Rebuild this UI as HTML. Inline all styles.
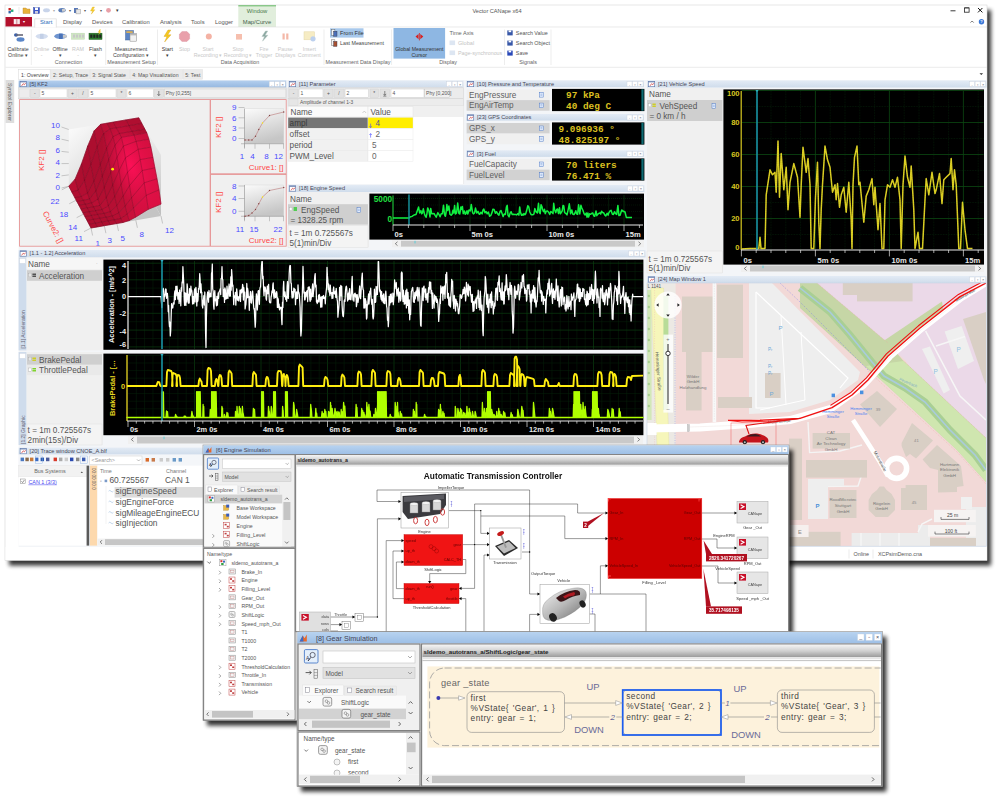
<!DOCTYPE html>
<html><head><meta charset="utf-8"><title>Vector CANape x64</title>
<style>
html,body{margin:0;padding:0;background:#fff;width:1000px;height:800px;overflow:hidden}
svg{display:block;font-family:"Liberation Sans",sans-serif;filter:blur(0.35px)}
</style></head><body>
<svg width="1000" height="800" viewBox="0 0 1000 800">
<defs>
<filter id="sh" x="-5%" y="-5%" width="115%" height="115%"><feGaussianBlur in="SourceAlpha" stdDeviation="2.2"/><feOffset dx="3.5" dy="4.5"/><feComponentTransfer><feFuncA type="linear" slope="0.8"/></feComponentTransfer></filter>
<linearGradient id="tbA" x1="0" y1="0" x2="0" y2="1"><stop offset="0" stop-color="#b4cfee"/><stop offset="1" stop-color="#96b8e0"/></linearGradient>
<linearGradient id="tbI" x1="0" y1="0" x2="0" y2="1"><stop offset="0" stop-color="#e3ebf5"/><stop offset="1" stop-color="#cfdceb"/></linearGradient>
<linearGradient id="hdr" x1="0" y1="0" x2="0" y2="1"><stop offset="0" stop-color="#f4f4f4"/><stop offset="0.5" stop-color="#d0d0d0"/><stop offset="1" stop-color="#9a9a9a"/></linearGradient>
<linearGradient id="wallL" x1="0" y1="0" x2="1" y2="1"><stop offset="0" stop-color="#ffffff"/><stop offset="1" stop-color="#c8c8c8"/></linearGradient><linearGradient id="wallR" x1="0" y1="0" x2="0" y2="1"><stop offset="0" stop-color="#f8f8f8"/><stop offset="1" stop-color="#bdbdbd"/></linearGradient><linearGradient id="mini" x1="0" y1="0" x2="0.3" y2="1"><stop offset="0" stop-color="#fbfbfb"/><stop offset="1" stop-color="#c6c6c6"/></linearGradient><radialGradient id="surf" gradientUnits="userSpaceOnUse" cx="131" cy="166" r="58"><stop offset="0" stop-color="#ff0a50"/><stop offset="0.45" stop-color="#d8103c"/><stop offset="1" stop-color="#a00d2c"/></radialGradient><clipPath id="kfclip"><rect x="20" y="100" width="189.6" height="145.8"/></clipPath><clipPath id="surfclip"><polygon points="68.8,186.2 75.1,179.2 81.5,163.9 87.8,145.9 94.2,130.8 100.6,124.3 106.9,123.2 113.3,122.1 126.0,119.9 138.8,117.8 138.8,117.8 141.8,123.4 144.8,129.1 146.8,132.9 148.9,139.2 150.9,147.1 152.9,157.4 154.9,167.9 157.0,178.8 159.0,189.8 161.0,204.1 161.0,204.1 148.3,209.3 135.5,217.2 129.2,220.5 122.8,222.5 116.5,223.6 110.1,224.7 103.7,225.8 97.4,226.9 91.0,228.0 91.0,228.0 89.0,224.2 87.0,220.4 84.9,216.6 82.9,212.8 80.9,209.0 78.9,205.2 76.8,201.4 74.8,197.6 71.8,191.9 68.8,186.2"/></clipPath><radialGradient id="hl" gradientUnits="userSpaceOnUse" cx="131" cy="166" r="40" gradientTransform="translate(131 166) rotate(70) scale(1.25 0.62) translate(-131 -166)"><stop offset="0" stop-color="#ff1058" stop-opacity="0.95"/><stop offset="0.5" stop-color="#f01050" stop-opacity="0.55"/><stop offset="1" stop-color="#e01048" stop-opacity="0"/></radialGradient><clipPath id="mapclip"><rect x="647" y="283" width="339" height="263"/></clipPath><linearGradient id="winT" x1="0" y1="0" x2="0" y2="1"><stop offset="0" stop-color="#b8d3f0"/><stop offset="1" stop-color="#9dbfe6"/></linearGradient><linearGradient id="carG" x1="0" y1="0" x2="1" y2="1"><stop offset="0" stop-color="#f4f4f4"/><stop offset="0.5" stop-color="#b8b8b8"/><stop offset="1" stop-color="#6a6a6a"/></linearGradient><clipPath id="esclip"><rect x="296" y="466.6" width="492.4" height="165"/></clipPath><clipPath id="gsclip"><rect x="422.6" y="659" width="458" height="115"/></clipPath>
</defs>
<rect x="5" y="5" width="982" height="555.5" fill="#fff" filter="url(#sh)"/>
<rect x="5.00" y="5.00" width="982.00" height="555.50" fill="#ffffff" stroke="#d8d8d8" stroke-width="0.6" />
<rect x="8.50" y="8.00" width="2.40" height="2.40" fill="#c22" />
<rect x="11.00" y="9.50" width="2.40" height="2.40" fill="#2a7" />
<rect x="8.50" y="11.00" width="2.40" height="2.40" fill="#36a" />
<line x1="19.00" y1="7.00" x2="19.00" y2="14.00" stroke="#ddd" stroke-width="0.6" />
<path d="M23 8 h3 l1 1 h3 v4.5 h-7z" fill="#e8b23a" stroke="#b8862a" stroke-width="0.4" />
<rect x="33.50" y="7.60" width="6.00" height="6.00" fill="#3b55c8" stroke="#223a99" stroke-width="0.4" />
<rect x="35.00" y="7.60" width="3.00" height="2.40" fill="#fff" />
<rect x="35.00" y="11.00" width="3.00" height="2.60" fill="#ccd" />
<ellipse cx="46.5" cy="10.3" rx="3.4" ry="2" fill="#c8d4ea"/>
<text x="53.00" y="11.50" font-size="3.5" fill="#aaa" >▾</text>
<ellipse cx="62" cy="10.3" rx="3.6" ry="2.2" fill="#5d7fb8"/>
<rect x="62.00" y="9.00" width="3.00" height="2.60" fill="#ccc" />
<text x="68.50" y="11.50" font-size="3.5" fill="#555" >▾</text>
<rect x="74.00" y="8.00" width="4.00" height="5.00" fill="#5878b8" />
<rect x="76.00" y="9.30" width="4.50" height="4.60" fill="#e8e8e8" stroke="#888" stroke-width="0.4" />
<text x="84.00" y="11.50" font-size="3.5" fill="#555" >▾</text>
<path d="M92.5 7 l-2 4 h2 l-1.2 3.2 l3.6 -4.4 h-2 l1.6 -2.8z" fill="#f6cf2f" stroke="#d8a818" stroke-width="0.3" />
<text x="100.00" y="11.50" font-size="3.5" fill="#555" >▾</text>
<circle cx="108.50" cy="10.30" r="2.4" fill="#e8a0a8" />
<text x="116.00" y="12.00" font-size="4.5" fill="#333" >▾</text>
<text x="497.00" y="13.00" font-size="5.6" fill="#555" text-anchor="middle" >Vector CANape x64</text>
<line x1="950.50" y1="10.80" x2="955.50" y2="10.80" stroke="#222" stroke-width="0.9" />
<rect x="964.50" y="8.00" width="4.60" height="4.20" fill="none" stroke="#222" stroke-width="0.8" />
<line x1="964.50" y1="7.60" x2="969.10" y2="7.60" stroke="#222" stroke-width="0.6" />
<path d="M978 8 l4.4 4.4 M982.4 8 l-4.4 4.4" fill="none" stroke="#111" stroke-width="1" />
<path d="M970.5 22.6 l1.6 -1.6 l1.6 1.6" fill="none" stroke="#444" stroke-width="0.7" />
<circle cx="981.50" cy="21.80" r="2.7" fill="#3b78d8" />
<text x="981.50" y="23.40" font-size="4" fill="#fff" text-anchor="middle" font-weight="bold" >?</text>
<rect x="5.50" y="17.00" width="26.50" height="9.60" fill="#b3102c" />
<rect x="14.00" y="19.30" width="5.60" height="4.60" fill="#f4e8ea" stroke="#fff" stroke-width="0.5" />
<line x1="16.80" y1="19.30" x2="16.80" y2="23.90" stroke="#b3102c" stroke-width="0.5" />
<text x="23.00" y="23.30" font-size="3.5" fill="#fff" >▾</text>
<rect x="238.30" y="5.60" width="37.70" height="21.40" fill="#e1eedc" />
<rect x="238.30" y="5.30" width="37.70" height="1.00" fill="#62b562" />
<text x="257.00" y="12.60" font-size="5.8" fill="#4a7a4a" text-anchor="middle" >Window</text>
<text x="257.00" y="24.00" font-size="5.8" fill="#44624a" text-anchor="middle" >Map/Curve</text>
<line x1="5.50" y1="27.00" x2="987.00" y2="27.00" stroke="#dcdcdc" stroke-width="0.6" />
<path d="M34.7 27.4 v-8.6 h21.6 v8.6" fill="#fff" stroke="#d4d4d4" stroke-width="0.6" />
<text x="40.00" y="24.00" font-size="5.8" fill="#2f6fba" >Start</text>
<text x="63.00" y="24.00" font-size="5.8" fill="#555" >Display</text>
<text x="92.00" y="24.00" font-size="5.8" fill="#555" >Devices</text>
<text x="122.00" y="24.00" font-size="5.8" fill="#555" >Calibration</text>
<text x="160.00" y="24.00" font-size="5.8" fill="#555" >Analysis</text>
<text x="191.00" y="24.00" font-size="5.8" fill="#555" >Tools</text>
<text x="215.00" y="24.00" font-size="5.8" fill="#555" >Logger</text>
<line x1="5.50" y1="67.30" x2="987.00" y2="67.30" stroke="#e2e2e2" stroke-width="0.7" />
<line x1="31.30" y1="29.50" x2="31.30" y2="65.00" stroke="#e0e0e0" stroke-width="0.6" />
<line x1="105.70" y1="29.50" x2="105.70" y2="65.00" stroke="#e0e0e0" stroke-width="0.6" />
<line x1="157.50" y1="29.50" x2="157.50" y2="65.00" stroke="#e0e0e0" stroke-width="0.6" />
<line x1="324.00" y1="29.50" x2="324.00" y2="65.00" stroke="#e0e0e0" stroke-width="0.6" />
<line x1="391.60" y1="29.50" x2="391.60" y2="65.00" stroke="#e0e0e0" stroke-width="0.6" />
<line x1="504.50" y1="29.50" x2="504.50" y2="65.00" stroke="#e0e0e0" stroke-width="0.6" />
<line x1="551.00" y1="29.50" x2="551.00" y2="65.00" stroke="#e0e0e0" stroke-width="0.6" />
<text x="68.50" y="64.30" font-size="5.4" fill="#666" text-anchor="middle" >Connection</text>
<text x="131.50" y="64.30" font-size="5.4" fill="#666" text-anchor="middle" >Measurement Setup</text>
<text x="240.00" y="64.30" font-size="5.4" fill="#666" text-anchor="middle" >Data Acquisition</text>
<text x="358.00" y="64.30" font-size="5.4" fill="#666" text-anchor="middle" >Measurement Data Display</text>
<text x="448.00" y="64.30" font-size="5.4" fill="#666" text-anchor="middle" >Display</text>
<text x="528.00" y="64.30" font-size="5.4" fill="#666" text-anchor="middle" >Signals</text>
<text x="18.00" y="50.50" font-size="5.3" fill="#444" text-anchor="middle" >Calibrate</text>
<text x="18.00" y="56.60" font-size="5.3" fill="#444" text-anchor="middle" >Online ▾</text>
<ellipse cx="16" cy="35" rx="2" ry="1.8" fill="#3a5fa8"/>
<rect x="16.00" y="34.20" width="7.00" height="1.60" fill="#667" />
<ellipse cx="20.5" cy="39.5" rx="4" ry="2.2" fill="#5a86c8"/>
<text x="41.50" y="50.50" font-size="5.3" fill="#c4c4c4" text-anchor="middle" >Online</text>
<text x="41.50" y="56.50" font-size="5" fill="#bbb" text-anchor="middle" >-</text>
<ellipse cx="41.8" cy="36.3" rx="6" ry="2.6" fill="#d3ddef"/>
<rect x="40.00" y="33.80" width="3.60" height="5.00" fill="#c2cfe6" />
<text x="60.00" y="50.50" font-size="5.3" fill="#444" text-anchor="middle" >Offline</text>
<text x="60.00" y="57.00" font-size="4.6" fill="#444" text-anchor="middle" >▾</text>
<ellipse cx="60.5" cy="36.3" rx="6.2" ry="2.8" fill="#6f94cf"/>
<rect x="59.00" y="33.60" width="3.60" height="5.40" fill="#4a73b8" />
<rect x="63.00" y="34.80" width="3.60" height="3.00" fill="#c8c8c8" />
<text x="78.00" y="50.50" font-size="5.3" fill="#c4c4c4" text-anchor="middle" >RAM</text>
<text x="78.00" y="56.50" font-size="5" fill="#bbb" text-anchor="middle" >-</text>
<rect x="71.50" y="33.20" width="13.00" height="6.00" fill="#cfe6c3" stroke="#bcd8b0" stroke-width="0.5" />
<rect x="73.00" y="34.60" width="2.00" height="3.00" fill="#c8c8c8" />
<rect x="76.00" y="34.60" width="2.00" height="3.00" fill="#c8c8c8" />
<rect x="79.00" y="34.60" width="2.00" height="3.00" fill="#c8c8c8" />
<rect x="82.00" y="34.60" width="2.00" height="3.00" fill="#c8c8c8" />
<text x="95.50" y="50.50" font-size="5.3" fill="#444" text-anchor="middle" >Flash</text>
<text x="95.50" y="57.00" font-size="4.6" fill="#444" text-anchor="middle" >▾</text>
<rect x="89.00" y="33.20" width="13.00" height="6.20" fill="#2c7a2c" stroke="#1c5a1c" stroke-width="0.5" />
<rect x="90.30" y="34.60" width="2.00" height="3.20" fill="#222" />
<rect x="93.30" y="34.60" width="2.00" height="3.20" fill="#222" />
<rect x="96.30" y="34.60" width="2.00" height="3.20" fill="#222" />
<rect x="99.30" y="34.60" width="2.00" height="3.20" fill="#222" />
<path d="M99.5 29.5 l-1.6 3 h1.4 l-1 2.4 l3 -3.4 h-1.5 l1.2 -2z" fill="#f2c42c" />
<text x="131.00" y="50.50" font-size="5.3" fill="#444" text-anchor="middle" >Measurement</text>
<text x="131.00" y="56.60" font-size="5.3" fill="#444" text-anchor="middle" >Configuration ▾</text>
<rect x="125.50" y="30.50" width="8.00" height="9.50" fill="#5b84c4" stroke="#46689e" stroke-width="0.5" />
<rect x="126.30" y="31.30" width="6.40" height="1.60" fill="#e9b44c" />
<rect x="130.00" y="33.60" width="6.60" height="7.60" fill="#f2f2f2" stroke="#888" stroke-width="0.5" />
<rect x="130.00" y="33.60" width="6.60" height="1.80" fill="#b8b8b8" />
<text x="167.30" y="50.50" font-size="5.3" fill="#333" text-anchor="middle" >Start</text>
<text x="167.30" y="57.00" font-size="4.6" fill="#333" text-anchor="middle" >▾</text>
<path d="M168 30 l-4 6.4 h3 l-2.4 5.6 l6.4 -7.2 h-3.2 l3 -4.8z" fill="#f6c81e" stroke="#d4a017" stroke-width="0.4" />
<text x="184.50" y="50.50" font-size="5.3" fill="#c8c8c8" text-anchor="middle" >Stop</text>
<path d="M182 31.6 h5 l2.6 2.6 v4.6 l-2.6 2.6 h-5 l-2.6 -2.6 v-4.6z" fill="#e9a0ab" stroke="#d8909c" stroke-width="0.4" />
<text x="208.00" y="50.50" font-size="5.3" fill="#c8c8c8" text-anchor="middle" >Start</text>
<text x="208.00" y="56.60" font-size="5.3" fill="#c8c8c8" text-anchor="middle" >Recording ▾</text>
<circle cx="208.80" cy="36.50" r="3" fill="#f4b2a4" />
<text x="238.00" y="50.50" font-size="5.3" fill="#c8c8c8" text-anchor="middle" >Stop</text>
<text x="238.00" y="56.60" font-size="5.3" fill="#c8c8c8" text-anchor="middle" >Recording ▾</text>
<rect x="236.00" y="34.00" width="6.00" height="5.60" fill="#f6bfae" />
<text x="264.00" y="50.50" font-size="5.3" fill="#c8c8c8" text-anchor="middle" >Fire</text>
<text x="264.00" y="56.60" font-size="5.3" fill="#c8c8c8" text-anchor="middle" >Trigger</text>
<path d="M265.5 31 l-3.6 5.4 h2.6 l-2 4.8 l5.4 -6 h-2.8 l2.6 -4.2z" fill="#8aa7a0" stroke="#b8c8c4" stroke-width="0.5" />
<text x="285.30" y="50.50" font-size="5.3" fill="#c8c8c8" text-anchor="middle" >Pause</text>
<text x="285.30" y="56.60" font-size="5.3" fill="#c8c8c8" text-anchor="middle" >Displays</text>
<rect x="282.50" y="33.50" width="2.20" height="6.00" fill="#f4b8a8" />
<rect x="286.20" y="33.50" width="2.20" height="6.00" fill="#f4b8a8" />
<text x="309.30" y="50.50" font-size="5.3" fill="#c8c8c8" text-anchor="middle" >Insert</text>
<text x="309.30" y="56.60" font-size="5.3" fill="#c8c8c8" text-anchor="middle" >Comment</text>
<rect x="304.00" y="31.80" width="10.50" height="8.00" fill="#f6ecc4" stroke="#e4d8a8" stroke-width="0.5" />
<circle cx="313.00" cy="38.80" r="2.6" fill="#bcd0ee" />
<rect x="330.00" y="28.30" width="33.50" height="9.30" fill="#a7c8ec" />
<rect x="331.50" y="29.60" width="3.40" height="5.60" fill="#f4f4f4" stroke="#555" stroke-width="0.4" />
<rect x="333.60" y="31.20" width="3.40" height="5.00" fill="#4a6fb8" stroke="#334" stroke-width="0.4" />
<text x="340.00" y="35.00" font-size="5.6" fill="#333" >From File</text>
<rect x="331.50" y="39.80" width="3.40" height="5.60" fill="#f4f4f4" stroke="#555" stroke-width="0.4" />
<rect x="333.60" y="41.40" width="3.40" height="5.00" fill="#a85030" stroke="#334" stroke-width="0.4" />
<text x="340.00" y="45.20" font-size="5.3" fill="#444" >Last Measurement</text>
<rect x="393.50" y="28.00" width="51.60" height="30.60" fill="#8eb7e3" />
<path d="M415.5 36.6 l3 -2.6 v5.2z M423.3 36.6 l-3 -2.6 v5.2z" fill="#d82020" />
<line x1="419.40" y1="33.00" x2="419.40" y2="40.40" stroke="#d82020" stroke-width="0.8" />
<text x="419.30" y="50.50" font-size="5.2" fill="#333" text-anchor="middle" >Global Measurement</text>
<text x="419.30" y="56.60" font-size="5.2" fill="#333" text-anchor="middle" >Cursor</text>
<text x="449.50" y="35.00" font-size="5.6" fill="#666" >Time Axis</text>
<rect x="449.50" y="40.50" width="5.60" height="4.60" fill="#dde6f2" />
<text x="458.00" y="45.20" font-size="5.6" fill="#c4c4c4" >Global</text>
<rect x="449.50" y="50.50" width="5.60" height="4.60" fill="#dde6f2" />
<text x="458.00" y="55.20" font-size="5.3" fill="#c4c4c4" >Page-synchronous</text>
<rect x="507.30" y="30.40" width="5.40" height="5.00" fill="#3858a8" />
<rect x="508.60" y="30.40" width="2.60" height="1.80" fill="#fff" />
<text x="515.80" y="35.00" font-size="5.4" fill="#555" >Search Value</text>
<rect x="507.30" y="40.60" width="5.40" height="5.00" fill="#3858a8" />
<rect x="508.60" y="40.60" width="2.60" height="1.80" fill="#fff" />
<text x="515.80" y="45.20" font-size="5.4" fill="#555" >Search Object</text>
<rect x="507.30" y="50.60" width="5.40" height="5.00" fill="#2848b8" />
<rect x="508.60" y="50.60" width="2.60" height="1.80" fill="#fff" />
<text x="515.80" y="55.20" font-size="5.4" fill="#555" >Save</text>
<rect x="18.60" y="69.30" width="31.60" height="10.20" fill="#fff" stroke="#dcdcdc" stroke-width="0.6" />
<text x="21.00" y="76.70" font-size="5.2" fill="#444" >1: Overview</text>
<rect x="50.80" y="69.60" width="38.60" height="9.60" fill="#ebebeb" stroke="#e0e0e0" stroke-width="0.5" />
<text x="53.00" y="76.70" font-size="5.2" fill="#555" >2: Setup, Trace</text>
<rect x="90.00" y="69.60" width="39.40" height="9.60" fill="#ebebeb" stroke="#e0e0e0" stroke-width="0.5" />
<text x="92.20" y="76.70" font-size="5.2" fill="#555" >3: Signal State</text>
<rect x="130.00" y="69.60" width="52.40" height="9.60" fill="#ebebeb" stroke="#e0e0e0" stroke-width="0.5" />
<text x="132.20" y="76.70" font-size="5.2" fill="#555" >4: Map Visualization</text>
<rect x="183.00" y="69.60" width="19.60" height="9.60" fill="#ebebeb" stroke="#e0e0e0" stroke-width="0.5" />
<text x="185.20" y="76.70" font-size="5.2" fill="#555" >5: Test</text>
<path d="M979.5 73.3 l1.8 1.8 l1.8 -1.8z" fill="#333" />
<rect x="18.60" y="80.00" width="968.00" height="467.00" fill="#f3f5f8" />
<rect x="5.60" y="80.00" width="8.60" height="43.00" fill="#dddddd" />
<text transform="translate(7.6,83) rotate(90)" font-size="5.2" fill="#666">Symbol Explorer</text>
<rect x="5.60" y="547.00" width="981.00" height="13.00" fill="#fff" />
<line x1="849.00" y1="549.50" x2="849.00" y2="558.50" stroke="#ddd" stroke-width="0.6" />
<line x1="873.00" y1="549.50" x2="873.00" y2="558.50" stroke="#ddd" stroke-width="0.6" />
<text x="853.50" y="556.40" font-size="5.4" fill="#555" >Online</text>
<text x="878.00" y="556.40" font-size="5.4" fill="#555" >XCPsimDemo.cna</text>
<rect x="18.60" y="80.50" width="267.60" height="7.00" fill="url(#tbA)" />
<rect x="20.10" y="81.30" width="6.20" height="5.40" fill="#fff" stroke="#5a74a8" stroke-width="0.6" />
<line x1="20.10" y1="81.90" x2="26.30" y2="81.90" stroke="#5a74a8" stroke-width="0.8" />
<path d="M21.6 85.9 l1.6 -2.2 l1.2 1 l1.2 -1.6" fill="none" stroke="#c33" stroke-width="0.7" />
<text x="29.60" y="85.80" font-size="5.6" fill="#445" >[5] KF2</text>
<rect x="269.20" y="81.50" width="5.00" height="5.00" fill="#fff" stroke="#c8d0dc" stroke-width="0.4" />
<text x="271.70" y="85.50" font-size="4" fill="#556" text-anchor="middle" >.</text>
<rect x="274.70" y="81.50" width="5.00" height="5.00" fill="#fff" stroke="#c8d0dc" stroke-width="0.4" />
<text x="277.20" y="85.50" font-size="4" fill="#556" text-anchor="middle" >▫</text>
<rect x="280.20" y="81.50" width="5.00" height="5.00" fill="#fff" stroke="#c8d0dc" stroke-width="0.4" />
<text x="282.70" y="85.50" font-size="4" fill="#556" text-anchor="middle" >×</text>
<rect x="18.60" y="87.80" width="267.60" height="11.00" fill="#ececec" stroke="#cfcfcf" stroke-width="0.5" />
<rect x="19.60" y="89.00" width="10.00" height="8.60" fill="#ededed" stroke="#d6d6d6" stroke-width="0.4" />
<rect x="30.50" y="89.00" width="8.60" height="8.60" fill="#e2e2e2" stroke="#cfcfcf" stroke-width="0.4" />
<text x="34.80" y="95.40" font-size="5" fill="#555" text-anchor="middle" >-</text>
<rect x="40.00" y="89.00" width="27.00" height="8.60" fill="#fff" stroke="#c8c8c8" stroke-width="0.4" />
<text x="41.50" y="95.30" font-size="5" fill="#555" >5</text>
<rect x="68.00" y="89.00" width="9.00" height="8.60" fill="#e2e2e2" stroke="#cfcfcf" stroke-width="0.4" />
<text x="72.50" y="95.40" font-size="5" fill="#555" text-anchor="middle" >+</text>
<rect x="78.00" y="89.00" width="10.00" height="8.60" fill="#e2e2e2" stroke="#cfcfcf" stroke-width="0.4" />
<text x="83.00" y="95.40" font-size="5" fill="#555" text-anchor="middle" >/</text>
<rect x="89.00" y="89.00" width="27.00" height="8.60" fill="#fff" stroke="#c8c8c8" stroke-width="0.4" />
<text x="90.50" y="95.30" font-size="5" fill="#555" >5</text>
<rect x="117.00" y="89.00" width="9.00" height="8.60" fill="#e2e2e2" stroke="#cfcfcf" stroke-width="0.4" />
<text x="121.50" y="95.40" font-size="5" fill="#555" text-anchor="middle" >*</text>
<rect x="127.00" y="89.00" width="26.60" height="8.60" fill="#fff" stroke="#c8c8c8" stroke-width="0.4" />
<text x="128.50" y="95.30" font-size="5" fill="#555" >6</text>
<rect x="154.00" y="89.00" width="9.60" height="8.60" fill="#e2e2e2" stroke="#cfcfcf" stroke-width="0.4" />
<text x="158.80" y="95.40" font-size="5" fill="#555" text-anchor="middle" ></text>
<path d="M158.8 91 v4.6 m-1.4 -1.5 l1.4 1.5 l1.4 -1.5" fill="none" stroke="#444" stroke-width="0.6" />
<rect x="164.30" y="89.00" width="121.60" height="8.60" fill="#f0f0f0" stroke="#c8c8c8" stroke-width="0.4" />
<text x="165.80" y="95.30" font-size="5" fill="#555" >Phy [0,255]</text>
<rect x="19.60" y="99.60" width="190.50" height="146.60" fill="#f0f0f0" stroke="#e58a8a" stroke-width="0.8" />
<rect x="210.60" y="99.60" width="75.60" height="74.20" fill="#f0f0f0" stroke="#e58a8a" stroke-width="0.8" />
<rect x="210.60" y="174.40" width="75.60" height="71.80" fill="#f0f0f0" stroke="#e58a8a" stroke-width="0.8" />
<g clip-path="url(#kfclip)">
<polygon points="68.8,129.5 138.8,118.0 138.8,176.0 68.8,186.2" fill="url(#wallL)" />
<polygon points="138.8,118.0 161.0,155.0 161.0,216.0 138.8,176.0" fill="url(#wallR)" />
<polygon points="68.8,186.2 138.8,176.0 161.0,216.0 91.0,228.0" fill="#c4c4c4" />
<text x="60.00" y="127.50" font-size="8" fill="#4a4aff" text-anchor="end" >10</text>
<line x1="61.50" y1="127.00" x2="68.75" y2="129.50" stroke="#999" stroke-width="0.5" />
<text x="60.00" y="140.00" font-size="8" fill="#4a4aff" text-anchor="end" >8</text>
<line x1="61.50" y1="139.20" x2="68.75" y2="140.85" stroke="#999" stroke-width="0.5" />
<text x="60.00" y="152.50" font-size="8" fill="#4a4aff" text-anchor="end" >6</text>
<line x1="61.50" y1="151.40" x2="68.75" y2="152.20" stroke="#999" stroke-width="0.5" />
<text x="60.00" y="165.00" font-size="8" fill="#4a4aff" text-anchor="end" >4</text>
<line x1="61.50" y1="163.60" x2="68.75" y2="163.55" stroke="#999" stroke-width="0.5" />
<text x="60.00" y="177.50" font-size="8" fill="#4a4aff" text-anchor="end" >2</text>
<line x1="61.50" y1="175.80" x2="68.75" y2="174.90" stroke="#999" stroke-width="0.5" />
<text x="60.00" y="190.00" font-size="8" fill="#4a4aff" text-anchor="end" >0</text>
<line x1="61.50" y1="188.00" x2="68.75" y2="186.25" stroke="#999" stroke-width="0.5" />
<text transform="translate(43.6,171) rotate(-90)" font-size="8" fill="#ff4848">KF2 []</text>
<text x="50.60" y="203.60" font-size="8" fill="#4a4aff" >22</text>
<text x="59.40" y="216.80" font-size="8" fill="#4a4aff" >18</text>
<text x="68.20" y="230.40" font-size="8" fill="#4a4aff" >14</text>
<text x="74.60" y="240.60" font-size="8" fill="#4a4aff" >11</text>
<line x1="68.75" y1="186.25" x2="61.75" y2="189.85" stroke="#999" stroke-width="0.5" />
<line x1="76.20" y1="200.20" x2="69.20" y2="203.80" stroke="#999" stroke-width="0.5" />
<line x1="83.60" y1="214.10" x2="76.60" y2="217.70" stroke="#999" stroke-width="0.5" />
<line x1="91.00" y1="228.00" x2="84.00" y2="231.60" stroke="#999" stroke-width="0.5" />
<text transform="translate(42.5,213) rotate(62)" font-size="8" fill="#ff4848">Curve2: []</text>
<text x="95.50" y="245.60" font-size="8" fill="#4a4aff" >1</text>
<text x="107.60" y="243.00" font-size="8" fill="#4a4aff" >3</text>
<text x="120.50" y="241.00" font-size="8" fill="#4a4aff" >5</text>
<text x="139.60" y="237.40" font-size="8" fill="#4a4aff" >8</text>
<text x="165.00" y="233.40" font-size="8" fill="#4a4aff" >12</text>
<line x1="91.00" y1="228.00" x2="92.60" y2="235.50" stroke="#999" stroke-width="0.5" />
<line x1="104.30" y1="225.72" x2="105.90" y2="233.22" stroke="#999" stroke-width="0.5" />
<line x1="116.90" y1="223.56" x2="118.50" y2="231.06" stroke="#999" stroke-width="0.5" />
<line x1="135.80" y1="220.32" x2="137.40" y2="227.82" stroke="#999" stroke-width="0.5" />
<line x1="161.00" y1="216.00" x2="162.60" y2="223.50" stroke="#999" stroke-width="0.5" />
<text x="133.00" y="252.60" font-size="8" fill="#ff4848" >Curve1: []</text>
<polygon points="68.8,186.2 75.1,179.2 78.1,190.2 71.8,191.9" fill="#b80f33" stroke="#b80f33" stroke-width="0.6" stroke-linejoin="round"/>
<polygon points="75.1,179.2 81.5,163.9 84.5,180.3 78.1,190.2" fill="#ad0e2f" stroke="#ad0e2f" stroke-width="0.6" stroke-linejoin="round"/>
<polygon points="81.5,163.9 87.8,145.9 90.9,164.1 84.5,180.3" fill="#ab0d2f" stroke="#ab0d2f" stroke-width="0.6" stroke-linejoin="round"/>
<polygon points="87.8,145.9 94.2,130.8 97.2,146.8 90.9,164.1" fill="#ac0e2f" stroke="#ac0e2f" stroke-width="0.6" stroke-linejoin="round"/>
<polygon points="94.2,130.8 100.6,124.3 103.6,133.5 97.2,146.8" fill="#b20e31" stroke="#b20e31" stroke-width="0.6" stroke-linejoin="round"/>
<polygon points="100.6,124.3 106.9,123.2 110.0,128.9 103.6,133.5" fill="#b90f34" stroke="#b90f34" stroke-width="0.6" stroke-linejoin="round"/>
<polygon points="106.9,123.2 113.3,122.1 116.3,127.8 110.0,128.9" fill="#af0e30" stroke="#af0e30" stroke-width="0.6" stroke-linejoin="round"/>
<polygon points="113.3,122.1 126.0,119.9 129.1,125.6 116.3,127.8" fill="#af0e30" stroke="#af0e30" stroke-width="0.6" stroke-linejoin="round"/>
<polygon points="126.0,119.9 138.8,117.8 141.8,123.4 129.1,125.6" fill="#af0e30" stroke="#af0e30" stroke-width="0.6" stroke-linejoin="round"/>
<polygon points="71.8,191.9 78.1,190.2 81.2,196.5 74.8,197.6" fill="#b10e31" stroke="#b10e31" stroke-width="0.6" stroke-linejoin="round"/>
<polygon points="78.1,190.2 84.5,180.3 87.5,193.1 81.2,196.5" fill="#b30e32" stroke="#b30e32" stroke-width="0.6" stroke-linejoin="round"/>
<polygon points="84.5,180.3 90.9,164.1 93.9,181.1 87.5,193.1" fill="#ac0e2f" stroke="#ac0e2f" stroke-width="0.6" stroke-linejoin="round"/>
<polygon points="90.9,164.1 97.2,146.8 100.3,164.6 93.9,181.1" fill="#ab0d2f" stroke="#ab0d2f" stroke-width="0.6" stroke-linejoin="round"/>
<polygon points="97.2,146.8 103.6,133.5 106.6,148.2 100.3,164.6" fill="#ad0e2f" stroke="#ad0e2f" stroke-width="0.6" stroke-linejoin="round"/>
<polygon points="103.6,133.5 110.0,128.9 113.0,136.6 106.6,148.2" fill="#b40e32" stroke="#b40e32" stroke-width="0.6" stroke-linejoin="round"/>
<polygon points="110.0,128.9 116.3,127.8 119.4,133.5 113.0,136.6" fill="#b50e32" stroke="#b50e32" stroke-width="0.6" stroke-linejoin="round"/>
<polygon points="116.3,127.8 129.1,125.6 132.1,131.3 119.4,133.5" fill="#af0e30" stroke="#af0e30" stroke-width="0.6" stroke-linejoin="round"/>
<polygon points="129.1,125.6 141.8,123.4 144.8,129.1 132.1,131.3" fill="#af0e30" stroke="#af0e30" stroke-width="0.6" stroke-linejoin="round"/>
<polygon points="74.8,197.6 81.2,196.5 83.2,200.3 76.8,201.4" fill="#af0e30" stroke="#af0e30" stroke-width="0.6" stroke-linejoin="round"/>
<polygon points="81.2,196.5 87.5,193.1 89.6,199.0 83.2,200.3" fill="#b90f34" stroke="#b90f34" stroke-width="0.6" stroke-linejoin="round"/>
<polygon points="87.5,193.1 93.9,181.1 95.9,190.9 89.6,199.0" fill="#af0e30" stroke="#af0e30" stroke-width="0.6" stroke-linejoin="round"/>
<polygon points="93.9,181.1 100.3,164.6 102.3,176.3 95.9,190.9" fill="#ac0e2f" stroke="#ac0e2f" stroke-width="0.6" stroke-linejoin="round"/>
<polygon points="100.3,164.6 106.6,148.2 108.7,159.5 102.3,176.3" fill="#ac0e2f" stroke="#ac0e2f" stroke-width="0.6" stroke-linejoin="round"/>
<polygon points="106.6,148.2 113.0,136.6 115.0,145.1 108.7,159.5" fill="#ae0e30" stroke="#ae0e30" stroke-width="0.6" stroke-linejoin="round"/>
<polygon points="113.0,136.6 119.4,133.5 121.4,137.4 115.0,145.1" fill="#b80f33" stroke="#b80f33" stroke-width="0.6" stroke-linejoin="round"/>
<polygon points="119.4,133.5 132.1,131.3 134.1,135.1 121.4,137.4" fill="#b00e30" stroke="#b00e30" stroke-width="0.6" stroke-linejoin="round"/>
<polygon points="132.1,131.3 144.8,129.1 146.8,132.9 134.1,135.1" fill="#af0e30" stroke="#af0e30" stroke-width="0.6" stroke-linejoin="round"/>
<polygon points="76.8,201.4 83.2,200.3 85.2,204.1 78.9,205.2" fill="#af0e30" stroke="#af0e30" stroke-width="0.6" stroke-linejoin="round"/>
<polygon points="83.2,200.3 89.6,199.0 91.6,203.0 85.2,204.1" fill="#b00e31" stroke="#b00e31" stroke-width="0.6" stroke-linejoin="round"/>
<polygon points="89.6,199.0 95.9,190.9 98.0,199.2 91.6,203.0" fill="#b40e32" stroke="#b40e32" stroke-width="0.6" stroke-linejoin="round"/>
<polygon points="95.9,190.9 102.3,176.3 104.3,187.7 98.0,199.2" fill="#ae0e30" stroke="#ae0e30" stroke-width="0.6" stroke-linejoin="round"/>
<polygon points="102.3,176.3 108.7,159.5 110.7,172.4 104.3,187.7" fill="#ae0e30" stroke="#ae0e30" stroke-width="0.6" stroke-linejoin="round"/>
<polygon points="108.7,159.5 115.0,145.1 117.0,157.1 110.7,172.4" fill="#b10e31" stroke="#b10e31" stroke-width="0.6" stroke-linejoin="round"/>
<polygon points="115.0,145.1 121.4,137.4 123.4,146.0 117.0,157.1" fill="#bb0f35" stroke="#bb0f35" stroke-width="0.6" stroke-linejoin="round"/>
<polygon points="121.4,137.4 134.1,135.1 136.1,141.4 123.4,146.0" fill="#d20f3f" stroke="#d20f3f" stroke-width="0.6" stroke-linejoin="round"/>
<polygon points="134.1,135.1 146.8,132.9 148.9,139.2 136.1,141.4" fill="#cb0f3c" stroke="#cb0f3c" stroke-width="0.6" stroke-linejoin="round"/>
<polygon points="78.9,205.2 85.2,204.1 87.2,207.9 80.9,209.0" fill="#af0e30" stroke="#af0e30" stroke-width="0.6" stroke-linejoin="round"/>
<polygon points="85.2,204.1 91.6,203.0 93.6,206.8 87.2,207.9" fill="#af0e30" stroke="#af0e30" stroke-width="0.6" stroke-linejoin="round"/>
<polygon points="91.6,203.0 98.0,199.2 100.0,205.3 93.6,206.8" fill="#b90f34" stroke="#b90f34" stroke-width="0.6" stroke-linejoin="round"/>
<polygon points="98.0,199.2 104.3,187.7 106.3,197.7 100.0,205.3" fill="#b20e31" stroke="#b20e31" stroke-width="0.6" stroke-linejoin="round"/>
<polygon points="104.3,187.7 110.7,172.4 112.7,185.0 106.3,197.7" fill="#b00e31" stroke="#b00e31" stroke-width="0.6" stroke-linejoin="round"/>
<polygon points="110.7,172.4 117.0,157.1 119.1,170.5 112.7,185.0" fill="#b30e31" stroke="#b30e31" stroke-width="0.6" stroke-linejoin="round"/>
<polygon points="117.0,157.1 123.4,146.0 125.4,157.9 119.1,170.5" fill="#ba0f34" stroke="#ba0f34" stroke-width="0.6" stroke-linejoin="round"/>
<polygon points="123.4,146.0 136.1,141.4 138.2,149.3 125.4,157.9" fill="#d70f40" stroke="#d70f40" stroke-width="0.6" stroke-linejoin="round"/>
<polygon points="136.1,141.4 148.9,139.2 150.9,147.1 138.2,149.3" fill="#d60f40" stroke="#d60f40" stroke-width="0.6" stroke-linejoin="round"/>
<polygon points="80.9,209.0 87.2,207.9 89.3,211.7 82.9,212.8" fill="#af0e30" stroke="#af0e30" stroke-width="0.6" stroke-linejoin="round"/>
<polygon points="87.2,207.9 93.6,206.8 95.6,210.6 89.3,211.7" fill="#af0e30" stroke="#af0e30" stroke-width="0.6" stroke-linejoin="round"/>
<polygon points="93.6,206.8 100.0,205.3 102.0,209.5 95.6,210.6" fill="#b10e31" stroke="#b10e31" stroke-width="0.6" stroke-linejoin="round"/>
<polygon points="100.0,205.3 106.3,197.7 108.4,205.8 102.0,209.5" fill="#b60f33" stroke="#b60f33" stroke-width="0.6" stroke-linejoin="round"/>
<polygon points="106.3,197.7 112.7,185.0 114.7,196.5 108.4,205.8" fill="#b30e32" stroke="#b30e32" stroke-width="0.6" stroke-linejoin="round"/>
<polygon points="112.7,185.0 119.1,170.5 121.1,184.3 114.7,196.5" fill="#b50e32" stroke="#b50e32" stroke-width="0.6" stroke-linejoin="round"/>
<polygon points="119.1,170.5 125.4,157.9 127.5,172.2 121.1,184.3" fill="#bc0f35" stroke="#bc0f35" stroke-width="0.6" stroke-linejoin="round"/>
<polygon points="125.4,157.9 138.2,149.3 140.2,159.6 127.5,172.2" fill="#d30f3f" stroke="#d30f3f" stroke-width="0.6" stroke-linejoin="round"/>
<polygon points="138.2,149.3 150.9,147.1 152.9,157.4 140.2,159.6" fill="#dd1043" stroke="#dd1043" stroke-width="0.6" stroke-linejoin="round"/>
<polygon points="82.9,212.8 89.3,211.7 91.3,215.5 84.9,216.6" fill="#af0e30" stroke="#af0e30" stroke-width="0.6" stroke-linejoin="round"/>
<polygon points="89.3,211.7 95.6,210.6 97.7,214.4 91.3,215.5" fill="#af0e30" stroke="#af0e30" stroke-width="0.6" stroke-linejoin="round"/>
<polygon points="95.6,210.6 102.0,209.5 104.0,213.3 97.7,214.4" fill="#af0e30" stroke="#af0e30" stroke-width="0.6" stroke-linejoin="round"/>
<polygon points="102.0,209.5 108.4,205.8 110.4,211.7 104.0,213.3" fill="#b80f34" stroke="#b80f34" stroke-width="0.6" stroke-linejoin="round"/>
<polygon points="108.4,205.8 114.7,196.5 116.8,205.7 110.4,211.7" fill="#b60f33" stroke="#b60f33" stroke-width="0.6" stroke-linejoin="round"/>
<polygon points="114.7,196.5 121.1,184.3 123.1,196.2 116.8,205.7" fill="#b70f33" stroke="#b70f33" stroke-width="0.6" stroke-linejoin="round"/>
<polygon points="121.1,184.3 127.5,172.2 129.5,185.7 123.1,196.2" fill="#bc0f35" stroke="#bc0f35" stroke-width="0.6" stroke-linejoin="round"/>
<polygon points="127.5,172.2 140.2,159.6 142.2,170.5 129.5,185.7" fill="#cc0f3c" stroke="#cc0f3c" stroke-width="0.6" stroke-linejoin="round"/>
<polygon points="140.2,159.6 152.9,157.4 154.9,167.9 142.2,170.5" fill="#dd1044" stroke="#dd1044" stroke-width="0.6" stroke-linejoin="round"/>
<polygon points="84.9,216.6 91.3,215.5 93.3,219.3 87.0,220.4" fill="#af0e30" stroke="#af0e30" stroke-width="0.6" stroke-linejoin="round"/>
<polygon points="91.3,215.5 97.7,214.4 99.7,218.2 93.3,219.3" fill="#af0e30" stroke="#af0e30" stroke-width="0.6" stroke-linejoin="round"/>
<polygon points="97.7,214.4 104.0,213.3 106.0,217.1 99.7,218.2" fill="#af0e30" stroke="#af0e30" stroke-width="0.6" stroke-linejoin="round"/>
<polygon points="104.0,213.3 110.4,211.7 112.4,216.0 106.0,217.1" fill="#b20e31" stroke="#b20e31" stroke-width="0.6" stroke-linejoin="round"/>
<polygon points="110.4,211.7 116.8,205.7 118.8,212.9 112.4,216.0" fill="#b80f34" stroke="#b80f34" stroke-width="0.6" stroke-linejoin="round"/>
<polygon points="116.8,205.7 123.1,196.2 125.1,206.2 118.8,212.9" fill="#ba0f34" stroke="#ba0f34" stroke-width="0.6" stroke-linejoin="round"/>
<polygon points="123.1,196.2 129.5,185.7 131.5,197.8 125.1,206.2" fill="#be0f36" stroke="#be0f36" stroke-width="0.6" stroke-linejoin="round"/>
<polygon points="129.5,185.7 142.2,170.5 144.2,182.8 131.5,197.8" fill="#ca0f3b" stroke="#ca0f3b" stroke-width="0.6" stroke-linejoin="round"/>
<polygon points="142.2,170.5 154.9,167.9 157.0,178.8 144.2,182.8" fill="#dd1044" stroke="#dd1044" stroke-width="0.6" stroke-linejoin="round"/>
<polygon points="87.0,220.4 93.3,219.3 95.3,223.1 89.0,224.2" fill="#af0e30" stroke="#af0e30" stroke-width="0.6" stroke-linejoin="round"/>
<polygon points="93.3,219.3 99.7,218.2 101.7,222.0 95.3,223.1" fill="#af0e30" stroke="#af0e30" stroke-width="0.6" stroke-linejoin="round"/>
<polygon points="99.7,218.2 106.0,217.1 108.1,220.9 101.7,222.0" fill="#af0e30" stroke="#af0e30" stroke-width="0.6" stroke-linejoin="round"/>
<polygon points="106.0,217.1 112.4,216.0 114.4,219.8 108.1,220.9" fill="#af0e30" stroke="#af0e30" stroke-width="0.6" stroke-linejoin="round"/>
<polygon points="112.4,216.0 118.8,212.9 120.8,218.3 114.4,219.8" fill="#b60f33" stroke="#b60f33" stroke-width="0.6" stroke-linejoin="round"/>
<polygon points="118.8,212.9 125.1,206.2 127.2,214.1 120.8,218.3" fill="#bc0f35" stroke="#bc0f35" stroke-width="0.6" stroke-linejoin="round"/>
<polygon points="125.1,206.2 131.5,197.8 133.5,208.0 127.2,214.1" fill="#c10f37" stroke="#c10f37" stroke-width="0.6" stroke-linejoin="round"/>
<polygon points="131.5,197.8 144.2,182.8 146.2,195.3 133.5,208.0" fill="#cb0f3b" stroke="#cb0f3b" stroke-width="0.6" stroke-linejoin="round"/>
<polygon points="144.2,182.8 157.0,178.8 159.0,189.8 146.2,195.3" fill="#dc1043" stroke="#dc1043" stroke-width="0.6" stroke-linejoin="round"/>
<polygon points="89.0,224.2 95.3,223.1 97.4,226.9 91.0,228.0" fill="#af0e30" stroke="#af0e30" stroke-width="0.6" stroke-linejoin="round"/>
<polygon points="95.3,223.1 101.7,222.0 103.7,225.8 97.4,226.9" fill="#af0e30" stroke="#af0e30" stroke-width="0.6" stroke-linejoin="round"/>
<polygon points="101.7,222.0 108.1,220.9 110.1,224.7 103.7,225.8" fill="#af0e30" stroke="#af0e30" stroke-width="0.6" stroke-linejoin="round"/>
<polygon points="108.1,220.9 114.4,219.8 116.5,223.6 110.1,224.7" fill="#af0e30" stroke="#af0e30" stroke-width="0.6" stroke-linejoin="round"/>
<polygon points="114.4,219.8 120.8,218.3 122.8,222.5 116.5,223.6" fill="#b20e31" stroke="#b20e31" stroke-width="0.6" stroke-linejoin="round"/>
<polygon points="120.8,218.3 127.2,214.1 129.2,220.5 122.8,222.5" fill="#bc0f35" stroke="#bc0f35" stroke-width="0.6" stroke-linejoin="round"/>
<polygon points="127.2,214.1 133.5,208.0 135.5,217.2 129.2,220.5" fill="#c80f3a" stroke="#c80f3a" stroke-width="0.6" stroke-linejoin="round"/>
<polygon points="133.5,208.0 146.2,195.3 148.3,209.3 135.5,217.2" fill="#d30f3f" stroke="#d30f3f" stroke-width="0.6" stroke-linejoin="round"/>
<polygon points="146.2,195.3 159.0,189.8 161.0,204.1 148.3,209.3" fill="#dc1043" stroke="#dc1043" stroke-width="0.6" stroke-linejoin="round"/>
<rect x="60" y="110" width="110" height="125" fill="url(#hl)" clip-path="url(#surfclip)"/>
<polyline points="68.8,186.2 71.8,191.9 74.8,197.6 76.8,201.4 78.9,205.2 80.9,209.0 82.9,212.8 84.9,216.6 87.0,220.4 89.0,224.2 91.0,228.0" fill="none" stroke="#5e071a" stroke-width="0.45" opacity="0.75"/>
<polyline points="75.1,179.2 78.1,190.2 81.2,196.5 83.2,200.3 85.2,204.1 87.2,207.9 89.3,211.7 91.3,215.5 93.3,219.3 95.3,223.1 97.4,226.9" fill="none" stroke="#5e071a" stroke-width="0.45" opacity="0.75"/>
<polyline points="81.5,163.9 84.5,180.3 87.5,193.1 89.6,199.0 91.6,203.0 93.6,206.8 95.6,210.6 97.7,214.4 99.7,218.2 101.7,222.0 103.7,225.8" fill="none" stroke="#5e071a" stroke-width="0.45" opacity="0.75"/>
<polyline points="87.8,145.9 90.9,164.1 93.9,181.1 95.9,190.9 98.0,199.2 100.0,205.3 102.0,209.5 104.0,213.3 106.0,217.1 108.1,220.9 110.1,224.7" fill="none" stroke="#5e071a" stroke-width="0.45" opacity="0.75"/>
<polyline points="94.2,130.8 97.2,146.8 100.3,164.6 102.3,176.3 104.3,187.7 106.3,197.7 108.4,205.8 110.4,211.7 112.4,216.0 114.4,219.8 116.5,223.6" fill="none" stroke="#5e071a" stroke-width="0.45" opacity="0.75"/>
<polyline points="100.6,124.3 103.6,133.5 106.6,148.2 108.7,159.5 110.7,172.4 112.7,185.0 114.7,196.5 116.8,205.7 118.8,212.9 120.8,218.3 122.8,222.5" fill="none" stroke="#5e071a" stroke-width="0.45" opacity="0.75"/>
<polyline points="106.9,123.2 110.0,128.9 113.0,136.6 115.0,145.1 117.0,157.1 119.1,170.5 121.1,184.3 123.1,196.2 125.1,206.2 127.2,214.1 129.2,220.5" fill="none" stroke="#5e071a" stroke-width="0.45" opacity="0.75"/>
<polyline points="113.3,122.1 116.3,127.8 119.4,133.5 121.4,137.4 123.4,146.0 125.4,157.9 127.5,172.2 129.5,185.7 131.5,197.8 133.5,208.0 135.5,217.2" fill="none" stroke="#5e071a" stroke-width="0.45" opacity="0.75"/>
<polyline points="126.0,119.9 129.1,125.6 132.1,131.3 134.1,135.1 136.1,141.4 138.2,149.3 140.2,159.6 142.2,170.5 144.2,182.8 146.2,195.3 148.3,209.3" fill="none" stroke="#5e071a" stroke-width="0.45" opacity="0.75"/>
<polyline points="138.8,117.8 141.8,123.4 144.8,129.1 146.8,132.9 148.9,139.2 150.9,147.1 152.9,157.4 154.9,167.9 157.0,178.8 159.0,189.8 161.0,204.1" fill="none" stroke="#5e071a" stroke-width="0.45" opacity="0.75"/>
<polyline points="68.8,186.2 75.1,179.2 81.5,163.9 87.8,145.9 94.2,130.8 100.6,124.3 106.9,123.2 113.3,122.1 126.0,119.9 138.8,117.8" fill="none" stroke="#5e071a" stroke-width="0.45" opacity="0.75"/>
<polyline points="71.8,191.9 78.1,190.2 84.5,180.3 90.9,164.1 97.2,146.8 103.6,133.5 110.0,128.9 116.3,127.8 129.1,125.6 141.8,123.4" fill="none" stroke="#5e071a" stroke-width="0.45" opacity="0.75"/>
<polyline points="74.8,197.6 81.2,196.5 87.5,193.1 93.9,181.1 100.3,164.6 106.6,148.2 113.0,136.6 119.4,133.5 132.1,131.3 144.8,129.1" fill="none" stroke="#5e071a" stroke-width="0.45" opacity="0.75"/>
<polyline points="76.8,201.4 83.2,200.3 89.6,199.0 95.9,190.9 102.3,176.3 108.7,159.5 115.0,145.1 121.4,137.4 134.1,135.1 146.8,132.9" fill="none" stroke="#5e071a" stroke-width="0.45" opacity="0.75"/>
<polyline points="78.9,205.2 85.2,204.1 91.6,203.0 98.0,199.2 104.3,187.7 110.7,172.4 117.0,157.1 123.4,146.0 136.1,141.4 148.9,139.2" fill="none" stroke="#5e071a" stroke-width="0.45" opacity="0.75"/>
<polyline points="80.9,209.0 87.2,207.9 93.6,206.8 100.0,205.3 106.3,197.7 112.7,185.0 119.1,170.5 125.4,157.9 138.2,149.3 150.9,147.1" fill="none" stroke="#5e071a" stroke-width="0.45" opacity="0.75"/>
<polyline points="82.9,212.8 89.3,211.7 95.6,210.6 102.0,209.5 108.4,205.8 114.7,196.5 121.1,184.3 127.5,172.2 140.2,159.6 152.9,157.4" fill="none" stroke="#5e071a" stroke-width="0.45" opacity="0.75"/>
<polyline points="84.9,216.6 91.3,215.5 97.7,214.4 104.0,213.3 110.4,211.7 116.8,205.7 123.1,196.2 129.5,185.7 142.2,170.5 154.9,167.9" fill="none" stroke="#5e071a" stroke-width="0.45" opacity="0.75"/>
<polyline points="87.0,220.4 93.3,219.3 99.7,218.2 106.0,217.1 112.4,216.0 118.8,212.9 125.1,206.2 131.5,197.8 144.2,182.8 157.0,178.8" fill="none" stroke="#5e071a" stroke-width="0.45" opacity="0.75"/>
<polyline points="89.0,224.2 95.3,223.1 101.7,222.0 108.1,220.9 114.4,219.8 120.8,218.3 127.2,214.1 133.5,208.0 146.2,195.3 159.0,189.8" fill="none" stroke="#5e071a" stroke-width="0.45" opacity="0.75"/>
<polyline points="91.0,228.0 97.4,226.9 103.7,225.8 110.1,224.7 116.5,223.6 122.8,222.5 129.2,220.5 135.5,217.2 148.3,209.3 161.0,204.1" fill="none" stroke="#5e071a" stroke-width="0.45" opacity="0.75"/>
<circle cx="112.60" cy="169.20" r="1.4" fill="#ffee00" />
</g>
<rect x="244.50" y="108.75" width="39.30" height="35.00" fill="url(#mini)" stroke="#d4d4d4" stroke-width="0.4" />
<text x="236.50" y="110.30" font-size="8" fill="#4a4aff" text-anchor="end" >9</text>
<line x1="238.50" y1="107.50" x2="244.50" y2="107.50" stroke="#999" stroke-width="0.5" />
<text x="236.50" y="120.60" font-size="8" fill="#4a4aff" text-anchor="end" >6</text>
<line x1="238.50" y1="117.80" x2="244.50" y2="117.80" stroke="#999" stroke-width="0.5" />
<text x="236.50" y="130.80" font-size="8" fill="#4a4aff" text-anchor="end" >3</text>
<line x1="238.50" y1="128.00" x2="244.50" y2="128.00" stroke="#999" stroke-width="0.5" />
<text x="236.50" y="141.30" font-size="8" fill="#4a4aff" text-anchor="end" >0</text>
<line x1="238.50" y1="138.50" x2="244.50" y2="138.50" stroke="#999" stroke-width="0.5" />
<line x1="244.50" y1="108.75" x2="244.50" y2="147.75" stroke="#888" stroke-width="0.5" />
<line x1="241.00" y1="143.75" x2="283.80" y2="143.75" stroke="#888" stroke-width="0.5" />
<text x="242.00" y="158.60" font-size="8" fill="#4a4aff" text-anchor="middle" >1</text>
<text x="252.50" y="158.60" font-size="8" fill="#4a4aff" text-anchor="middle" >4</text>
<text x="266.50" y="158.60" font-size="8" fill="#4a4aff" text-anchor="middle" >8</text>
<text x="278.50" y="158.60" font-size="8" fill="#4a4aff" text-anchor="middle" >12</text>
<line x1="244.50" y1="143.75" x2="244.50" y2="148.75" stroke="#999" stroke-width="0.5" />
<line x1="255.00" y1="143.75" x2="255.00" y2="148.75" stroke="#999" stroke-width="0.5" />
<line x1="269.50" y1="143.75" x2="269.50" y2="148.75" stroke="#999" stroke-width="0.5" />
<line x1="283.50" y1="143.75" x2="283.50" y2="148.75" stroke="#999" stroke-width="0.5" />
<text x="283.50" y="170.20" font-size="8" fill="#ff4848" text-anchor="end" >Curve1: []</text>
<text transform="translate(220.6,138) rotate(-90)" font-size="8" fill="#ff4848">KF2 []</text>
<polyline points="245.0,140.0 248.8,140.0 252.0,140.0 255.5,136.2 258.8,129.5 262.5,123.0 269.5,115.5 283.8,112.0" fill="none" stroke="#c08888" stroke-width="0.7" />
<circle cx="245.00" cy="140.00" r="0.7" fill="#804040" />
<circle cx="248.75" cy="140.00" r="0.7" fill="#804040" />
<circle cx="252.00" cy="140.00" r="0.7" fill="#804040" />
<circle cx="255.50" cy="136.25" r="0.7" fill="#804040" />
<circle cx="258.75" cy="129.50" r="0.7" fill="#804040" />
<circle cx="262.50" cy="123.00" r="0.7" fill="#ffee00" />
<circle cx="269.50" cy="115.50" r="0.7" fill="#804040" />
<circle cx="283.75" cy="112.00" r="0.7" fill="#804040" />
<rect x="244.50" y="185.00" width="39.30" height="31.25" fill="url(#mini)" stroke="#d4d4d4" stroke-width="0.4" />
<text x="236.50" y="188.80" font-size="8" fill="#4a4aff" text-anchor="end" >8</text>
<line x1="238.50" y1="186.00" x2="244.50" y2="186.00" stroke="#999" stroke-width="0.5" />
<text x="236.50" y="201.30" font-size="8" fill="#4a4aff" text-anchor="end" >4</text>
<line x1="238.50" y1="198.50" x2="244.50" y2="198.50" stroke="#999" stroke-width="0.5" />
<text x="236.50" y="214.10" font-size="8" fill="#4a4aff" text-anchor="end" >0</text>
<line x1="238.50" y1="211.30" x2="244.50" y2="211.30" stroke="#999" stroke-width="0.5" />
<line x1="244.50" y1="185.00" x2="244.50" y2="220.25" stroke="#888" stroke-width="0.5" />
<line x1="241.00" y1="216.25" x2="283.80" y2="216.25" stroke="#888" stroke-width="0.5" />
<text x="240.00" y="232.00" font-size="8" fill="#4a4aff" text-anchor="middle" >11</text>
<text x="254.00" y="232.00" font-size="8" fill="#4a4aff" text-anchor="middle" >15</text>
<text x="278.00" y="232.00" font-size="8" fill="#4a4aff" text-anchor="middle" >22</text>
<line x1="244.50" y1="216.25" x2="244.50" y2="221.25" stroke="#999" stroke-width="0.5" />
<line x1="255.00" y1="216.25" x2="255.00" y2="221.25" stroke="#999" stroke-width="0.5" />
<line x1="269.50" y1="216.25" x2="269.50" y2="221.25" stroke="#999" stroke-width="0.5" />
<line x1="283.50" y1="216.25" x2="283.50" y2="221.25" stroke="#999" stroke-width="0.5" />
<text x="283.50" y="243.40" font-size="8" fill="#ff4848" text-anchor="end" >Curve2: []</text>
<text transform="translate(220.6,213) rotate(-90)" font-size="8" fill="#ff4848">KF2 []</text>
<polyline points="245.0,216.2 248.8,215.5 252.0,213.0 255.5,209.5 258.8,203.8 262.5,197.0 269.5,190.5 283.8,187.5" fill="none" stroke="#c08888" stroke-width="0.7" />
<circle cx="245.00" cy="216.25" r="0.7" fill="#804040" />
<circle cx="248.75" cy="215.50" r="0.7" fill="#804040" />
<circle cx="252.00" cy="213.00" r="0.7" fill="#804040" />
<circle cx="255.50" cy="209.50" r="0.7" fill="#804040" />
<circle cx="258.75" cy="203.75" r="0.7" fill="#804040" />
<circle cx="262.50" cy="197.00" r="0.7" fill="#ffee00" />
<circle cx="269.50" cy="190.50" r="0.7" fill="#804040" />
<circle cx="283.75" cy="187.50" r="0.7" fill="#804040" />
<rect x="288.00" y="80.50" width="175.60" height="7.00" fill="url(#tbI)" />
<rect x="289.50" y="81.30" width="6.20" height="5.40" fill="#fff" stroke="#5a74a8" stroke-width="0.6" />
<line x1="289.50" y1="81.90" x2="295.70" y2="81.90" stroke="#5a74a8" stroke-width="0.8" />
<path d="M291.0 85.9 l1.6 -2.2 l1.2 1 l1.2 -1.6" fill="none" stroke="#c33" stroke-width="0.7" />
<text x="299.00" y="85.80" font-size="5.6" fill="#445" >[11] Parameter</text>
<rect x="446.60" y="81.50" width="5.00" height="5.00" fill="#fff" stroke="#c8d0dc" stroke-width="0.4" />
<text x="449.10" y="85.50" font-size="4" fill="#556" text-anchor="middle" >.</text>
<rect x="452.10" y="81.50" width="5.00" height="5.00" fill="#fff" stroke="#c8d0dc" stroke-width="0.4" />
<text x="454.60" y="85.50" font-size="4" fill="#556" text-anchor="middle" >▫</text>
<rect x="457.60" y="81.50" width="5.00" height="5.00" fill="#fff" stroke="#c8d0dc" stroke-width="0.4" />
<text x="460.10" y="85.50" font-size="4" fill="#556" text-anchor="middle" >×</text>
<rect x="288.00" y="87.80" width="175.60" height="10.60" fill="#ececec" stroke="#cfcfcf" stroke-width="0.5" />
<rect x="289.00" y="89.00" width="9.00" height="8.40" fill="#e2e2e2" stroke="#cfcfcf" stroke-width="0.4" />
<text x="293.50" y="95.20" font-size="5" fill="#555" text-anchor="middle" >-</text>
<rect x="299.00" y="89.00" width="24.00" height="8.40" fill="#fff" stroke="#bdbdbd" stroke-width="0.4" />
<text x="300.50" y="95.20" font-size="5" fill="#555" >1</text>
<rect x="324.00" y="89.00" width="9.00" height="8.40" fill="#e2e2e2" stroke="#cfcfcf" stroke-width="0.4" />
<text x="328.50" y="95.20" font-size="5" fill="#555" text-anchor="middle" >+</text>
<rect x="334.00" y="89.00" width="10.00" height="8.40" fill="#e2e2e2" stroke="#cfcfcf" stroke-width="0.4" />
<text x="339.00" y="95.20" font-size="5" fill="#555" text-anchor="middle" >/</text>
<rect x="345.00" y="89.00" width="23.60" height="8.40" fill="#fff" stroke="#bdbdbd" stroke-width="0.4" />
<text x="346.50" y="95.20" font-size="5" fill="#555" >2</text>
<rect x="370.00" y="89.00" width="8.60" height="8.40" fill="#e2e2e2" stroke="#cfcfcf" stroke-width="0.4" />
<text x="374.30" y="95.20" font-size="5" fill="#555" text-anchor="middle" >*</text>
<rect x="380.00" y="89.00" width="9.60" height="8.40" fill="#e2e2e2" stroke="#cfcfcf" stroke-width="0.4" />
<text x="384.80" y="95.20" font-size="5" fill="#555" text-anchor="middle" ></text>
<path d="M384.8 91 v4.4 m-1.4 -1.5 l1.4 1.5 l1.4 -1.5" fill="none" stroke="#444" stroke-width="0.6" />
<line x1="383.20" y1="96.20" x2="386.40" y2="96.20" stroke="#444" stroke-width="0.5" />
<rect x="391.00" y="89.00" width="33.00" height="8.40" fill="#fff" stroke="#bdbdbd" stroke-width="0.4" />
<text x="392.50" y="95.20" font-size="5" fill="#555" >4</text>
<rect x="424.60" y="89.00" width="25.00" height="8.40" fill="#f0f0f0" stroke="#bdbdbd" stroke-width="0.4" />
<text x="426.10" y="95.20" font-size="5" fill="#555" >Phy [0,200]</text>
<rect x="288.00" y="98.40" width="175.60" height="7.60" fill="#ececec" stroke="#d0d0d0" stroke-width="0.5" />
<rect x="289.00" y="99.00" width="9.00" height="6.40" fill="#e6e6e6" stroke="#d0d0d0" stroke-width="0.4" />
<text x="300.00" y="104.00" font-size="4.8" fill="#555" >Amplitude of channel 1-3</text>
<rect x="288.00" y="106.00" width="175.60" height="78.00" fill="#ffffff" />
<rect x="288.00" y="106.00" width="175.60" height="11.00" fill="#f0f0f0" />
<rect x="288.00" y="106.60" width="80.00" height="10.40" fill="#fbfbfb" stroke="#e0e0e0" stroke-width="0.4" />
<rect x="368.00" y="106.60" width="45.00" height="10.40" fill="#fbfbfb" stroke="#e0e0e0" stroke-width="0.4" />
<text x="290.50" y="115.30" font-size="8.2" fill="#555" >Name</text>
<text x="370.50" y="115.30" font-size="8.2" fill="#555" >Value</text>
<path d="M362.5 113 l1.8 -2 l1.8 2" fill="none" stroke="#aaa" stroke-width="0.5" />
<rect x="288.00" y="117.40" width="80.00" height="10.80" fill="#757575" stroke="#e6e6e6" stroke-width="0.4" />
<rect x="368.00" y="117.40" width="45.00" height="10.80" fill="#ffee00" stroke="#e6e6e6" stroke-width="0.4" />
<text x="289.60" y="126.00" font-size="8.2" fill="#3a3a3a" >ampl</text>
<text x="375.50" y="126.00" font-size="8.2" fill="#5a5a8a" >4</text>
<rect x="288.00" y="128.40" width="80.00" height="10.80" fill="#f1f1f1" stroke="#e6e6e6" stroke-width="0.4" />
<rect x="368.00" y="128.40" width="45.00" height="10.80" fill="#ffffff" stroke="#e6e6e6" stroke-width="0.4" />
<text x="289.60" y="137.00" font-size="8.2" fill="#555" >offset</text>
<text x="375.50" y="137.00" font-size="8.2" fill="#666" >2</text>
<rect x="288.00" y="139.40" width="80.00" height="10.80" fill="#f1f1f1" stroke="#e6e6e6" stroke-width="0.4" />
<rect x="368.00" y="139.40" width="45.00" height="10.80" fill="#ffffff" stroke="#e6e6e6" stroke-width="0.4" />
<text x="289.60" y="148.00" font-size="8.2" fill="#555" >period</text>
<text x="372.00" y="148.00" font-size="8.2" fill="#666" >5</text>
<rect x="288.00" y="150.40" width="80.00" height="10.80" fill="#f1f1f1" stroke="#e6e6e6" stroke-width="0.4" />
<rect x="368.00" y="150.40" width="45.00" height="10.80" fill="#ffffff" stroke="#e6e6e6" stroke-width="0.4" />
<text x="289.60" y="159.00" font-size="8.2" fill="#555" >PWM_Level</text>
<text x="372.00" y="159.00" font-size="8.2" fill="#666" >0</text>
<path d="M370.6 123.6 v4 m-1.2 -1.4 l1.2 1.4 l1.2 -1.4" fill="none" stroke="#4a4aff" stroke-width="0.6" />
<path d="M370.6 137.6 v-4 m-1.2 1.4 l1.2 -1.4 l1.2 1.4" fill="none" stroke="#4a4aff" stroke-width="0.6" />
<line x1="463.60" y1="87.00" x2="463.60" y2="184.00" stroke="#e0e0e0" stroke-width="0.6" />
<rect x="466.00" y="80.50" width="178.00" height="6.60" fill="url(#tbI)" />
<rect x="467.50" y="81.30" width="6.20" height="5.40" fill="#fff" stroke="#5a74a8" stroke-width="0.6" />
<line x1="467.50" y1="81.90" x2="473.70" y2="81.90" stroke="#5a74a8" stroke-width="0.8" />
<path d="M469.0 85.9 l1.6 -2.2 l1.2 1 l1.2 -1.6" fill="none" stroke="#c33" stroke-width="0.7" />
<text x="477.00" y="85.80" font-size="5.6" fill="#445" >[10] Pressure and Temperature</text>
<rect x="627.00" y="81.50" width="5.00" height="5.00" fill="#fff" stroke="#c8d0dc" stroke-width="0.4" />
<text x="629.50" y="85.50" font-size="4" fill="#556" text-anchor="middle" >.</text>
<rect x="632.50" y="81.50" width="5.00" height="5.00" fill="#fff" stroke="#c8d0dc" stroke-width="0.4" />
<text x="635.00" y="85.50" font-size="4" fill="#556" text-anchor="middle" >▫</text>
<rect x="638.00" y="81.50" width="5.00" height="5.00" fill="#fff" stroke="#c8d0dc" stroke-width="0.4" />
<text x="640.50" y="85.50" font-size="4" fill="#556" text-anchor="middle" >×</text>
<rect x="466.60" y="89.50" width="83.00" height="10.60" fill="#f0f0f0" />
<text x="469.00" y="97.80" font-size="8.2" fill="#606060" >EngPressure</text>
<rect x="539.60" y="92.50" width="3.60" height="4.60" fill="#eaf2ff" stroke="#4a78c8" stroke-width="0.5" />
<line x1="540.40" y1="94.10" x2="542.40" y2="94.10" stroke="#4a78c8" stroke-width="0.4" />
<line x1="540.40" y1="95.30" x2="542.40" y2="95.30" stroke="#4a78c8" stroke-width="0.4" />
<rect x="466.60" y="100.10" width="83.00" height="10.60" fill="#d2d2d2" />
<text x="469.00" y="108.40" font-size="8.2" fill="#606060" >EngAirTemp</text>
<rect x="539.60" y="103.10" width="3.60" height="4.60" fill="#eaf2ff" stroke="#4a78c8" stroke-width="0.5" />
<line x1="540.40" y1="104.70" x2="542.40" y2="104.70" stroke="#4a78c8" stroke-width="0.4" />
<line x1="540.40" y1="105.90" x2="542.40" y2="105.90" stroke="#4a78c8" stroke-width="0.4" />
<rect x="552.00" y="88.90" width="92.40" height="22.20" fill="#000" />
<rect x="641.40" y="89.30" width="2.20" height="21.40" fill="#0e6b73" />
<text x="566" y="98.1" font-size="9.4" fill="#dcc020" font-weight="bold" font-family="Liberation Mono" xml:space="preserve">97 kPa</text>
<text x="566" y="109.1" font-size="9.4" fill="#dcc020" font-weight="bold" font-family="Liberation Mono" xml:space="preserve">40 deg C</text>
<rect x="466.00" y="114.00" width="178.00" height="6.60" fill="url(#tbI)" />
<rect x="467.50" y="114.80" width="6.20" height="5.40" fill="#fff" stroke="#5a74a8" stroke-width="0.6" />
<line x1="467.50" y1="115.40" x2="473.70" y2="115.40" stroke="#5a74a8" stroke-width="0.8" />
<path d="M469.0 119.4 l1.6 -2.2 l1.2 1 l1.2 -1.6" fill="none" stroke="#c33" stroke-width="0.7" />
<text x="477.00" y="119.30" font-size="5.6" fill="#445" >[23] GPS Coordinates</text>
<rect x="627.00" y="115.00" width="5.00" height="5.00" fill="#fff" stroke="#c8d0dc" stroke-width="0.4" />
<text x="629.50" y="119.00" font-size="4" fill="#556" text-anchor="middle" >.</text>
<rect x="632.50" y="115.00" width="5.00" height="5.00" fill="#fff" stroke="#c8d0dc" stroke-width="0.4" />
<text x="635.00" y="119.00" font-size="4" fill="#556" text-anchor="middle" >▫</text>
<rect x="638.00" y="115.00" width="5.00" height="5.00" fill="#fff" stroke="#c8d0dc" stroke-width="0.4" />
<text x="640.50" y="119.00" font-size="4" fill="#556" text-anchor="middle" >×</text>
<rect x="466.60" y="123.00" width="83.00" height="10.60" fill="#d2d2d2" />
<text x="469.00" y="131.30" font-size="8.2" fill="#606060" >GPS_x</text>
<rect x="539.60" y="126.00" width="3.60" height="4.60" fill="#eaf2ff" stroke="#4a78c8" stroke-width="0.5" />
<line x1="540.40" y1="127.60" x2="542.40" y2="127.60" stroke="#4a78c8" stroke-width="0.4" />
<line x1="540.40" y1="128.80" x2="542.40" y2="128.80" stroke="#4a78c8" stroke-width="0.4" />
<rect x="466.60" y="133.60" width="83.00" height="10.60" fill="#f0f0f0" />
<text x="469.00" y="141.90" font-size="8.2" fill="#606060" >GPS_y</text>
<rect x="539.60" y="136.60" width="3.60" height="4.60" fill="#eaf2ff" stroke="#4a78c8" stroke-width="0.5" />
<line x1="540.40" y1="138.20" x2="542.40" y2="138.20" stroke="#4a78c8" stroke-width="0.4" />
<line x1="540.40" y1="139.40" x2="542.40" y2="139.40" stroke="#4a78c8" stroke-width="0.4" />
<rect x="552.00" y="122.40" width="92.40" height="22.20" fill="#000" />
<rect x="641.40" y="122.80" width="2.20" height="21.40" fill="#0e6b73" />
<text x="558.6" y="131.6" font-size="9.4" fill="#dcc020" font-weight="bold" font-family="Liberation Mono" xml:space="preserve">9.096936 °</text>
<text x="558.6" y="142.6" font-size="9.4" fill="#dcc020" font-weight="bold" font-family="Liberation Mono" xml:space="preserve">48.825197 °</text>
<rect x="466.00" y="150.30" width="178.00" height="6.60" fill="url(#tbI)" />
<rect x="467.50" y="151.10" width="6.20" height="5.40" fill="#fff" stroke="#5a74a8" stroke-width="0.6" />
<line x1="467.50" y1="151.70" x2="473.70" y2="151.70" stroke="#5a74a8" stroke-width="0.8" />
<path d="M469.0 155.7 l1.6 -2.2 l1.2 1 l1.2 -1.6" fill="none" stroke="#c33" stroke-width="0.7" />
<text x="477.00" y="155.60" font-size="5.6" fill="#445" >[3] Fuel</text>
<rect x="627.00" y="151.30" width="5.00" height="5.00" fill="#fff" stroke="#c8d0dc" stroke-width="0.4" />
<text x="629.50" y="155.30" font-size="4" fill="#556" text-anchor="middle" >.</text>
<rect x="632.50" y="151.30" width="5.00" height="5.00" fill="#fff" stroke="#c8d0dc" stroke-width="0.4" />
<text x="635.00" y="155.30" font-size="4" fill="#556" text-anchor="middle" >▫</text>
<rect x="638.00" y="151.30" width="5.00" height="5.00" fill="#fff" stroke="#c8d0dc" stroke-width="0.4" />
<text x="640.50" y="155.30" font-size="4" fill="#556" text-anchor="middle" >×</text>
<rect x="466.60" y="159.00" width="83.00" height="10.60" fill="#f0f0f0" />
<text x="469.00" y="167.30" font-size="8.2" fill="#606060" >FuelCapacity</text>
<rect x="539.60" y="162.00" width="3.60" height="4.60" fill="#eaf2ff" stroke="#4a78c8" stroke-width="0.5" />
<line x1="540.40" y1="163.60" x2="542.40" y2="163.60" stroke="#4a78c8" stroke-width="0.4" />
<line x1="540.40" y1="164.80" x2="542.40" y2="164.80" stroke="#4a78c8" stroke-width="0.4" />
<rect x="466.60" y="169.60" width="83.00" height="10.60" fill="#d2d2d2" />
<text x="469.00" y="177.90" font-size="8.2" fill="#606060" >FuelLevel</text>
<rect x="539.60" y="172.60" width="3.60" height="4.60" fill="#eaf2ff" stroke="#4a78c8" stroke-width="0.5" />
<line x1="540.40" y1="174.20" x2="542.40" y2="174.20" stroke="#4a78c8" stroke-width="0.4" />
<line x1="540.40" y1="175.40" x2="542.40" y2="175.40" stroke="#4a78c8" stroke-width="0.4" />
<rect x="552.00" y="158.40" width="92.40" height="22.20" fill="#000" />
<rect x="641.40" y="158.80" width="2.20" height="21.40" fill="#0e6b73" />
<text x="566" y="167.6" font-size="9.4" fill="#dcc020" font-weight="bold" font-family="Liberation Mono" xml:space="preserve">70 liters</text>
<text x="566" y="178.6" font-size="9.4" fill="#dcc020" font-weight="bold" font-family="Liberation Mono" xml:space="preserve">76.471 %</text>
<rect x="288.00" y="185.00" width="356.40" height="7.00" fill="url(#tbI)" />
<rect x="289.50" y="185.80" width="6.20" height="5.40" fill="#fff" stroke="#5a74a8" stroke-width="0.6" />
<line x1="289.50" y1="186.40" x2="295.70" y2="186.40" stroke="#5a74a8" stroke-width="0.8" />
<path d="M291.0 190.4 l1.6 -2.2 l1.2 1 l1.2 -1.6" fill="none" stroke="#c33" stroke-width="0.7" />
<text x="299.00" y="190.30" font-size="5.6" fill="#445" >[18] Engine Speed</text>
<rect x="627.40" y="186.00" width="5.00" height="5.00" fill="#fff" stroke="#c8d0dc" stroke-width="0.4" />
<text x="629.90" y="190.00" font-size="4" fill="#556" text-anchor="middle" >.</text>
<rect x="632.90" y="186.00" width="5.00" height="5.00" fill="#fff" stroke="#c8d0dc" stroke-width="0.4" />
<text x="635.40" y="190.00" font-size="4" fill="#556" text-anchor="middle" >▫</text>
<rect x="638.40" y="186.00" width="5.00" height="5.00" fill="#fff" stroke="#c8d0dc" stroke-width="0.4" />
<text x="640.90" y="190.00" font-size="4" fill="#556" text-anchor="middle" >×</text>
<rect x="288.00" y="192.00" width="81.00" height="55.40" fill="#f0f0f0" />
<text x="290.00" y="201.60" font-size="8.2" fill="#555" >Name</text>
<rect x="288.00" y="204.20" width="80.00" height="20.40" fill="#cfcfcf" />
<rect x="289.40" y="207.40" width="2.60" height="3.20" fill="#fff" stroke="#999" stroke-width="0.3" />
<rect x="293.60" y="207.40" width="3.40" height="1.20" fill="#0c0" />
<rect x="293.60" y="209.40" width="3.40" height="1.20" fill="#0c0" />
<text x="301.00" y="213.00" font-size="8.2" fill="#555" >EngSpeed</text>
<rect x="357.00" y="207.60" width="3.60" height="4.60" fill="#eaf2ff" stroke="#4a78c8" stroke-width="0.5" />
<line x1="357.80" y1="209.20" x2="359.80" y2="209.20" stroke="#4a78c8" stroke-width="0.4" />
<line x1="357.80" y1="210.40" x2="359.80" y2="210.40" stroke="#4a78c8" stroke-width="0.4" />
<text x="290.40" y="222.60" font-size="8.2" fill="#555" >=  1328.25 rpm</text>
<rect x="288.00" y="225.60" width="80.00" height="21.60" fill="#f4f4f4" stroke="#dcdcdc" stroke-width="0.4" />
<text x="289.40" y="235.60" font-size="8.2" fill="#555" >t = 1m 0.725567s</text>
<text x="289.40" y="245.60" font-size="8.2" fill="#555" >5(1)min/Div</text>
<rect x="369.40" y="193.60" width="274.60" height="46.00" fill="#000" />
<line x1="408.40" y1="195.00" x2="408.40" y2="225.00" stroke="#06260b" stroke-width="0.6" />
<line x1="423.80" y1="195.00" x2="423.80" y2="225.00" stroke="#06260b" stroke-width="0.6" />
<line x1="439.20" y1="195.00" x2="439.20" y2="225.00" stroke="#06260b" stroke-width="0.6" />
<line x1="454.60" y1="195.00" x2="454.60" y2="225.00" stroke="#06260b" stroke-width="0.6" />
<line x1="470.00" y1="195.00" x2="470.00" y2="225.00" stroke="#0b4712" stroke-width="0.6" />
<line x1="485.40" y1="195.00" x2="485.40" y2="225.00" stroke="#06260b" stroke-width="0.6" />
<line x1="500.80" y1="195.00" x2="500.80" y2="225.00" stroke="#06260b" stroke-width="0.6" />
<line x1="516.20" y1="195.00" x2="516.20" y2="225.00" stroke="#06260b" stroke-width="0.6" />
<line x1="531.60" y1="195.00" x2="531.60" y2="225.00" stroke="#06260b" stroke-width="0.6" />
<line x1="547.00" y1="195.00" x2="547.00" y2="225.00" stroke="#0b4712" stroke-width="0.6" />
<line x1="562.40" y1="195.00" x2="562.40" y2="225.00" stroke="#06260b" stroke-width="0.6" />
<line x1="577.80" y1="195.00" x2="577.80" y2="225.00" stroke="#06260b" stroke-width="0.6" />
<line x1="593.20" y1="195.00" x2="593.20" y2="225.00" stroke="#06260b" stroke-width="0.6" />
<line x1="608.60" y1="195.00" x2="608.60" y2="225.00" stroke="#06260b" stroke-width="0.6" />
<line x1="624.00" y1="195.00" x2="624.00" y2="225.00" stroke="#0b4712" stroke-width="0.6" />
<line x1="393.00" y1="198.50" x2="643.00" y2="198.50" stroke="#0b4712" stroke-width="0.5" stroke-dasharray="1 1"/>
<line x1="393.00" y1="205.00" x2="643.00" y2="205.00" stroke="#06260b" stroke-width="0.5" stroke-dasharray="1 1"/>
<line x1="393.00" y1="211.50" x2="643.00" y2="211.50" stroke="#06260b" stroke-width="0.5" stroke-dasharray="1 1"/>
<line x1="393.00" y1="218.00" x2="643.00" y2="218.00" stroke="#06260b" stroke-width="0.5" />
<line x1="393.00" y1="195.50" x2="393.00" y2="225.00" stroke="#20e040" stroke-width="1" />
<text x="392.00" y="202.40" font-size="8.2" fill="#20e040" text-anchor="end" font-weight="bold" >5000</text>
<text x="392.00" y="221.80" font-size="8.2" fill="#20e040" text-anchor="end" font-weight="bold" >0</text>
<polyline points="393.0,218.0 409.0,218.0 410.0,217.0 412.0,216.4 414.0,215.0 416.0,214.6 418.6,207.0 419.6,213.0 420.9,210.6 421.6,213.8 422.4,212.9 423.3,208.8 424.3,213.2 425.1,215.7 426.2,217.2 426.9,213.8 427.7,207.9 428.9,210.9 430.0,216.9 430.7,208.4 431.8,213.8 432.9,213.7 434.0,213.5 435.1,215.4 436.2,217.2 437.0,214.9 437.8,212.7 438.9,214.3 440.1,216.8 441.2,213.8 442.4,213.7 443.5,205.2 444.5,214.6 445.4,216.3 446.1,212.5 446.9,204.6 447.7,210.4 448.9,206.0 449.9,214.1 451.2,215.3 452.1,214.3 452.9,210.3 453.7,213.1 454.6,205.6 455.5,214.0 456.6,212.9 457.7,203.0 458.9,213.3 459.8,214.0 460.9,206.9 461.7,209.4 462.4,206.4 463.2,213.7 464.4,211.0 465.3,214.3 466.0,213.5 467.0,210.8 467.8,214.0 469.0,209.9 470.3,210.9 471.3,204.4 472.6,212.6 473.4,213.9 474.6,212.9 475.5,208.1 476.8,213.1 478.0,211.4 479.0,213.8 479.7,214.3 480.8,212.3 482.1,213.9 483.0,210.0 483.8,209.1 485.0,212.7 486.1,211.6 487.2,213.8 488.4,212.1 489.6,216.2 490.8,215.5 492.1,212.4 492.9,209.2 494.1,209.5 495.4,213.2 496.4,211.7 497.7,213.9 498.9,215.1 500.1,211.4 501.0,210.6 501.9,213.0 503.1,216.6 504.2,214.0 505.4,214.4 506.4,207.1 507.2,205.4 508.0,215.1 509.1,216.9 510.1,213.2 511.1,211.7 512.3,214.6 513.5,214.2 514.5,214.4 515.6,214.4 516.6,214.9 517.9,213.5 518.9,215.2 519.7,206.9 520.4,211.9 521.5,215.2 522.3,214.4 523.1,215.3 523.9,213.5 524.9,214.7 525.7,213.7 526.6,210.8 527.8,205.7 528.7,206.7 529.8,212.0 531.1,214.6 531.8,214.7 533.0,214.8 534.0,213.9 534.8,208.5 535.9,211.5 536.6,212.5 537.3,213.0 538.5,203.3 539.3,212.3 540.2,213.7 541.0,204.7 541.9,206.5 542.6,209.5 543.5,211.6 544.5,209.3 545.2,213.7 546.3,211.2 547.3,210.9 548.5,212.0 549.7,214.5 550.8,211.5 552.0,212.4 553.0,213.6 553.7,203.3 554.6,209.8 555.8,212.6 556.7,209.4 557.6,209.0 558.5,213.6 559.5,207.8 560.4,213.8 561.3,212.3 562.2,210.9 563.0,205.5 563.8,206.0 564.6,212.7 565.7,213.3 567.0,214.9 568.3,209.1 569.3,203.8 570.6,213.8 571.8,209.9 572.8,214.2 574.0,214.6 575.1,212.7 575.8,210.7 576.6,213.8 577.6,214.3 578.6,204.8 579.8,214.0 580.9,205.3 581.7,207.7 582.9,210.3 584.1,213.8 585.1,215.0 586.2,213.0 587.0,217.2 587.9,212.9 588.6,217.1 589.7,213.8 590.7,214.3 591.5,213.5 592.8,213.0 593.8,215.8 594.7,216.3 596.0,210.9 596.8,215.7 597.6,214.3 598.8,213.4 600.0,212.8 600.7,214.0 601.6,211.2 602.5,212.5 603.7,212.8 604.9,215.1 605.8,216.0 607.1,213.3 608.1,215.2 608.8,212.9 610.1,210.8 611.1,210.4 612.4,214.2 613.4,214.4 614.5,211.7 615.6,213.7 616.7,214.4 617.9,205.4 618.9,215.6 620.1,215.3 621.0,212.2 621.8,209.9 623.1,211.5 623.0,211.0 625.0,212.0 626.4,217.6 632.0,217.6" fill="none" stroke="#10f040" stroke-width="1.5" stroke-linejoin="round"/>
<line x1="409.00" y1="194.50" x2="409.00" y2="225.00" stroke="#1894a4" stroke-width="1.4" />
<line x1="393.00" y1="225.00" x2="643.00" y2="225.00" stroke="#e8e8e8" stroke-width="1" />
<line x1="393.00" y1="225.00" x2="393.00" y2="231.00" stroke="#e8e8e8" stroke-width="0.7" />
<line x1="408.40" y1="225.00" x2="408.40" y2="228.00" stroke="#e8e8e8" stroke-width="0.7" />
<line x1="423.80" y1="225.00" x2="423.80" y2="228.00" stroke="#e8e8e8" stroke-width="0.7" />
<line x1="439.20" y1="225.00" x2="439.20" y2="228.00" stroke="#e8e8e8" stroke-width="0.7" />
<line x1="454.60" y1="225.00" x2="454.60" y2="228.00" stroke="#e8e8e8" stroke-width="0.7" />
<line x1="470.00" y1="225.00" x2="470.00" y2="231.00" stroke="#e8e8e8" stroke-width="0.7" />
<line x1="485.40" y1="225.00" x2="485.40" y2="228.00" stroke="#e8e8e8" stroke-width="0.7" />
<line x1="500.80" y1="225.00" x2="500.80" y2="228.00" stroke="#e8e8e8" stroke-width="0.7" />
<line x1="516.20" y1="225.00" x2="516.20" y2="228.00" stroke="#e8e8e8" stroke-width="0.7" />
<line x1="531.60" y1="225.00" x2="531.60" y2="228.00" stroke="#e8e8e8" stroke-width="0.7" />
<line x1="547.00" y1="225.00" x2="547.00" y2="231.00" stroke="#e8e8e8" stroke-width="0.7" />
<line x1="562.40" y1="225.00" x2="562.40" y2="228.00" stroke="#e8e8e8" stroke-width="0.7" />
<line x1="577.80" y1="225.00" x2="577.80" y2="228.00" stroke="#e8e8e8" stroke-width="0.7" />
<line x1="593.20" y1="225.00" x2="593.20" y2="228.00" stroke="#e8e8e8" stroke-width="0.7" />
<line x1="608.60" y1="225.00" x2="608.60" y2="228.00" stroke="#e8e8e8" stroke-width="0.7" />
<line x1="624.00" y1="225.00" x2="624.00" y2="231.00" stroke="#e8e8e8" stroke-width="0.7" />
<line x1="639.40" y1="225.00" x2="639.40" y2="228.00" stroke="#e8e8e8" stroke-width="0.7" />
<text x="394.50" y="237.40" font-size="7.6" fill="#e8e8e8" font-weight="bold" >0s</text>
<text x="471.50" y="237.40" font-size="7.6" fill="#e8e8e8" font-weight="bold" >5m 0s</text>
<text x="548.50" y="237.40" font-size="7.6" fill="#e8e8e8" font-weight="bold" >10m 0s</text>
<text x="625.50" y="237.40" font-size="7.6" fill="#e8e8e8" font-weight="bold" >15m</text>
<rect x="392.00" y="240.20" width="252.00" height="7.00" fill="#f0f0f0" />
<rect x="401.00" y="240.80" width="234.00" height="5.80" fill="#c9c9c9" />
<path d="M397.5 241.8 l-2.2 1.9 l2.2 1.9" fill="none" stroke="#555" stroke-width="0.7" />
<path d="M638.5 241.8 l2.2 1.9 l-2.2 1.9" fill="none" stroke="#555" stroke-width="0.7" />
<line x1="415.00" y1="240.80" x2="415.00" y2="243.40" stroke="#40d0e0" stroke-width="0.8" />
<rect x="647.00" y="80.50" width="339.60" height="7.00" fill="url(#tbI)" />
<rect x="648.50" y="81.30" width="6.20" height="5.40" fill="#fff" stroke="#5a74a8" stroke-width="0.6" />
<line x1="648.50" y1="81.90" x2="654.70" y2="81.90" stroke="#5a74a8" stroke-width="0.8" />
<path d="M650.0 85.9 l1.6 -2.2 l1.2 1 l1.2 -1.6" fill="none" stroke="#c33" stroke-width="0.7" />
<text x="658.00" y="85.80" font-size="5.6" fill="#445" >[21] Vehicle Speed</text>
<rect x="969.60" y="81.50" width="5.00" height="5.00" fill="#fff" stroke="#c8d0dc" stroke-width="0.4" />
<text x="972.10" y="85.50" font-size="4" fill="#556" text-anchor="middle" >.</text>
<rect x="975.10" y="81.50" width="5.00" height="5.00" fill="#fff" stroke="#c8d0dc" stroke-width="0.4" />
<text x="977.60" y="85.50" font-size="4" fill="#556" text-anchor="middle" >▫</text>
<rect x="980.60" y="81.50" width="5.00" height="5.00" fill="#fff" stroke="#c8d0dc" stroke-width="0.4" />
<text x="983.10" y="85.50" font-size="4" fill="#556" text-anchor="middle" >×</text>
<rect x="647.00" y="88.00" width="76.00" height="185.00" fill="#f0f0f0" />
<text x="649.00" y="97.40" font-size="8.2" fill="#555" >Name</text>
<rect x="647.00" y="100.00" width="75.40" height="21.00" fill="#cfcfcf" />
<rect x="648.40" y="103.60" width="2.60" height="3.20" fill="#fff" stroke="#999" stroke-width="0.3" />
<rect x="652.40" y="103.60" width="3.40" height="1.20" fill="#cc0" />
<rect x="652.40" y="105.60" width="3.40" height="1.20" fill="#cc0" />
<text x="659.40" y="109.20" font-size="8.2" fill="#555" >VehSpeed</text>
<rect x="712.00" y="103.60" width="3.60" height="4.60" fill="#eaf2ff" stroke="#4a78c8" stroke-width="0.5" />
<line x1="712.80" y1="105.20" x2="714.80" y2="105.20" stroke="#4a78c8" stroke-width="0.4" />
<line x1="712.80" y1="106.40" x2="714.80" y2="106.40" stroke="#4a78c8" stroke-width="0.4" />
<text x="649.40" y="119.00" font-size="8.2" fill="#555" >=  0 km / h</text>
<rect x="647.00" y="251.00" width="75.40" height="22.00" fill="#f4f4f4" stroke="#dcdcdc" stroke-width="0.4" />
<text x="648.60" y="261.60" font-size="8.2" fill="#555" >t = 1m 0.725567s</text>
<text x="648.60" y="271.40" font-size="8.2" fill="#555" >5(1)min/Div</text>
<rect x="723.40" y="89.40" width="260.60" height="175.20" fill="#000" />
<line x1="756.20" y1="91.00" x2="756.20" y2="250.00" stroke="#06260b" stroke-width="0.6" stroke-dasharray="0.8 0.8"/>
<line x1="771.00" y1="91.00" x2="771.00" y2="250.00" stroke="#06260b" stroke-width="0.6" stroke-dasharray="0.8 0.8"/>
<line x1="785.80" y1="91.00" x2="785.80" y2="250.00" stroke="#06260b" stroke-width="0.6" stroke-dasharray="0.8 0.8"/>
<line x1="800.60" y1="91.00" x2="800.60" y2="250.00" stroke="#06260b" stroke-width="0.6" stroke-dasharray="0.8 0.8"/>
<line x1="815.40" y1="91.00" x2="815.40" y2="250.00" stroke="#0b4712" stroke-width="0.8" />
<line x1="830.20" y1="91.00" x2="830.20" y2="250.00" stroke="#06260b" stroke-width="0.6" stroke-dasharray="0.8 0.8"/>
<line x1="845.00" y1="91.00" x2="845.00" y2="250.00" stroke="#06260b" stroke-width="0.6" stroke-dasharray="0.8 0.8"/>
<line x1="859.80" y1="91.00" x2="859.80" y2="250.00" stroke="#06260b" stroke-width="0.6" stroke-dasharray="0.8 0.8"/>
<line x1="874.60" y1="91.00" x2="874.60" y2="250.00" stroke="#06260b" stroke-width="0.6" stroke-dasharray="0.8 0.8"/>
<line x1="889.40" y1="91.00" x2="889.40" y2="250.00" stroke="#0b4712" stroke-width="0.8" />
<line x1="904.20" y1="91.00" x2="904.20" y2="250.00" stroke="#06260b" stroke-width="0.6" stroke-dasharray="0.8 0.8"/>
<line x1="919.00" y1="91.00" x2="919.00" y2="250.00" stroke="#06260b" stroke-width="0.6" stroke-dasharray="0.8 0.8"/>
<line x1="933.80" y1="91.00" x2="933.80" y2="250.00" stroke="#06260b" stroke-width="0.6" stroke-dasharray="0.8 0.8"/>
<line x1="948.60" y1="91.00" x2="948.60" y2="250.00" stroke="#06260b" stroke-width="0.6" stroke-dasharray="0.8 0.8"/>
<line x1="963.40" y1="91.00" x2="963.40" y2="250.00" stroke="#0b4712" stroke-width="0.8" />
<line x1="978.20" y1="91.00" x2="978.20" y2="250.00" stroke="#06260b" stroke-width="0.6" stroke-dasharray="0.8 0.8"/>
<line x1="741.40" y1="90.50" x2="983.60" y2="90.50" stroke="#0b4712" stroke-width="0.8" />
<line x1="741.40" y1="106.50" x2="983.60" y2="106.50" stroke="#06260b" stroke-width="0.6" stroke-dasharray="0.8 0.8"/>
<line x1="741.40" y1="122.50" x2="983.60" y2="122.50" stroke="#0b4712" stroke-width="0.8" />
<line x1="741.40" y1="138.50" x2="983.60" y2="138.50" stroke="#06260b" stroke-width="0.6" stroke-dasharray="0.8 0.8"/>
<line x1="741.40" y1="154.50" x2="983.60" y2="154.50" stroke="#0b4712" stroke-width="0.8" />
<line x1="741.40" y1="170.50" x2="983.60" y2="170.50" stroke="#06260b" stroke-width="0.6" stroke-dasharray="0.8 0.8"/>
<line x1="741.40" y1="186.50" x2="983.60" y2="186.50" stroke="#0b4712" stroke-width="0.8" />
<line x1="741.40" y1="202.50" x2="983.60" y2="202.50" stroke="#06260b" stroke-width="0.6" stroke-dasharray="0.8 0.8"/>
<line x1="741.40" y1="218.50" x2="983.60" y2="218.50" stroke="#0b4712" stroke-width="0.8" />
<line x1="741.40" y1="234.50" x2="983.60" y2="234.50" stroke="#06260b" stroke-width="0.6" stroke-dasharray="0.8 0.8"/>
<line x1="741.20" y1="91.00" x2="741.20" y2="250.00" stroke="#d8c820" stroke-width="1.2" />
<text x="739.60" y="96.10" font-size="7.6" fill="#d8c820" text-anchor="end" font-weight="bold" >100</text>
<text x="739.60" y="125.00" font-size="7.6" fill="#d8c820" text-anchor="end" font-weight="bold" >80</text>
<text x="739.60" y="156.90" font-size="7.6" fill="#d8c820" text-anchor="end" font-weight="bold" >60</text>
<text x="739.60" y="188.80" font-size="7.6" fill="#d8c820" text-anchor="end" font-weight="bold" >40</text>
<text x="739.60" y="220.70" font-size="7.6" fill="#d8c820" text-anchor="end" font-weight="bold" >20</text>
<text x="739.60" y="250.40" font-size="7.6" fill="#d8c820" text-anchor="end" font-weight="bold" >0</text>
<polyline points="741.4,249.0 750.0,248.6 758.8,248.6 760.0,237.3 761.0,248.6 765.0,248.6 766.2,194.8 770.0,169.8 772.5,174.8 775.0,172.3 776.2,192.3 778.0,141.1 779.5,197.3 781.2,153.6 783.8,189.8 786.2,167.3 788.0,209.8 790.0,182.3 793.8,163.6 797.5,177.3 800.0,217.3 801.2,184.8 803.0,147.3 806.2,172.3 808.0,158.6 810.0,184.8 811.2,248.6 813.8,248.6 815.5,197.3 817.5,162.3 818.8,222.3 820.0,248.6 821.2,209.8 822.5,184.8 825.0,146.1 827.5,159.8 830.0,167.3 832.5,192.3 835.0,184.8 836.2,199.8 837.5,183.6 839.5,207.3 841.2,194.8 843.8,187.3 846.2,212.3 848.8,182.3 851.2,219.8 852.0,248.6 853.0,184.8 854.5,157.3 857.0,146.1 858.8,184.8 860.0,182.3 863.8,222.3 866.2,196.1 868.8,189.8 872.0,178.6 873.8,204.8 875.0,187.3 878.0,229.8 880.0,203.6 882.0,248.6 883.8,248.6 885.0,199.8 887.5,184.8 890.0,187.3 892.5,179.8 895.0,187.3 897.5,177.3 900.0,199.8 901.2,248.6 903.0,184.8 905.0,156.1 907.5,177.3 910.0,187.3 911.2,166.1 913.8,209.8 915.0,248.6 918.0,232.3 919.5,248.6 922.5,248.6 925.0,199.8 926.2,178.6 928.8,194.8 932.0,172.3 935.0,193.6 936.2,189.8 939.5,173.6 942.0,203.6 943.8,179.8 946.2,177.3 950.0,173.6 951.2,158.6 953.0,189.8 954.5,169.8 956.2,184.8 958.8,248.6 960.5,248.6 962.5,202.3 965.0,229.8 967.5,248.6 972.5,248.6" fill="none" stroke="#d6ca1e" stroke-width="1.5" stroke-linejoin="round"/>
<polyline points="741.4,249.0 750.0,248.6 758.8,248.6 760.0,237.3 761.0,248.6 765.0,248.6 766.2,194.8 770.0,169.8 772.5,174.8 775.0,172.3 776.2,192.3 778.0,141.1 779.5,197.3 781.2,153.6 783.8,189.8 786.2,167.3 788.0,209.8 790.0,182.3 793.8,163.6 797.5,177.3 800.0,217.3 801.2,184.8 803.0,147.3 806.2,172.3 808.0,158.6 810.0,184.8 811.2,248.6 813.8,248.6 815.5,197.3 817.5,162.3 818.8,222.3 820.0,248.6 821.2,209.8 822.5,184.8 825.0,146.1 827.5,159.8 830.0,167.3 832.5,192.3 835.0,184.8 836.2,199.8 837.5,183.6 839.5,207.3 841.2,194.8 843.8,187.3 846.2,212.3 848.8,182.3 851.2,219.8 852.0,248.6 853.0,184.8 854.5,157.3 857.0,146.1 858.8,184.8 860.0,182.3 863.8,222.3 866.2,196.1 868.8,189.8 872.0,178.6 873.8,204.8 875.0,187.3 878.0,229.8 880.0,203.6 882.0,248.6 883.8,248.6 885.0,199.8 887.5,184.8 890.0,187.3 892.5,179.8 895.0,187.3 897.5,177.3 900.0,199.8 901.2,248.6 903.0,184.8 905.0,156.1 907.5,177.3 910.0,187.3 911.2,166.1 913.8,209.8 915.0,248.6 918.0,232.3 919.5,248.6 922.5,248.6 925.0,199.8 926.2,178.6 928.8,194.8 932.0,172.3 935.0,193.6 936.2,189.8 939.5,173.6 942.0,203.6 943.8,179.8 946.2,177.3 950.0,173.6 951.2,158.6 953.0,189.8 954.5,169.8 956.2,184.8 958.8,248.6 960.5,248.6 962.5,202.3 965.0,229.8 967.5,248.6 972.5,248.6" fill="none" stroke="#fff060" stroke-width="0.4" stroke-dasharray="0.6 1.2" opacity="0.7"/>
<line x1="757.00" y1="90.00" x2="757.00" y2="250.00" stroke="#1894a4" stroke-width="1.6" />
<path d="M755.4 90 h3.2 l-1.6 2z" fill="#30b0c0" />
<line x1="741.00" y1="250.00" x2="984.00" y2="250.00" stroke="#e8e8e8" stroke-width="1" />
<line x1="741.40" y1="250.00" x2="741.40" y2="256.40" stroke="#e8e8e8" stroke-width="0.7" />
<line x1="756.20" y1="250.00" x2="756.20" y2="253.00" stroke="#e8e8e8" stroke-width="0.7" />
<line x1="771.00" y1="250.00" x2="771.00" y2="253.00" stroke="#e8e8e8" stroke-width="0.7" />
<line x1="785.80" y1="250.00" x2="785.80" y2="253.00" stroke="#e8e8e8" stroke-width="0.7" />
<line x1="800.60" y1="250.00" x2="800.60" y2="253.00" stroke="#e8e8e8" stroke-width="0.7" />
<line x1="815.40" y1="250.00" x2="815.40" y2="256.40" stroke="#e8e8e8" stroke-width="0.7" />
<line x1="830.20" y1="250.00" x2="830.20" y2="253.00" stroke="#e8e8e8" stroke-width="0.7" />
<line x1="845.00" y1="250.00" x2="845.00" y2="253.00" stroke="#e8e8e8" stroke-width="0.7" />
<line x1="859.80" y1="250.00" x2="859.80" y2="253.00" stroke="#e8e8e8" stroke-width="0.7" />
<line x1="874.60" y1="250.00" x2="874.60" y2="253.00" stroke="#e8e8e8" stroke-width="0.7" />
<line x1="889.40" y1="250.00" x2="889.40" y2="256.40" stroke="#e8e8e8" stroke-width="0.7" />
<line x1="904.20" y1="250.00" x2="904.20" y2="253.00" stroke="#e8e8e8" stroke-width="0.7" />
<line x1="919.00" y1="250.00" x2="919.00" y2="253.00" stroke="#e8e8e8" stroke-width="0.7" />
<line x1="933.80" y1="250.00" x2="933.80" y2="253.00" stroke="#e8e8e8" stroke-width="0.7" />
<line x1="948.60" y1="250.00" x2="948.60" y2="253.00" stroke="#e8e8e8" stroke-width="0.7" />
<line x1="963.40" y1="250.00" x2="963.40" y2="256.40" stroke="#e8e8e8" stroke-width="0.7" />
<line x1="978.20" y1="250.00" x2="978.20" y2="253.00" stroke="#e8e8e8" stroke-width="0.7" />
<text x="743.60" y="262.60" font-size="7.6" fill="#e8e8e8" font-weight="bold" >0s</text>
<text x="817.60" y="262.60" font-size="7.6" fill="#e8e8e8" font-weight="bold" >5m 0s</text>
<text x="891.60" y="262.60" font-size="7.6" fill="#e8e8e8" font-weight="bold" >10m 0s</text>
<text x="965.00" y="262.60" font-size="7.6" fill="#e8e8e8" font-weight="bold" >15m</text>
<rect x="741.00" y="265.00" width="243.00" height="7.00" fill="#f0f0f0" />
<rect x="750.00" y="265.60" width="225.00" height="5.80" fill="#c9c9c9" />
<path d="M746.5 266.6 l-2.2 1.9 l2.2 1.9" fill="none" stroke="#555" stroke-width="0.7" />
<path d="M978.5 266.6 l2.2 1.9 l-2.2 1.9" fill="none" stroke="#555" stroke-width="0.7" />
<line x1="763.00" y1="265.60" x2="763.00" y2="268.20" stroke="#40d0e0" stroke-width="0.8" />
<rect x="18.60" y="250.00" width="627.00" height="7.40" fill="url(#tbI)" />
<rect x="20.10" y="250.80" width="6.20" height="5.40" fill="#fff" stroke="#5a74a8" stroke-width="0.6" />
<line x1="20.10" y1="251.40" x2="26.30" y2="251.40" stroke="#5a74a8" stroke-width="0.8" />
<path d="M21.6 255.4 l1.6 -2.2 l1.2 1 l1.2 -1.6" fill="none" stroke="#c33" stroke-width="0.7" />
<text x="29.60" y="255.30" font-size="5.6" fill="#445" >[1.1 - 1.2] Acceleration</text>
<rect x="628.60" y="251.00" width="5.00" height="5.00" fill="#fff" stroke="#c8d0dc" stroke-width="0.4" />
<text x="631.10" y="255.00" font-size="4" fill="#556" text-anchor="middle" >.</text>
<rect x="634.10" y="251.00" width="5.00" height="5.00" fill="#fff" stroke="#c8d0dc" stroke-width="0.4" />
<text x="636.60" y="255.00" font-size="4" fill="#556" text-anchor="middle" >▫</text>
<rect x="639.60" y="251.00" width="5.00" height="5.00" fill="#fff" stroke="#c8d0dc" stroke-width="0.4" />
<text x="642.10" y="255.00" font-size="4" fill="#556" text-anchor="middle" >×</text>
<rect x="18.60" y="257.40" width="8.00" height="93.00" fill="#cfdcec" />
<rect x="18.60" y="352.00" width="8.00" height="93.00" fill="#cfdcec" />
<rect x="19.60" y="258.40" width="6.00" height="5.00" fill="#fff" stroke="#c8d0dc" stroke-width="0.4" />
<rect x="19.60" y="353.40" width="6.00" height="5.00" fill="#fff" stroke="#c8d0dc" stroke-width="0.4" />
<text transform="translate(24.6,348.6) rotate(-90)" font-size="5" fill="#667">[1.1] Acceleration</text>
<text transform="translate(24.6,444) rotate(-90)" font-size="5" fill="#667">[1.2] Graphic</text>
<rect x="26.60" y="257.40" width="76.00" height="93.00" fill="#f0f0f0" />
<rect x="26.60" y="352.00" width="76.00" height="93.00" fill="#f0f0f0" />
<rect x="26.60" y="258.00" width="76.00" height="11.00" fill="#f6f6f6" />
<text x="28.00" y="267.00" font-size="8.2" fill="#555" >Name</text>
<text x="96.00" y="265.00" font-size="5" fill="#999" >·</text>
<rect x="27.00" y="270.20" width="75.00" height="10.60" fill="#cfcfcf" />
<rect x="28.60" y="273.40" width="2.60" height="3.20" fill="#fff" stroke="#999" stroke-width="0.3" />
<line x1="28.80" y1="275.00" x2="31.00" y2="275.00" stroke="#777" stroke-width="0.4" />
<rect x="32.40" y="273.60" width="3.60" height="1.20" fill="#333" />
<rect x="32.40" y="275.60" width="3.60" height="1.20" fill="#333" />
<text x="39.00" y="278.60" font-size="8.2" fill="#555" >Acceleration</text>
<rect x="27.00" y="354.20" width="75.00" height="10.60" fill="#cfcfcf" />
<rect x="28.60" y="357.40" width="2.60" height="3.20" fill="#fff" stroke="#999" stroke-width="0.3" />
<line x1="28.80" y1="359.00" x2="31.00" y2="359.00" stroke="#777" stroke-width="0.4" />
<rect x="32.40" y="357.60" width="3.60" height="1.20" fill="#cc0" />
<rect x="32.40" y="359.60" width="3.60" height="1.20" fill="#cc0" />
<text x="39.00" y="362.60" font-size="8.2" fill="#555" >BrakePedal</text>
<rect x="27.00" y="364.80" width="75.00" height="10.40" fill="#e9e9e9" />
<rect x="28.60" y="368.00" width="2.60" height="3.20" fill="#fff" stroke="#999" stroke-width="0.3" />
<rect x="32.40" y="368.20" width="3.60" height="1.20" fill="#6c0" />
<rect x="32.40" y="370.20" width="3.60" height="1.20" fill="#6c0" />
<text x="39.00" y="373.20" font-size="8.2" fill="#555" >ThrottlePedal</text>
<rect x="27.00" y="424.00" width="75.00" height="21.00" fill="#f4f4f4" stroke="#dcdcdc" stroke-width="0.4" />
<text x="27.60" y="433.40" font-size="8.2" fill="#555" >t = 1m 0.725567s</text>
<text x="27.60" y="443.40" font-size="8.2" fill="#555" >2min(15s)/Div</text>
<rect x="103.40" y="259.60" width="540.00" height="90.20" fill="#000" />
<line x1="136.31" y1="261.00" x2="136.31" y2="349.00" stroke="#06260b" stroke-width="0.45" />
<line x1="144.62" y1="261.00" x2="144.62" y2="349.00" stroke="#06260b" stroke-width="0.45" />
<line x1="152.94" y1="261.00" x2="152.94" y2="349.00" stroke="#06260b" stroke-width="0.45" />
<line x1="161.25" y1="261.00" x2="161.25" y2="349.00" stroke="#06260b" stroke-width="0.45" />
<line x1="169.56" y1="261.00" x2="169.56" y2="349.00" stroke="#06260b" stroke-width="0.45" />
<line x1="177.88" y1="261.00" x2="177.88" y2="349.00" stroke="#06260b" stroke-width="0.45" />
<line x1="186.19" y1="261.00" x2="186.19" y2="349.00" stroke="#06260b" stroke-width="0.45" />
<line x1="194.50" y1="261.00" x2="194.50" y2="349.00" stroke="#0b4712" stroke-width="0.6" />
<line x1="202.81" y1="261.00" x2="202.81" y2="349.00" stroke="#06260b" stroke-width="0.45" />
<line x1="211.12" y1="261.00" x2="211.12" y2="349.00" stroke="#06260b" stroke-width="0.45" />
<line x1="219.44" y1="261.00" x2="219.44" y2="349.00" stroke="#06260b" stroke-width="0.45" />
<line x1="227.75" y1="261.00" x2="227.75" y2="349.00" stroke="#06260b" stroke-width="0.45" />
<line x1="236.06" y1="261.00" x2="236.06" y2="349.00" stroke="#06260b" stroke-width="0.45" />
<line x1="244.38" y1="261.00" x2="244.38" y2="349.00" stroke="#06260b" stroke-width="0.45" />
<line x1="252.69" y1="261.00" x2="252.69" y2="349.00" stroke="#06260b" stroke-width="0.45" />
<line x1="261.00" y1="261.00" x2="261.00" y2="349.00" stroke="#0b4712" stroke-width="0.6" />
<line x1="269.31" y1="261.00" x2="269.31" y2="349.00" stroke="#06260b" stroke-width="0.45" />
<line x1="277.62" y1="261.00" x2="277.62" y2="349.00" stroke="#06260b" stroke-width="0.45" />
<line x1="285.94" y1="261.00" x2="285.94" y2="349.00" stroke="#06260b" stroke-width="0.45" />
<line x1="294.25" y1="261.00" x2="294.25" y2="349.00" stroke="#06260b" stroke-width="0.45" />
<line x1="302.56" y1="261.00" x2="302.56" y2="349.00" stroke="#06260b" stroke-width="0.45" />
<line x1="310.88" y1="261.00" x2="310.88" y2="349.00" stroke="#06260b" stroke-width="0.45" />
<line x1="319.19" y1="261.00" x2="319.19" y2="349.00" stroke="#06260b" stroke-width="0.45" />
<line x1="327.50" y1="261.00" x2="327.50" y2="349.00" stroke="#0b4712" stroke-width="0.6" />
<line x1="335.81" y1="261.00" x2="335.81" y2="349.00" stroke="#06260b" stroke-width="0.45" />
<line x1="344.12" y1="261.00" x2="344.12" y2="349.00" stroke="#06260b" stroke-width="0.45" />
<line x1="352.44" y1="261.00" x2="352.44" y2="349.00" stroke="#06260b" stroke-width="0.45" />
<line x1="360.75" y1="261.00" x2="360.75" y2="349.00" stroke="#06260b" stroke-width="0.45" />
<line x1="369.06" y1="261.00" x2="369.06" y2="349.00" stroke="#06260b" stroke-width="0.45" />
<line x1="377.38" y1="261.00" x2="377.38" y2="349.00" stroke="#06260b" stroke-width="0.45" />
<line x1="385.69" y1="261.00" x2="385.69" y2="349.00" stroke="#06260b" stroke-width="0.45" />
<line x1="394.00" y1="261.00" x2="394.00" y2="349.00" stroke="#0b4712" stroke-width="0.6" />
<line x1="402.31" y1="261.00" x2="402.31" y2="349.00" stroke="#06260b" stroke-width="0.45" />
<line x1="410.62" y1="261.00" x2="410.62" y2="349.00" stroke="#06260b" stroke-width="0.45" />
<line x1="418.94" y1="261.00" x2="418.94" y2="349.00" stroke="#06260b" stroke-width="0.45" />
<line x1="427.25" y1="261.00" x2="427.25" y2="349.00" stroke="#06260b" stroke-width="0.45" />
<line x1="435.56" y1="261.00" x2="435.56" y2="349.00" stroke="#06260b" stroke-width="0.45" />
<line x1="443.88" y1="261.00" x2="443.88" y2="349.00" stroke="#06260b" stroke-width="0.45" />
<line x1="452.19" y1="261.00" x2="452.19" y2="349.00" stroke="#06260b" stroke-width="0.45" />
<line x1="460.50" y1="261.00" x2="460.50" y2="349.00" stroke="#0b4712" stroke-width="0.6" />
<line x1="468.81" y1="261.00" x2="468.81" y2="349.00" stroke="#06260b" stroke-width="0.45" />
<line x1="477.12" y1="261.00" x2="477.12" y2="349.00" stroke="#06260b" stroke-width="0.45" />
<line x1="485.44" y1="261.00" x2="485.44" y2="349.00" stroke="#06260b" stroke-width="0.45" />
<line x1="493.75" y1="261.00" x2="493.75" y2="349.00" stroke="#06260b" stroke-width="0.45" />
<line x1="502.06" y1="261.00" x2="502.06" y2="349.00" stroke="#06260b" stroke-width="0.45" />
<line x1="510.38" y1="261.00" x2="510.38" y2="349.00" stroke="#06260b" stroke-width="0.45" />
<line x1="518.69" y1="261.00" x2="518.69" y2="349.00" stroke="#06260b" stroke-width="0.45" />
<line x1="527.00" y1="261.00" x2="527.00" y2="349.00" stroke="#0b4712" stroke-width="0.6" />
<line x1="535.31" y1="261.00" x2="535.31" y2="349.00" stroke="#06260b" stroke-width="0.45" />
<line x1="543.62" y1="261.00" x2="543.62" y2="349.00" stroke="#06260b" stroke-width="0.45" />
<line x1="551.94" y1="261.00" x2="551.94" y2="349.00" stroke="#06260b" stroke-width="0.45" />
<line x1="560.25" y1="261.00" x2="560.25" y2="349.00" stroke="#06260b" stroke-width="0.45" />
<line x1="568.56" y1="261.00" x2="568.56" y2="349.00" stroke="#06260b" stroke-width="0.45" />
<line x1="576.88" y1="261.00" x2="576.88" y2="349.00" stroke="#06260b" stroke-width="0.45" />
<line x1="585.19" y1="261.00" x2="585.19" y2="349.00" stroke="#06260b" stroke-width="0.45" />
<line x1="593.50" y1="261.00" x2="593.50" y2="349.00" stroke="#0b4712" stroke-width="0.6" />
<line x1="601.81" y1="261.00" x2="601.81" y2="349.00" stroke="#06260b" stroke-width="0.45" />
<line x1="610.12" y1="261.00" x2="610.12" y2="349.00" stroke="#06260b" stroke-width="0.45" />
<line x1="618.44" y1="261.00" x2="618.44" y2="349.00" stroke="#06260b" stroke-width="0.45" />
<line x1="626.75" y1="261.00" x2="626.75" y2="349.00" stroke="#06260b" stroke-width="0.45" />
<line x1="635.06" y1="261.00" x2="635.06" y2="349.00" stroke="#06260b" stroke-width="0.45" />
<line x1="128.00" y1="263.20" x2="643.00" y2="263.20" stroke="#0b4712" stroke-width="0.6" />
<line x1="128.00" y1="271.50" x2="643.00" y2="271.50" stroke="#06260b" stroke-width="0.45" />
<line x1="128.00" y1="279.80" x2="643.00" y2="279.80" stroke="#0b4712" stroke-width="0.6" />
<line x1="128.00" y1="288.10" x2="643.00" y2="288.10" stroke="#06260b" stroke-width="0.45" />
<line x1="128.00" y1="296.50" x2="643.00" y2="296.50" stroke="#0b4712" stroke-width="0.6" />
<line x1="128.00" y1="304.90" x2="643.00" y2="304.90" stroke="#06260b" stroke-width="0.45" />
<line x1="128.00" y1="313.30" x2="643.00" y2="313.30" stroke="#0b4712" stroke-width="0.6" />
<line x1="128.00" y1="321.70" x2="643.00" y2="321.70" stroke="#06260b" stroke-width="0.45" />
<line x1="128.00" y1="330.10" x2="643.00" y2="330.10" stroke="#0b4712" stroke-width="0.6" />
<line x1="128.00" y1="338.50" x2="643.00" y2="338.50" stroke="#06260b" stroke-width="0.45" />
<line x1="128.00" y1="346.90" x2="643.00" y2="346.90" stroke="#0b4712" stroke-width="0.6" />
<line x1="128.00" y1="261.00" x2="128.00" y2="349.00" stroke="#f0f0f0" stroke-width="1.2" />
<text x="126.00" y="267.60" font-size="7.4" fill="#f0f0f0" text-anchor="end" font-weight="bold" >4</text>
<text x="126.00" y="282.60" font-size="7.4" fill="#f0f0f0" text-anchor="end" font-weight="bold" >2</text>
<text x="126.00" y="299.20" font-size="7.4" fill="#f0f0f0" text-anchor="end" font-weight="bold" >0</text>
<text x="126.00" y="316.20" font-size="7.4" fill="#f0f0f0" text-anchor="end" font-weight="bold" >-2</text>
<text x="126.00" y="333.60" font-size="7.4" fill="#f0f0f0" text-anchor="end" font-weight="bold" >-4</text>
<text x="126.00" y="347.40" font-size="7.4" fill="#f0f0f0" text-anchor="end" font-weight="bold" >-6</text>
<text transform="translate(113.6,343) rotate(-90)" font-size="7.4" font-weight="bold" fill="#f0f0f0">Acceleration - [m/s^2]</text>
<polyline points="128.0,296.5 161.0,296.5 161.9,307.6 162.3,292.1 162.8,289.2 163.2,288.3 163.6,289.7 164.0,301.4 164.4,294.8 164.9,296.2 165.3,292.3 165.7,288.8 166.1,289.3 166.5,298.3 167.0,293.6 167.4,293.4 167.8,298.2 168.2,311.8 168.6,305.3 169.1,321.6 169.5,326.6 169.9,322.0 170.3,335.9 170.7,330.8 171.2,315.1 171.6,303.6 172.0,307.8 172.4,308.0 172.8,307.9 173.3,302.8 173.7,303.4 174.1,304.0 174.5,294.0 174.9,290.8 175.4,299.6 175.8,286.3 176.2,295.7 176.6,288.9 177.0,286.1 177.5,292.9 177.9,299.2 178.3,298.5 178.7,292.7 179.1,303.4 179.6,290.0 180.0,301.2 180.4,293.2 180.8,305.8 181.2,287.8 181.7,291.2 182.1,281.9 182.5,283.0 182.9,266.7 183.3,274.5 183.8,284.5 184.2,299.8 184.6,305.3 185.0,292.7 185.4,295.0 185.9,305.4 186.3,293.4 186.7,302.0 187.1,283.9 187.5,287.8 188.0,299.4 188.4,303.2 188.8,294.3 189.2,303.0 189.6,288.7 190.1,295.7 190.5,294.0 190.9,286.2 191.3,291.2 191.7,290.2 192.2,294.4 192.6,304.0 193.0,298.9 193.4,296.6 193.8,303.6 194.3,292.0 194.7,288.8 195.1,301.9 195.5,290.0 195.9,287.4 196.4,293.5 196.8,306.0 197.2,293.6 197.6,301.7 198.0,300.1 198.5,288.3 198.9,289.4 199.3,285.2 199.7,273.7 200.1,279.1 200.6,292.8 201.0,283.9 201.4,292.1 201.8,292.3 202.2,305.3 202.7,308.0 203.1,300.5 203.5,299.4 203.9,295.6 204.3,305.0 204.8,292.0 205.2,305.4 205.6,334.5 206.0,347.5 206.4,317.3 206.9,300.8 207.3,294.8 207.7,292.0 208.1,297.5 208.5,302.2 209.0,290.5 209.4,295.6 209.8,297.1 210.2,295.1 210.6,293.1 211.1,296.7 211.5,273.7 211.9,272.0 212.3,264.0 212.7,288.9 213.2,291.3 213.6,305.6 214.0,309.2 214.4,295.0 214.8,290.7 215.3,300.5 215.7,299.1 216.1,302.2 216.5,305.8 216.9,296.3 217.4,305.2 217.8,298.4 218.2,293.0 218.6,298.3 219.0,292.2 219.5,291.4 219.9,290.1 220.3,288.8 220.7,294.6 221.1,278.4 221.6,278.0 222.0,266.7 222.4,279.1 222.8,279.6 223.2,296.6 223.7,291.7 224.1,289.3 224.5,302.4 224.9,287.8 225.3,289.6 225.8,299.1 226.2,297.6 226.6,298.6 227.0,286.2 227.4,290.6 227.9,298.4 228.3,291.4 228.7,289.3 229.1,284.0 229.5,296.1 230.0,286.4 230.4,296.0 230.8,276.8 231.2,290.2 231.6,269.6 232.1,276.9 232.5,286.2 232.9,285.0 233.3,292.0 233.7,304.7 234.2,295.8 234.6,297.7 235.0,297.3 235.4,292.4 235.8,305.1 236.3,296.3 236.7,288.8 237.1,292.2 237.5,300.1 237.9,296.3 238.4,300.4 238.8,301.0 239.2,296.7 239.6,296.8 240.0,290.2 240.5,301.5 240.9,290.7 241.3,289.3 241.7,292.8 242.1,290.8 242.6,284.3 243.0,286.2 243.4,300.1 243.8,287.6 244.2,293.4 244.7,292.0 245.1,308.9 245.5,306.1 245.9,304.4 246.3,299.3 246.8,283.5 247.2,297.8 247.6,288.4 248.0,290.8 248.4,297.4 248.9,297.2 249.3,310.3 249.7,296.4 250.1,297.0 250.5,291.5 251.0,302.6 251.4,303.1 251.8,299.2 252.2,292.7 252.6,291.0 253.1,297.2 253.5,304.8 253.9,308.9 254.3,308.5 254.7,317.6 255.2,327.2 255.6,321.2 256.0,300.5 256.4,293.9 256.8,297.2 257.3,310.0 257.7,304.4 258.1,291.1 258.5,290.6 258.9,296.2 259.4,304.3 259.8,290.2 260.2,287.1 260.6,287.0 261.0,276.6 261.5,265.7 261.9,261.5 262.3,261.5 262.7,278.7 263.1,276.0 263.6,288.5 264.0,295.7 264.4,286.9 264.8,291.2 265.2,287.2 265.7,290.4 266.1,298.6 266.5,300.2 266.9,291.3 267.3,286.2 267.8,293.6 268.2,287.5 268.6,284.3 269.0,293.6 269.4,301.5 269.9,302.7 270.3,302.5 270.7,302.8 271.1,297.1 271.5,295.5 272.0,290.9 272.4,292.6 272.8,285.2 273.2,282.9 273.6,294.9 274.1,298.3 274.5,289.9 274.9,293.4 275.3,296.9 275.7,297.6 276.2,293.0 276.6,291.6 277.0,293.7 277.4,307.4 277.8,297.8 278.3,299.6 278.7,307.6 279.1,304.2 279.5,309.8 279.9,306.8 280.4,308.6 280.8,308.1 281.2,307.3 281.6,318.9 282.0,324.6 282.5,302.2 282.9,307.6 283.3,287.7 283.7,281.4 284.1,293.2 284.6,296.7 285.0,291.9 285.4,295.7 285.8,299.5 286.2,296.9 286.7,301.3 287.1,286.3 287.5,281.5 287.9,297.8 288.3,298.4 288.8,286.8 289.2,273.6 289.6,267.2 290.0,265.5 290.4,265.6 290.9,283.1 291.3,283.2 291.7,292.7 292.1,297.9 292.5,291.6 293.0,297.9 293.4,296.1 293.8,288.2 294.2,288.5 294.6,291.9 295.1,289.3 295.5,304.7 295.9,293.2 296.3,298.8 296.7,291.9 297.2,297.4 297.6,298.4 298.0,284.9 298.4,291.7 298.8,292.4 299.3,294.3 299.7,301.1 300.1,307.4 300.5,326.8 300.9,336.0 301.4,330.4 301.8,312.7 302.2,297.7 302.6,283.9 303.0,266.4 303.5,280.9 303.9,293.1 304.3,291.9 304.7,300.0 305.1,299.5 305.6,292.3 306.0,296.8 306.4,292.6 306.8,291.3 307.2,290.6 307.7,301.6 308.1,287.5 308.5,289.3 308.9,286.9 309.3,286.8 309.8,299.5 310.2,301.3 310.6,289.1 311.0,299.8 311.4,295.0 311.9,296.8 312.3,287.1 312.7,283.8 313.1,296.6 313.5,291.8 314.0,288.1 314.4,280.8 314.8,276.0 315.2,273.6 315.6,287.0 316.1,285.1 316.5,302.0 316.9,301.7 317.3,303.5 317.7,300.1 318.2,301.6 318.6,295.2 319.0,302.0 319.4,294.5 319.8,297.4 320.3,297.2 320.7,307.1 321.1,300.1 321.5,297.0 321.9,307.0 322.4,296.4 322.8,298.6 323.2,297.0 323.6,295.5 324.0,298.5 324.5,297.4 324.9,297.4 325.3,303.8 325.7,295.7 326.1,292.1 326.6,287.5 327.0,267.3 327.4,275.4 327.8,279.7 328.2,289.7 328.7,284.0 329.1,292.0 329.5,291.8 329.9,295.5 330.3,285.1 330.8,293.4 331.2,293.6 331.6,292.7 332.0,298.5 332.4,292.6 332.9,298.2 333.3,289.3 333.7,287.0 334.1,293.3 334.5,293.9 335.0,292.8 335.4,291.1 335.8,297.5 336.2,288.4 336.6,293.0 337.1,299.4 337.5,301.7 337.9,317.2 338.3,312.6 338.7,309.0 339.2,302.9 339.6,287.4 340.0,300.4 340.4,289.3 340.8,285.4 341.3,295.8 341.7,286.3 342.1,305.2 342.5,312.3 342.9,315.9 343.4,316.7 343.8,310.8 344.2,300.9 344.6,299.7 345.0,301.3 345.5,290.9 345.9,287.3 346.3,286.1 346.7,287.7 347.1,294.1 347.6,301.0 348.0,297.8 348.4,293.2 348.8,299.5 349.2,291.6 349.7,288.7 350.1,299.3 350.5,295.2 350.9,299.8 351.3,295.1 351.8,282.1 352.2,276.4 352.6,292.2 353.0,300.0 353.4,295.0 353.9,301.2 354.3,293.8 354.7,295.6 355.1,293.1 355.5,297.0 356.0,294.5 356.4,306.7 356.8,304.2 357.2,294.6 357.6,298.0 358.1,302.3 358.5,298.4 358.9,297.8 359.3,290.7 359.7,286.0 360.2,296.0 360.6,298.6 361.0,292.9 361.4,284.8 361.8,277.9 362.3,273.1 362.7,286.5 363.1,289.6 363.5,290.1 363.9,308.0 364.4,299.2 364.8,308.0 365.2,298.5 365.6,300.1 366.0,301.6 366.5,319.1 366.9,317.6 367.3,304.3 367.7,305.0 368.1,299.5 368.6,293.8 369.0,303.9 369.4,298.7 369.8,291.4 370.2,294.0 370.7,288.2 371.1,297.3 371.5,302.1 371.9,304.3 372.3,299.4 372.8,316.9 373.2,319.0 373.6,316.5 374.0,307.7 374.4,289.2 374.9,299.0 375.3,302.4 375.7,301.6 376.1,286.5 376.5,294.9 377.0,286.9 377.4,294.4 377.8,284.4 378.2,261.5 378.6,261.5 379.1,275.8 379.5,289.9 379.9,291.8 380.3,290.1 380.7,296.4 381.2,299.5 381.6,291.5 382.0,301.0 382.4,300.0 382.8,295.3 383.3,302.4 383.7,293.9 384.1,303.5 384.5,299.2 384.9,303.6 385.4,294.7 385.8,291.2 386.2,296.9 386.6,306.3 387.0,308.2 387.5,320.3 387.9,317.4 388.3,326.7 388.7,320.3 389.1,296.4 389.6,305.1 390.0,301.2 390.4,294.5 390.8,302.7 391.2,293.9 391.7,301.7 392.1,298.3 392.5,301.6 392.9,293.1 393.3,304.7 393.8,298.4 394.2,294.8 394.6,279.9 395.0,284.1 395.4,284.1 395.9,288.6 396.3,282.5 396.7,293.3 397.1,295.9 397.5,289.6 398.0,293.6 398.4,288.0 398.8,302.2 399.2,295.9 399.6,292.2 400.1,295.8 400.5,300.9 400.9,298.8 401.3,273.1 401.7,272.0 402.2,273.2 402.6,295.8 403.0,301.5 403.4,290.2 403.8,296.8 404.3,304.2 404.7,295.8 405.1,303.7 405.5,294.9 405.9,290.5 406.4,307.9 406.8,289.2 407.2,293.2 407.6,305.4 408.0,292.3 408.5,305.9 408.9,313.3 409.3,299.8 409.7,319.8 410.1,310.2 410.6,314.5 411.0,299.1 411.4,291.1 411.8,290.7 412.2,288.5 412.7,287.4 413.1,292.0 413.5,302.0 413.9,300.6 414.3,302.4 414.8,292.6 415.2,298.9 415.6,296.2 416.0,291.1 416.4,295.7 416.9,290.7 417.3,287.4 417.7,297.6 418.1,301.0 418.5,291.7 419.0,287.7 419.4,292.5 419.8,297.7 420.2,313.9 420.6,325.3 421.1,326.3 421.5,308.6 421.9,298.4 422.3,288.0 422.7,298.7 423.2,300.6 423.6,287.3 424.0,286.1 424.4,291.9 424.8,290.0 425.3,297.3 425.7,288.9 426.1,300.0 426.5,296.2 426.9,294.8 427.4,293.5 427.8,302.3 428.2,293.2 428.6,287.6 429.0,292.8 429.5,281.9 429.9,288.2 430.3,289.0 430.7,282.2 431.1,293.5 431.6,290.3 432.0,297.4 432.4,308.4 432.8,293.0 433.2,303.0 433.7,300.9 434.1,308.0 434.5,295.0 434.9,301.3 435.3,296.7 435.8,296.3 436.2,297.6 436.6,302.4 437.0,298.9 437.4,300.3 437.9,304.4 438.3,310.2 438.7,321.4 439.1,315.2 439.5,313.7 440.0,298.8 440.4,303.4 440.8,285.8 441.2,288.6 441.6,293.0 442.1,292.7 442.5,286.9 442.9,300.2 443.3,287.1 443.7,293.9 444.2,286.2 444.6,286.0 445.0,298.4 445.4,287.5 445.8,274.5 446.3,282.6 446.7,272.3 447.1,283.4 447.5,298.1 447.9,293.7 448.4,293.4 448.8,304.6 449.2,305.3 449.6,305.9 450.0,297.1 450.5,307.0 450.9,295.1 451.3,290.7 451.7,279.3 452.1,285.0 452.6,281.1 453.0,300.5 453.4,302.3 453.8,308.5 454.2,295.4 454.7,299.6 455.1,300.1 455.5,311.0 455.9,299.2 456.3,301.8 456.8,301.4 457.2,306.0 457.6,303.6 458.0,309.0 458.4,313.6 458.9,313.7 459.3,309.4 459.7,305.7 460.1,294.9 460.5,294.7 461.0,297.3 461.4,298.3 461.8,297.7 462.2,294.8 462.6,294.4 463.1,289.4 463.5,292.7 463.9,293.7 464.3,287.1 464.7,288.0 465.2,293.1 465.6,300.9 466.0,296.3 466.4,282.4 466.8,291.8 467.3,288.6 467.7,294.9 468.1,284.1 468.5,296.1 468.9,285.9 469.4,288.5 469.8,290.1 470.2,286.6 470.6,294.9 471.0,294.8 471.5,302.1 471.9,294.7 472.3,294.4 472.7,305.5 473.1,311.4 473.6,301.6 474.0,310.6 474.4,301.9 474.8,302.2 475.2,300.0 475.7,303.2 476.1,297.9 476.5,308.4 476.9,300.7 477.3,295.8 477.8,298.2 478.2,290.1 478.6,296.7 479.0,307.4 479.4,298.6 479.9,309.8 480.3,291.1 480.7,299.1 481.1,306.3 481.5,310.5 482.0,305.2 482.4,314.9 482.8,331.2 483.2,335.7 483.6,314.7 484.1,298.1 484.5,294.5 484.9,291.2 485.3,276.5 485.7,279.4 486.2,288.3 486.6,304.2 487.0,295.3 487.4,307.2 487.8,294.2 488.3,306.3 488.7,312.9 489.1,304.4 489.5,299.1 489.9,302.3 490.4,294.2 490.8,302.1 491.2,307.7 491.6,291.8 492.0,305.0 492.5,305.2 492.9,301.3 493.3,314.0 493.7,308.0 494.1,308.5 494.6,302.8 495.0,306.1 495.4,295.3 495.8,288.4 496.2,289.3 496.7,288.0 497.1,299.8 497.5,300.3 497.9,282.4 498.3,284.9 498.8,280.1 499.2,275.9 499.6,291.5 500.0,288.2 500.4,290.7 500.9,297.5 501.3,299.8 501.7,294.0 502.1,282.8 502.5,300.2 503.0,300.1 503.4,291.9 503.8,304.1 504.2,303.7 504.6,291.1 505.1,286.0 505.5,290.7 505.9,285.3 506.3,274.6 506.7,279.8 507.2,289.6 507.6,289.2 508.0,294.7 508.4,288.6 508.8,299.7 509.3,288.9 509.7,288.0 510.1,282.5 510.5,289.5 510.9,294.3 511.4,285.4 511.8,288.9 512.2,311.4 512.6,317.0 513.0,333.1 513.5,327.2 513.9,310.7 514.3,290.2 514.7,286.2 515.1,289.7 515.6,298.1 516.0,291.3 516.4,291.3 516.8,291.1 517.2,294.6 517.7,290.4 518.1,285.0 518.5,284.5 518.9,285.9 519.3,299.8 519.8,296.1 520.2,292.3 520.6,290.9 521.0,282.5 521.4,284.0 521.9,288.0 522.3,275.8 522.7,278.6 523.1,281.4 523.5,274.5 524.0,286.4 524.4,286.7 524.8,293.7 525.2,288.5 525.6,292.8 526.1,290.7 526.5,301.2 526.9,299.4 527.3,284.9 527.7,286.0 528.2,288.5 528.6,285.1 529.0,284.5 529.4,294.1 529.8,291.1 530.3,301.9 530.7,295.1 531.1,313.0 531.5,294.2 531.9,301.2 532.4,290.1 532.8,297.2 533.2,298.1 533.6,285.6 534.0,292.5 534.5,301.9 534.9,287.6 535.3,296.3 535.7,303.5 536.1,307.0 536.6,300.7 537.0,301.6 537.4,296.5 537.8,287.9 538.2,278.0 538.7,280.6 539.1,270.3 539.5,282.2 539.9,286.7 540.3,293.0 540.8,292.3 541.2,290.4 541.6,301.1 542.0,291.8 542.4,295.5 542.9,296.5 543.3,304.4 543.7,296.5 544.1,300.2 544.5,300.4 545.0,299.2 545.4,300.7 545.8,312.9 546.2,301.0 546.6,295.1 547.1,290.0 547.5,293.9 547.9,283.3 548.3,289.0 548.7,283.6 549.2,279.0 549.6,295.8 550.0,293.2 550.4,294.1 550.8,290.8 551.3,285.7 551.7,283.3 552.1,297.5 552.5,303.5 552.9,292.5 553.4,288.9 553.8,297.3 554.2,291.2 554.6,294.5 555.0,299.3 555.5,290.5 555.9,288.8 556.3,279.0 556.7,287.7 557.1,294.7 557.6,300.7 558.0,285.9 558.4,296.9 558.8,300.4 559.2,307.0 559.7,298.9 560.1,293.1 560.5,289.7 560.9,292.2 561.3,305.9 561.8,287.0 562.2,289.4 562.6,287.6 563.0,304.6 563.4,298.6 563.9,301.2 564.3,297.2 564.7,297.7 565.1,309.0 565.5,304.7 566.0,311.0 566.4,307.4 566.8,295.7 567.2,297.2 567.6,306.3 568.1,309.0 568.5,305.1 568.9,296.5 569.3,306.4 569.7,303.7 570.2,304.2 570.6,301.1 571.0,309.7 571.4,294.0 571.8,299.3 572.3,300.2 572.7,297.9 573.1,296.7 573.5,295.8 573.9,292.8 574.4,307.7 574.8,316.4 575.2,301.9 575.6,299.7 576.0,299.3 576.5,295.0 576.9,291.0 577.3,284.3 577.7,284.1 578.1,298.1 578.6,296.3 579.0,287.7 579.4,301.5 579.8,300.9 580.2,288.8 580.7,298.7 581.1,292.7 581.5,292.7 581.9,296.2 582.3,296.6 582.8,288.5 583.2,288.8 583.6,290.3 584.0,289.3 584.4,299.3 584.9,299.0 585.3,301.3 585.7,304.5 586.1,294.3 586.5,305.9 587.0,291.2 587.4,292.5 587.8,304.9 588.2,304.4 588.6,293.6 589.1,295.0 589.5,299.5 589.9,287.2 590.3,298.6 590.7,292.7 591.2,294.2 591.6,284.5 592.0,294.3 592.4,300.4 592.8,289.4 593.3,290.7 593.7,303.3 594.1,289.9 594.5,298.6 594.9,284.1 595.4,271.2 595.8,279.4 596.2,294.9 596.6,293.3 597.0,303.0 597.5,288.9 597.9,292.5 598.3,297.1 598.7,296.8 599.1,307.5 599.6,304.3 600.0,316.4 600.4,289.4 600.8,288.2 601.2,290.2 601.7,290.5 602.1,298.2 602.5,285.6 602.9,299.2 603.3,301.7 603.8,300.0 604.2,292.8 604.6,304.7 605.0,302.4 605.4,298.4 605.9,290.9 606.3,289.6 606.7,295.1 607.1,293.9 607.5,304.9 608.0,294.0 608.4,290.2 608.8,287.7 609.2,297.9 609.6,290.7 610.1,289.0 610.5,283.3 610.9,287.1 611.3,294.9 611.7,300.6 612.2,318.9 612.6,313.6 613.0,319.5 613.4,304.8 613.8,302.1 614.3,292.2 614.7,291.3 615.1,285.5 615.5,288.0 615.9,288.8 616.4,288.2 616.8,300.8 617.2,290.1 617.6,304.5 618.0,286.5 618.5,293.9 618.9,271.4 619.3,279.1 619.7,293.0 620.1,293.9 620.6,303.4 621.0,298.2 621.4,297.8 621.8,296.0 622.2,296.9 622.7,293.8 623.1,290.5 623.5,286.3 623.9,299.7 624.3,296.9 624.8,313.5 625.2,301.4 625.6,295.6 626.0,292.6 626.4,298.9 626.9,301.5 627.3,302.7 627.7,297.2 628.1,297.0 628.5,306.7 629.0,299.8 629.4,312.6 629.8,299.8 630.2,314.6 630.6,305.1 631.1,321.0 631.5,309.1 631.9,301.0 632.3,297.1 632.7,294.1 633.0,296.5 643.0,296.5" fill="none" stroke="#ffffff" stroke-width="1.25" stroke-linejoin="round"/>
<line x1="162.00" y1="260.00" x2="162.00" y2="349.00" stroke="#1894a4" stroke-width="1.6" />
<rect x="103.40" y="353.60" width="540.00" height="81.60" fill="#000" />
<line x1="136.31" y1="355.00" x2="136.31" y2="420.00" stroke="#06260b" stroke-width="0.45" />
<line x1="144.62" y1="355.00" x2="144.62" y2="420.00" stroke="#06260b" stroke-width="0.45" />
<line x1="152.94" y1="355.00" x2="152.94" y2="420.00" stroke="#06260b" stroke-width="0.45" />
<line x1="161.25" y1="355.00" x2="161.25" y2="420.00" stroke="#06260b" stroke-width="0.45" />
<line x1="169.56" y1="355.00" x2="169.56" y2="420.00" stroke="#06260b" stroke-width="0.45" />
<line x1="177.88" y1="355.00" x2="177.88" y2="420.00" stroke="#06260b" stroke-width="0.45" />
<line x1="186.19" y1="355.00" x2="186.19" y2="420.00" stroke="#06260b" stroke-width="0.45" />
<line x1="194.50" y1="355.00" x2="194.50" y2="420.00" stroke="#0b4712" stroke-width="0.6" />
<line x1="202.81" y1="355.00" x2="202.81" y2="420.00" stroke="#06260b" stroke-width="0.45" />
<line x1="211.12" y1="355.00" x2="211.12" y2="420.00" stroke="#06260b" stroke-width="0.45" />
<line x1="219.44" y1="355.00" x2="219.44" y2="420.00" stroke="#06260b" stroke-width="0.45" />
<line x1="227.75" y1="355.00" x2="227.75" y2="420.00" stroke="#06260b" stroke-width="0.45" />
<line x1="236.06" y1="355.00" x2="236.06" y2="420.00" stroke="#06260b" stroke-width="0.45" />
<line x1="244.38" y1="355.00" x2="244.38" y2="420.00" stroke="#06260b" stroke-width="0.45" />
<line x1="252.69" y1="355.00" x2="252.69" y2="420.00" stroke="#06260b" stroke-width="0.45" />
<line x1="261.00" y1="355.00" x2="261.00" y2="420.00" stroke="#0b4712" stroke-width="0.6" />
<line x1="269.31" y1="355.00" x2="269.31" y2="420.00" stroke="#06260b" stroke-width="0.45" />
<line x1="277.62" y1="355.00" x2="277.62" y2="420.00" stroke="#06260b" stroke-width="0.45" />
<line x1="285.94" y1="355.00" x2="285.94" y2="420.00" stroke="#06260b" stroke-width="0.45" />
<line x1="294.25" y1="355.00" x2="294.25" y2="420.00" stroke="#06260b" stroke-width="0.45" />
<line x1="302.56" y1="355.00" x2="302.56" y2="420.00" stroke="#06260b" stroke-width="0.45" />
<line x1="310.88" y1="355.00" x2="310.88" y2="420.00" stroke="#06260b" stroke-width="0.45" />
<line x1="319.19" y1="355.00" x2="319.19" y2="420.00" stroke="#06260b" stroke-width="0.45" />
<line x1="327.50" y1="355.00" x2="327.50" y2="420.00" stroke="#0b4712" stroke-width="0.6" />
<line x1="335.81" y1="355.00" x2="335.81" y2="420.00" stroke="#06260b" stroke-width="0.45" />
<line x1="344.12" y1="355.00" x2="344.12" y2="420.00" stroke="#06260b" stroke-width="0.45" />
<line x1="352.44" y1="355.00" x2="352.44" y2="420.00" stroke="#06260b" stroke-width="0.45" />
<line x1="360.75" y1="355.00" x2="360.75" y2="420.00" stroke="#06260b" stroke-width="0.45" />
<line x1="369.06" y1="355.00" x2="369.06" y2="420.00" stroke="#06260b" stroke-width="0.45" />
<line x1="377.38" y1="355.00" x2="377.38" y2="420.00" stroke="#06260b" stroke-width="0.45" />
<line x1="385.69" y1="355.00" x2="385.69" y2="420.00" stroke="#06260b" stroke-width="0.45" />
<line x1="394.00" y1="355.00" x2="394.00" y2="420.00" stroke="#0b4712" stroke-width="0.6" />
<line x1="402.31" y1="355.00" x2="402.31" y2="420.00" stroke="#06260b" stroke-width="0.45" />
<line x1="410.62" y1="355.00" x2="410.62" y2="420.00" stroke="#06260b" stroke-width="0.45" />
<line x1="418.94" y1="355.00" x2="418.94" y2="420.00" stroke="#06260b" stroke-width="0.45" />
<line x1="427.25" y1="355.00" x2="427.25" y2="420.00" stroke="#06260b" stroke-width="0.45" />
<line x1="435.56" y1="355.00" x2="435.56" y2="420.00" stroke="#06260b" stroke-width="0.45" />
<line x1="443.88" y1="355.00" x2="443.88" y2="420.00" stroke="#06260b" stroke-width="0.45" />
<line x1="452.19" y1="355.00" x2="452.19" y2="420.00" stroke="#06260b" stroke-width="0.45" />
<line x1="460.50" y1="355.00" x2="460.50" y2="420.00" stroke="#0b4712" stroke-width="0.6" />
<line x1="468.81" y1="355.00" x2="468.81" y2="420.00" stroke="#06260b" stroke-width="0.45" />
<line x1="477.12" y1="355.00" x2="477.12" y2="420.00" stroke="#06260b" stroke-width="0.45" />
<line x1="485.44" y1="355.00" x2="485.44" y2="420.00" stroke="#06260b" stroke-width="0.45" />
<line x1="493.75" y1="355.00" x2="493.75" y2="420.00" stroke="#06260b" stroke-width="0.45" />
<line x1="502.06" y1="355.00" x2="502.06" y2="420.00" stroke="#06260b" stroke-width="0.45" />
<line x1="510.38" y1="355.00" x2="510.38" y2="420.00" stroke="#06260b" stroke-width="0.45" />
<line x1="518.69" y1="355.00" x2="518.69" y2="420.00" stroke="#06260b" stroke-width="0.45" />
<line x1="527.00" y1="355.00" x2="527.00" y2="420.00" stroke="#0b4712" stroke-width="0.6" />
<line x1="535.31" y1="355.00" x2="535.31" y2="420.00" stroke="#06260b" stroke-width="0.45" />
<line x1="543.62" y1="355.00" x2="543.62" y2="420.00" stroke="#06260b" stroke-width="0.45" />
<line x1="551.94" y1="355.00" x2="551.94" y2="420.00" stroke="#06260b" stroke-width="0.45" />
<line x1="560.25" y1="355.00" x2="560.25" y2="420.00" stroke="#06260b" stroke-width="0.45" />
<line x1="568.56" y1="355.00" x2="568.56" y2="420.00" stroke="#06260b" stroke-width="0.45" />
<line x1="576.88" y1="355.00" x2="576.88" y2="420.00" stroke="#06260b" stroke-width="0.45" />
<line x1="585.19" y1="355.00" x2="585.19" y2="420.00" stroke="#06260b" stroke-width="0.45" />
<line x1="593.50" y1="355.00" x2="593.50" y2="420.00" stroke="#0b4712" stroke-width="0.6" />
<line x1="601.81" y1="355.00" x2="601.81" y2="420.00" stroke="#06260b" stroke-width="0.45" />
<line x1="610.12" y1="355.00" x2="610.12" y2="420.00" stroke="#06260b" stroke-width="0.45" />
<line x1="618.44" y1="355.00" x2="618.44" y2="420.00" stroke="#06260b" stroke-width="0.45" />
<line x1="626.75" y1="355.00" x2="626.75" y2="420.00" stroke="#06260b" stroke-width="0.45" />
<line x1="635.06" y1="355.00" x2="635.06" y2="420.00" stroke="#06260b" stroke-width="0.45" />
<line x1="128.00" y1="355.50" x2="643.00" y2="355.50" stroke="#06260b" stroke-width="0.45" />
<line x1="128.00" y1="363.00" x2="643.00" y2="363.00" stroke="#06260b" stroke-width="0.45" />
<line x1="128.00" y1="370.60" x2="643.00" y2="370.60" stroke="#06260b" stroke-width="0.45" />
<line x1="128.00" y1="378.20" x2="643.00" y2="378.20" stroke="#06260b" stroke-width="0.45" />
<line x1="128.00" y1="393.60" x2="643.00" y2="393.60" stroke="#06260b" stroke-width="0.45" />
<line x1="128.00" y1="401.20" x2="643.00" y2="401.20" stroke="#06260b" stroke-width="0.45" />
<line x1="128.00" y1="408.80" x2="643.00" y2="408.80" stroke="#06260b" stroke-width="0.45" />
<line x1="127.00" y1="355.00" x2="127.00" y2="421.00" stroke="#d8c820" stroke-width="1.4" />
<text x="125.20" y="388.80" font-size="7.4" fill="#e8d820" text-anchor="end" font-weight="bold" >0</text>
<text transform="translate(115,416) rotate(-90)" font-size="7.4" font-weight="bold" fill="#e8d820">BrakePedal - [...</text>
<polyline points="127.0,386.0 156.4,386.0 157.0,384.0 157.8,382.0 159.2,382.1 160.0,385.0 160.6,386.0 166.4,386.0 167.0,372.0 167.8,370.0 171.2,371.0 172.0,373.0 172.6,386.0 172.0,386.0 172.6,375.0 173.4,373.0 175.7,374.1 176.5,376.0 177.1,386.0 176.4,386.0 177.0,377.0 177.8,375.0 179.2,375.4 180.0,378.0 180.6,386.0 198.4,386.0 199.0,380.6 199.8,378.6 200.7,380.5 201.5,381.6 202.1,386.0 207.0,386.0 207.6,370.0 208.4,368.0 210.2,368.7 211.0,371.0 211.6,386.0 214.9,386.0 215.5,381.0 216.3,379.0 216.7,379.3 217.5,382.0 218.1,386.0 218.4,386.0 219.0,377.0 219.8,375.0 220.7,375.4 221.5,378.0 222.1,386.0 228.0,386.0 228.6,372.6 229.4,370.6 230.8,372.1 231.6,373.6 232.2,386.0 252.4,386.0 253.0,374.0 253.8,372.0 255.2,373.8 256.0,375.0 256.6,386.0 265.4,386.0 266.0,379.0 266.8,377.0 267.6,377.3 268.4,380.0 269.0,386.0 277.0,386.0 277.6,373.0 278.4,371.0 280.7,371.1 281.5,374.0 282.1,386.0 282.4,386.0 283.0,376.0 283.8,374.0 284.2,375.6 285.0,377.0 285.6,386.0 285.4,386.0 286.0,377.0 286.8,375.0 287.2,375.5 288.0,378.0 288.6,386.0 298.4,386.0 299.0,366.6 299.8,364.6 301.8,366.6 302.6,367.6 303.2,386.0 324.0,386.0 324.6,379.0 325.4,377.0 326.8,378.0 327.6,380.0 328.2,386.0 341.0,386.0 341.6,376.6 342.4,374.6 343.6,375.9 344.4,377.6 345.0,386.0 357.4,386.0 358.0,373.6 358.8,371.6 360.2,372.3 361.0,374.6 361.6,386.0 371.4,386.0 372.0,372.0 372.8,370.0 374.2,371.6 375.0,373.0 375.6,386.0 386.4,386.0 387.0,373.0 387.8,371.0 389.6,371.9 390.4,374.0 391.0,386.0 397.4,386.0 398.0,380.0 398.8,378.0 399.6,378.6 400.4,381.0 401.0,386.0 419.0,386.0 419.6,372.0 420.4,370.0 422.2,371.8 423.0,373.0 423.6,386.0 430.4,386.0 431.0,380.0 431.8,378.0 433.2,378.2 434.0,381.0 434.6,386.0 438.0,386.0 438.6,374.0 439.4,372.0 443.8,373.5 444.6,375.0 445.2,386.0 458.4,386.0 459.0,377.0 459.8,375.0 459.8,375.1 460.6,378.0 461.2,386.0 481.4,386.0 482.0,372.0 482.8,370.0 484.2,371.3 485.0,373.0 485.6,386.0 493.4,386.0 494.0,376.0 494.8,374.0 496.2,374.8 497.0,377.0 497.6,386.0 509.4,386.0 510.0,375.0 510.8,373.0 513.2,374.7 514.0,376.0 514.6,386.0 514.0,386.0 514.6,358.6 515.4,356.6 516.2,356.7 517.0,359.6 517.6,386.0 516.6,386.0 517.2,368.0 518.0,366.0 518.8,367.1 519.6,369.0 520.2,386.0 520.4,386.0 521.0,376.0 521.8,374.0 523.2,374.8 524.0,377.0 524.6,386.0 525.4,386.0 526.0,379.0 526.8,377.0 533.2,378.8 534.0,380.0 534.6,386.0 544.4,386.0 545.0,381.0 545.8,379.0 547.2,380.9 548.0,382.0 548.6,386.0 557.4,386.0 558.0,385.0 558.8,383.0 559.2,384.3 560.0,386.0 560.6,386.0 573.4,386.0 574.0,376.0 574.8,374.0 576.2,374.4 577.0,377.0 577.6,386.0 597.4,386.0 598.0,374.0 598.8,372.0 600.8,372.5 601.6,375.0 602.2,386.0 609.0,386.0 609.6,374.0 610.4,372.0 612.2,372.5 613.0,375.0 613.6,386.0 613.0,386.0 613.6,376.0 614.4,374.0 615.2,374.9 616.0,377.0 616.6,386.0 626.4,386.0 627.0,379.0 627.8,377.0 630.2,377.5 631.0,380.0 632.0,376.0 643.0,375.6" fill="none" stroke="#ffee10" stroke-width="1.9" stroke-linejoin="round"/>
<path d="M127.0 417.5 L161.6 417.5 L162.0 392.0 L163.4 392.0 L163.8 417.5 L166.0 417.5 L166.5 411.0 L167.0 414.6 L167.5 411.7 L168.0 417.5 L170.5 417.5 L175.0 417.5 L175.0 417.5 L175.6 414.5 L176.2 416.2 L176.7 416.2 L177.3 417.5 L180.1 417.5 L183.7 417.5 L183.7 417.5 L184.3 416.0 L184.9 416.9 L185.5 416.3 L186.1 417.5 L191.2 417.5 L191.2 417.5 L191.9 411.5 L192.5 414.8 L193.2 416.2 L193.8 417.5 L195.6 417.5 L197.6 417.5 L196.6 417.5 L196.6 391.6 L197.0 417.5 L197.5 391.6 L197.9 417.5 L198.4 391.6 L198.8 417.5 L199.3 391.6 L199.8 417.5 L200.2 391.6 L200.7 417.5 L200.4 417.5 L202.8 417.5 L202.8 417.5 L203.1 404.5 L203.4 411.4 L203.7 406.5 L204.0 417.5 L209.9 417.5 L209.9 417.5 L210.3 409.5 L210.6 412.6 L210.9 415.8 L211.3 417.5 L215.1 417.5 L211.6 417.5 L211.6 391.6 L212.0 417.5 L212.5 391.6 L212.9 417.5 L213.4 391.6 L213.8 417.5 L214.3 391.6 L214.8 417.5 L215.2 391.6 L215.7 417.5 L216.1 391.6 L216.6 417.5 L217.0 417.5 L221.6 417.5 L221.6 417.5 L221.9 406.5 L222.2 413.6 L222.5 407.9 L222.8 417.5 L224.1 417.5 L224.4 414.5 L224.8 415.6 L225.1 416.6 L225.4 417.5 L226.5 417.5 L226.9 412.5 L227.4 413.9 L227.8 413.1 L228.3 417.5 L233.0 417.5 L235.3 417.5 L235.3 417.5 L235.5 411.5 L235.8 414.9 L236.0 412.2 L236.3 417.5 L236.7 417.5 L237.0 406.5 L237.4 412.4 L237.7 415.0 L238.1 417.5 L238.8 417.5 L239.3 406.5 L239.8 408.8 L240.4 408.6 L240.9 417.5 L241.9 417.5 L242.4 406.5 L242.8 412.1 L243.3 414.1 L243.8 417.5 L249.2 417.5 L252.9 417.5 L252.9 417.5 L253.4 408.5 L254.0 411.5 L254.5 409.5 L255.0 417.5 L258.0 417.5 L259.6 417.5 L262.5 417.5 L261.6 417.5 L261.6 391.6 L262.1 417.5 L262.5 391.6 L262.9 417.5 L263.4 391.6 L263.8 417.5 L263.6 417.5 L268.1 417.5 L268.1 417.5 L268.5 406.5 L269.0 411.0 L269.4 411.7 L269.8 417.5 L270.8 417.5 L271.3 406.5 L271.7 408.7 L272.2 413.5 L272.7 417.5 L273.6 417.5 L273.6 391.6 L274.1 417.5 L274.5 391.6 L274.9 417.5 L275.4 391.6 L275.8 417.5 L276.0 417.5 L279.4 417.5 L282.3 417.5 L282.3 417.5 L282.6 406.5 L282.9 409.8 L283.1 410.2 L283.4 417.5 L287.1 417.5 L285.5 417.5 L285.5 391.6 L285.9 417.5 L286.4 391.6 L286.8 417.5 L287.3 391.6 L287.7 417.5 L288.0 417.5 L293.1 417.5 L293.1 417.5 L293.6 402.5 L294.1 405.5 L294.5 413.8 L295.0 417.5 L296.1 417.5 L296.6 409.5 L297.0 411.8 L297.5 414.6 L297.9 417.5 L301.4 417.5 L305.8 417.5 L310.3 417.5 L310.3 417.5 L310.7 404.5 L311.1 408.0 L311.5 411.0 L311.9 417.5 L315.3 417.5 L315.3 417.5 L315.8 408.5 L316.2 414.4 L316.6 413.2 L317.1 417.5 L321.5 417.5 L321.5 417.5 L322.1 411.5 L322.6 415.3 L323.2 413.4 L323.7 417.5 L324.3 417.5 L324.8 409.5 L325.3 413.0 L325.8 411.4 L326.3 417.5 L328.2 417.5 L328.2 417.5 L328.6 411.5 L329.0 414.1 L329.4 412.4 L329.7 417.5 L330.2 417.5 L330.5 402.5 L330.7 408.2 L331.0 405.5 L331.3 417.5 L331.7 417.5 L332.2 408.5 L332.7 413.1 L333.2 415.4 L333.7 417.5 L334.3 417.5 L335.0 408.5 L335.6 412.9 L336.3 411.9 L336.9 417.5 L337.3 417.5 L337.9 411.5 L338.6 415.1 L339.2 412.2 L339.8 417.5 L340.8 417.5 L341.2 409.5 L341.6 414.8 L342.0 411.7 L342.4 417.5 L343.0 417.5 L343.6 402.5 L344.2 408.2 L344.8 406.2 L345.5 417.5 L350.5 417.5 L353.5 417.5 L355.6 417.5 L355.6 417.5 L356.1 404.5 L356.5 410.3 L356.9 407.4 L357.4 417.5 L361.3 417.5 L361.3 417.5 L361.7 408.5 L362.2 411.3 L362.7 410.8 L363.2 417.5 L363.4 417.5 L363.9 412.5 L364.4 416.0 L364.8 414.8 L365.3 417.5 L366.5 417.5 L366.8 402.5 L367.1 407.9 L367.3 407.0 L367.6 417.5 L368.3 417.5 L368.9 404.5 L369.5 412.7 L370.1 411.2 L370.7 417.5 L373.5 417.5 L373.5 417.5 L373.8 414.5 L374.1 415.8 L374.5 415.8 L374.8 417.5 L375.0 417.5 L375.5 408.5 L375.9 412.5 L376.4 413.1 L376.9 417.5 L377.0 417.5 L377.6 404.5 L378.2 408.0 L378.8 412.6 L379.3 417.5 L377.6 417.5 L377.6 391.6 L378.1 417.5 L378.5 391.6 L378.9 417.5 L379.4 391.6 L379.8 417.5 L380.3 391.6 L380.7 417.5 L380.4 417.5 L381.0 417.5 L381.6 406.5 L382.2 410.6 L382.9 409.8 L383.5 417.5 L381.6 417.5 L381.6 391.6 L382.1 417.5 L382.5 391.6 L382.9 417.5 L383.4 391.6 L383.8 417.5 L384.3 391.6 L384.7 417.5 L385.2 391.6 L385.6 417.5 L386.1 391.6 L386.5 417.5 L386.4 417.5 L389.7 417.5 L389.7 417.5 L390.2 414.5 L390.8 416.6 L391.3 416.8 L391.9 417.5 L394.8 417.5 L394.8 417.5 L395.2 402.5 L395.6 407.7 L395.9 406.1 L396.3 417.5 L397.2 417.5 L397.5 402.5 L397.8 411.5 L398.2 412.6 L398.5 417.5 L399.7 417.5 L400.3 411.5 L400.9 415.5 L401.5 413.8 L402.1 417.5 L405.9 417.5 L409.1 417.5 L413.0 417.5 L413.0 417.5 L413.4 409.5 L413.9 414.5 L414.4 411.5 L414.8 417.5 L415.9 417.5 L416.2 402.5 L416.4 407.1 L416.7 404.5 L417.0 417.5 L420.1 417.5 L424.0 417.5 L424.0 417.5 L424.6 414.5 L425.2 416.4 L425.8 416.6 L426.4 417.5 L431.7 417.5 L435.7 417.5 L438.2 417.5 L438.2 417.5 L438.6 409.5 L438.9 411.9 L439.2 410.4 L439.5 417.5 L440.1 417.5 L440.4 404.5 L440.7 411.7 L441.0 408.9 L441.3 417.5 L442.3 417.5 L442.9 411.5 L443.4 414.4 L444.0 413.4 L444.5 417.5 L446.7 417.5 L451.7 417.5 L455.0 417.5 L455.0 417.5 L455.3 406.5 L455.5 409.9 L455.8 408.5 L456.0 417.5 L457.3 417.5 L457.9 408.5 L458.5 412.1 L459.1 412.3 L459.7 417.5 L459.9 417.5 L460.5 408.5 L461.0 411.4 L461.6 410.0 L462.2 417.5 L463.0 417.5 L463.6 412.5 L464.3 415.1 L464.9 413.2 L465.6 417.5 L466.5 417.5 L466.9 406.5 L467.3 411.6 L467.7 412.8 L468.1 417.5 L468.6 417.5 L469.2 408.5 L469.8 411.5 L470.4 412.8 L470.9 417.5 L472.0 417.5 L472.5 411.5 L473.0 414.3 L473.5 416.2 L474.0 417.5 L474.7 417.5 L475.1 411.5 L475.6 413.2 L476.0 416.0 L476.4 417.5 L480.2 417.5 L482.0 417.5 L482.0 417.5 L482.4 402.5 L482.8 411.0 L483.1 413.4 L483.5 417.5 L483.9 417.5 L484.4 408.5 L484.8 414.3 L485.3 412.8 L485.8 417.5 L486.1 417.5 L486.5 408.5 L486.9 413.9 L487.3 413.2 L487.7 417.5 L487.6 417.5 L487.6 391.6 L488.1 417.5 L488.5 391.6 L488.9 417.5 L489.4 391.6 L489.8 417.5 L490.3 391.6 L490.7 417.5 L490.6 417.5 L491.2 417.5 L491.7 409.5 L492.3 413.0 L492.8 414.6 L493.4 417.5 L493.6 417.5 L494.0 414.5 L494.5 415.4 L494.9 415.7 L495.4 417.5 L496.4 417.5 L496.7 411.5 L497.0 414.9 L497.3 416.2 L497.6 417.5 L498.2 417.5 L498.7 408.5 L499.2 414.3 L499.7 411.5 L500.1 417.5 L500.5 417.5 L501.1 414.5 L501.7 416.5 L502.3 416.2 L502.8 417.5 L503.1 417.5 L503.6 411.5 L504.2 414.7 L504.8 412.9 L505.4 417.5 L507.6 417.5 L510.5 417.5 L510.5 417.5 L511.1 412.5 L511.7 415.6 L512.2 414.7 L512.8 417.5 L517.3 417.5 L517.3 417.5 L517.8 409.5 L518.4 412.3 L518.9 415.5 L519.4 417.5 L521.1 417.5 L521.1 417.5 L521.8 406.5 L522.4 410.1 L523.0 410.4 L523.6 417.5 L528.4 417.5 L530.2 417.5 L533.0 417.5 L533.0 417.5 L533.5 402.5 L534.0 407.4 L534.5 413.1 L535.0 417.5 L540.9 417.5 L545.3 417.5 L548.9 417.5 L548.9 417.5 L549.4 408.5 L550.0 412.1 L550.5 411.6 L551.1 417.5 L552.0 417.5 L552.5 408.5 L553.1 411.0 L553.6 414.2 L554.2 417.5 L559.6 417.5 L564.4 417.5 L566.1 417.5 L568.9 417.5 L573.2 417.5 L573.2 417.5 L573.6 404.5 L574.0 413.0 L574.4 409.0 L574.8 417.5 L574.0 417.5 L574.0 391.6 L574.5 417.5 L574.9 391.6 L575.4 417.5 L575.8 391.6 L576.2 417.5 L576.7 391.6 L577.1 417.5 L577.6 391.6 L578.0 417.5 L578.5 391.6 L578.9 417.5 L579.4 391.6 L579.8 417.5 L579.6 417.5 L580.2 417.5 L580.8 404.5 L581.3 413.6 L581.9 410.4 L582.5 417.5 L582.6 417.5 L583.0 402.5 L583.4 408.5 L583.8 409.7 L584.3 417.5 L584.8 417.5 L585.2 406.5 L585.6 411.6 L586.0 415.0 L586.4 417.5 L589.1 417.5 L592.0 417.5 L592.0 417.5 L592.3 409.5 L592.6 412.4 L592.9 415.7 L593.2 417.5 L592.6 417.5 L592.6 391.6 L593.1 417.5 L593.5 391.6 L594.0 417.5 L594.4 391.6 L594.9 417.5 L595.3 391.6 L595.8 417.5 L596.2 391.6 L596.6 417.5 L597.1 391.6 L597.5 417.5 L597.4 417.5 L598.0 417.5 L598.4 408.5 L598.8 414.1 L599.1 414.6 L599.5 417.5 L604.7 417.5 L607.3 417.5 L607.3 417.5 L607.8 409.5 L608.4 411.2 L609.0 413.7 L609.6 417.5 L611.6 417.5 L611.6 417.5 L612.1 408.5 L612.7 411.8 L613.2 409.5 L613.8 417.5 L618.7 417.5 L618.7 417.5 L619.2 408.5 L619.7 414.5 L620.2 411.8 L620.7 417.5 L624.2 417.5 L627.9 417.5 L643.0 417.5 Z" fill="#a8f000" stroke="#b0ff00" stroke-width="1.3" stroke-linejoin="round"/>
<line x1="162.00" y1="354.00" x2="162.00" y2="421.00" stroke="#1894a4" stroke-width="1.6" />
<path d="M160.4 354 h3.2 l-1.6 2z" fill="#30b0c0" />
<path d="M160.4 260 h3.2 l-1.6 2z" fill="#30b0c0" />
<line x1="127.00" y1="421.00" x2="643.00" y2="421.00" stroke="#e8e8e8" stroke-width="1" />
<line x1="128.00" y1="421.00" x2="128.00" y2="427.00" stroke="#e8e8e8" stroke-width="0.7" />
<line x1="136.31" y1="421.00" x2="136.31" y2="423.60" stroke="#e8e8e8" stroke-width="0.7" />
<line x1="144.62" y1="421.00" x2="144.62" y2="423.60" stroke="#e8e8e8" stroke-width="0.7" />
<line x1="152.94" y1="421.00" x2="152.94" y2="423.60" stroke="#e8e8e8" stroke-width="0.7" />
<line x1="161.25" y1="421.00" x2="161.25" y2="423.60" stroke="#e8e8e8" stroke-width="0.7" />
<line x1="169.56" y1="421.00" x2="169.56" y2="423.60" stroke="#e8e8e8" stroke-width="0.7" />
<line x1="177.88" y1="421.00" x2="177.88" y2="423.60" stroke="#e8e8e8" stroke-width="0.7" />
<line x1="186.19" y1="421.00" x2="186.19" y2="423.60" stroke="#e8e8e8" stroke-width="0.7" />
<line x1="194.50" y1="421.00" x2="194.50" y2="427.00" stroke="#e8e8e8" stroke-width="0.7" />
<line x1="202.81" y1="421.00" x2="202.81" y2="423.60" stroke="#e8e8e8" stroke-width="0.7" />
<line x1="211.12" y1="421.00" x2="211.12" y2="423.60" stroke="#e8e8e8" stroke-width="0.7" />
<line x1="219.44" y1="421.00" x2="219.44" y2="423.60" stroke="#e8e8e8" stroke-width="0.7" />
<line x1="227.75" y1="421.00" x2="227.75" y2="423.60" stroke="#e8e8e8" stroke-width="0.7" />
<line x1="236.06" y1="421.00" x2="236.06" y2="423.60" stroke="#e8e8e8" stroke-width="0.7" />
<line x1="244.38" y1="421.00" x2="244.38" y2="423.60" stroke="#e8e8e8" stroke-width="0.7" />
<line x1="252.69" y1="421.00" x2="252.69" y2="423.60" stroke="#e8e8e8" stroke-width="0.7" />
<line x1="261.00" y1="421.00" x2="261.00" y2="427.00" stroke="#e8e8e8" stroke-width="0.7" />
<line x1="269.31" y1="421.00" x2="269.31" y2="423.60" stroke="#e8e8e8" stroke-width="0.7" />
<line x1="277.62" y1="421.00" x2="277.62" y2="423.60" stroke="#e8e8e8" stroke-width="0.7" />
<line x1="285.94" y1="421.00" x2="285.94" y2="423.60" stroke="#e8e8e8" stroke-width="0.7" />
<line x1="294.25" y1="421.00" x2="294.25" y2="423.60" stroke="#e8e8e8" stroke-width="0.7" />
<line x1="302.56" y1="421.00" x2="302.56" y2="423.60" stroke="#e8e8e8" stroke-width="0.7" />
<line x1="310.88" y1="421.00" x2="310.88" y2="423.60" stroke="#e8e8e8" stroke-width="0.7" />
<line x1="319.19" y1="421.00" x2="319.19" y2="423.60" stroke="#e8e8e8" stroke-width="0.7" />
<line x1="327.50" y1="421.00" x2="327.50" y2="427.00" stroke="#e8e8e8" stroke-width="0.7" />
<line x1="335.81" y1="421.00" x2="335.81" y2="423.60" stroke="#e8e8e8" stroke-width="0.7" />
<line x1="344.12" y1="421.00" x2="344.12" y2="423.60" stroke="#e8e8e8" stroke-width="0.7" />
<line x1="352.44" y1="421.00" x2="352.44" y2="423.60" stroke="#e8e8e8" stroke-width="0.7" />
<line x1="360.75" y1="421.00" x2="360.75" y2="423.60" stroke="#e8e8e8" stroke-width="0.7" />
<line x1="369.06" y1="421.00" x2="369.06" y2="423.60" stroke="#e8e8e8" stroke-width="0.7" />
<line x1="377.38" y1="421.00" x2="377.38" y2="423.60" stroke="#e8e8e8" stroke-width="0.7" />
<line x1="385.69" y1="421.00" x2="385.69" y2="423.60" stroke="#e8e8e8" stroke-width="0.7" />
<line x1="394.00" y1="421.00" x2="394.00" y2="427.00" stroke="#e8e8e8" stroke-width="0.7" />
<line x1="402.31" y1="421.00" x2="402.31" y2="423.60" stroke="#e8e8e8" stroke-width="0.7" />
<line x1="410.62" y1="421.00" x2="410.62" y2="423.60" stroke="#e8e8e8" stroke-width="0.7" />
<line x1="418.94" y1="421.00" x2="418.94" y2="423.60" stroke="#e8e8e8" stroke-width="0.7" />
<line x1="427.25" y1="421.00" x2="427.25" y2="423.60" stroke="#e8e8e8" stroke-width="0.7" />
<line x1="435.56" y1="421.00" x2="435.56" y2="423.60" stroke="#e8e8e8" stroke-width="0.7" />
<line x1="443.88" y1="421.00" x2="443.88" y2="423.60" stroke="#e8e8e8" stroke-width="0.7" />
<line x1="452.19" y1="421.00" x2="452.19" y2="423.60" stroke="#e8e8e8" stroke-width="0.7" />
<line x1="460.50" y1="421.00" x2="460.50" y2="427.00" stroke="#e8e8e8" stroke-width="0.7" />
<line x1="468.81" y1="421.00" x2="468.81" y2="423.60" stroke="#e8e8e8" stroke-width="0.7" />
<line x1="477.12" y1="421.00" x2="477.12" y2="423.60" stroke="#e8e8e8" stroke-width="0.7" />
<line x1="485.44" y1="421.00" x2="485.44" y2="423.60" stroke="#e8e8e8" stroke-width="0.7" />
<line x1="493.75" y1="421.00" x2="493.75" y2="423.60" stroke="#e8e8e8" stroke-width="0.7" />
<line x1="502.06" y1="421.00" x2="502.06" y2="423.60" stroke="#e8e8e8" stroke-width="0.7" />
<line x1="510.38" y1="421.00" x2="510.38" y2="423.60" stroke="#e8e8e8" stroke-width="0.7" />
<line x1="518.69" y1="421.00" x2="518.69" y2="423.60" stroke="#e8e8e8" stroke-width="0.7" />
<line x1="527.00" y1="421.00" x2="527.00" y2="427.00" stroke="#e8e8e8" stroke-width="0.7" />
<line x1="535.31" y1="421.00" x2="535.31" y2="423.60" stroke="#e8e8e8" stroke-width="0.7" />
<line x1="543.62" y1="421.00" x2="543.62" y2="423.60" stroke="#e8e8e8" stroke-width="0.7" />
<line x1="551.94" y1="421.00" x2="551.94" y2="423.60" stroke="#e8e8e8" stroke-width="0.7" />
<line x1="560.25" y1="421.00" x2="560.25" y2="423.60" stroke="#e8e8e8" stroke-width="0.7" />
<line x1="568.56" y1="421.00" x2="568.56" y2="423.60" stroke="#e8e8e8" stroke-width="0.7" />
<line x1="576.88" y1="421.00" x2="576.88" y2="423.60" stroke="#e8e8e8" stroke-width="0.7" />
<line x1="585.19" y1="421.00" x2="585.19" y2="423.60" stroke="#e8e8e8" stroke-width="0.7" />
<line x1="593.50" y1="421.00" x2="593.50" y2="427.00" stroke="#e8e8e8" stroke-width="0.7" />
<line x1="601.81" y1="421.00" x2="601.81" y2="423.60" stroke="#e8e8e8" stroke-width="0.7" />
<line x1="610.12" y1="421.00" x2="610.12" y2="423.60" stroke="#e8e8e8" stroke-width="0.7" />
<line x1="618.44" y1="421.00" x2="618.44" y2="423.60" stroke="#e8e8e8" stroke-width="0.7" />
<line x1="626.75" y1="421.00" x2="626.75" y2="423.60" stroke="#e8e8e8" stroke-width="0.7" />
<line x1="635.06" y1="421.00" x2="635.06" y2="423.60" stroke="#e8e8e8" stroke-width="0.7" />
<text x="130.00" y="431.60" font-size="7.4" fill="#e8e8e8" font-weight="bold" >0s</text>
<text x="196.50" y="431.60" font-size="7.4" fill="#e8e8e8" font-weight="bold" >2m 0s</text>
<text x="263.00" y="431.60" font-size="7.4" fill="#e8e8e8" font-weight="bold" >4m 0s</text>
<text x="329.50" y="431.60" font-size="7.4" fill="#e8e8e8" font-weight="bold" >6m 0s</text>
<text x="396.00" y="431.60" font-size="7.4" fill="#e8e8e8" font-weight="bold" >8m 0s</text>
<text x="462.50" y="431.60" font-size="7.4" fill="#e8e8e8" font-weight="bold" >10m 0s</text>
<text x="529.00" y="431.60" font-size="7.4" fill="#e8e8e8" font-weight="bold" >12m 0s</text>
<text x="595.50" y="431.60" font-size="7.4" fill="#e8e8e8" font-weight="bold" >14m 0s</text>
<rect x="128.00" y="436.00" width="515.00" height="8.00" fill="#f0f0f0" />
<rect x="137.00" y="436.60" width="497.00" height="6.80" fill="#c9c9c9" />
<path d="M133.5 437.6 l-2.2 1.9 l2.2 1.9" fill="none" stroke="#555" stroke-width="0.7" />
<path d="M637.5 437.6 l2.2 1.9 l-2.2 1.9" fill="none" stroke="#555" stroke-width="0.7" />
<line x1="164.00" y1="436.60" x2="164.00" y2="439.20" stroke="#40d0e0" stroke-width="0.8" />
<rect x="647.00" y="276.00" width="339.60" height="7.00" fill="url(#tbI)" />
<rect x="648.50" y="276.80" width="6.20" height="5.40" fill="#fff" stroke="#5a74a8" stroke-width="0.6" />
<line x1="648.50" y1="277.40" x2="654.70" y2="277.40" stroke="#5a74a8" stroke-width="0.8" />
<path d="M650.0 281.4 l1.6 -2.2 l1.2 1 l1.2 -1.6" fill="none" stroke="#c33" stroke-width="0.7" />
<text x="658.00" y="281.30" font-size="5.6" fill="#445" >[24] Map Window 1</text>
<rect x="969.60" y="277.00" width="5.00" height="5.00" fill="#fff" stroke="#c8d0dc" stroke-width="0.4" />
<text x="972.10" y="281.00" font-size="4" fill="#556" text-anchor="middle" >.</text>
<rect x="975.10" y="277.00" width="5.00" height="5.00" fill="#fff" stroke="#c8d0dc" stroke-width="0.4" />
<text x="977.60" y="281.00" font-size="4" fill="#556" text-anchor="middle" >▫</text>
<rect x="980.60" y="277.00" width="5.00" height="5.00" fill="#fff" stroke="#c8d0dc" stroke-width="0.4" />
<text x="983.10" y="281.00" font-size="4" fill="#556" text-anchor="middle" >×</text>
<g clip-path="url(#mapclip)">
<rect x="647.00" y="283.00" width="339.00" height="263.00" fill="#f2d9d7" />
<rect x="647.00" y="283.00" width="28.60" height="263.00" fill="#ece9e4" />
<rect x="647.00" y="290.00" width="4.60" height="130.00" fill="#d2e8b8" />
<circle cx="648.80" cy="296.00" r="1.2" fill="#a8d090" />
<circle cx="648.80" cy="307.00" r="1.2" fill="#a8d090" />
<circle cx="648.80" cy="318.00" r="1.2" fill="#a8d090" />
<circle cx="648.80" cy="329.00" r="1.2" fill="#a8d090" />
<circle cx="648.80" cy="340.00" r="1.2" fill="#a8d090" />
<circle cx="648.80" cy="351.00" r="1.2" fill="#a8d090" />
<circle cx="648.80" cy="362.00" r="1.2" fill="#a8d090" />
<circle cx="648.80" cy="373.00" r="1.2" fill="#a8d090" />
<circle cx="648.80" cy="384.00" r="1.2" fill="#a8d090" />
<circle cx="648.80" cy="395.00" r="1.2" fill="#a8d090" />
<circle cx="648.80" cy="406.00" r="1.2" fill="#a8d090" />
<polygon points="651.0,288.0 663.6,288.0 669.0,446.0 657.0,446.0" fill="#f6f6ba" stroke="#e0e0a0" stroke-width="0.4" />
<rect x="663.40" y="296.00" width="5.00" height="114.00" fill="#b8dc98" />
<text transform="translate(655.4,352) rotate(86)" font-size="4.6" fill="#555">Hemminger Straße</text>
<line x1="654.60" y1="283.00" x2="654.60" y2="446.00" stroke="#f0b0b0" stroke-width="0.4" stroke-dasharray="1 1.4"/>
<line x1="675.00" y1="296.00" x2="675.00" y2="446.00" stroke="#8080f0" stroke-width="0.4" stroke-dasharray="1 1.4"/>
<text x="647.60" y="288.40" font-size="4.6" fill="#555" >L 1141</text>
<polygon points="812.0,283.0 986.0,283.0 986.0,470.0 905.0,360.0 886.0,342.0" fill="#ebd9e8" />
<polygon points="800.0,283.0 817.0,283.0 888.0,343.0 903.6,361.0 986.0,438.0 986.0,482.0 957.0,450.0 881.0,380.0 867.5,369.0 800.0,308.0" fill="#c6d6a6" />
<polygon points="866.0,366.0 903.6,361.0 986.0,438.0 986.0,482.0 957.0,450.0 881.0,380.0" fill="#cfe6af" />
<polygon points="882.0,342.0 942.0,301.5 943.6,312.0 896.0,352.0" fill="#c6d6a6" />
<polyline points="800.0,288.0 830.0,312.0 850.0,335.0 872.0,362.0 884.0,376.0 905.0,388.0 925.0,402.0 950.0,430.0 975.0,455.0 986.0,470.0" fill="none" stroke="#a9cf94" stroke-width="7" />
<polyline points="800.0,288.0 830.0,312.0 850.0,335.0 872.0,362.0 884.0,376.0 905.0,388.0 925.0,402.0 950.0,430.0 975.0,455.0 986.0,470.0" fill="none" stroke="#a9cbdc" stroke-width="1.6" />
<polyline points="817.0,283.0 888.0,343.0" fill="none" stroke="#f0a0a0" stroke-width="0.4" stroke-dasharray="1 1.2"/>
<polyline points="903.6,361.0 986.0,438.0" fill="none" stroke="#f0a0a0" stroke-width="0.4" stroke-dasharray="1 1.2"/>
<polyline points="868.0,371.0 957.0,452.0 986.0,484.0" fill="none" stroke="#f0a0a0" stroke-width="0.4" stroke-dasharray="1 1.2"/>
<polyline points="780.0,283.0 800.0,302.0 868.0,370.0" fill="none" stroke="#7070f0" stroke-width="0.5" stroke-dasharray="1 1.4"/>
<polygon points="749.0,283.0 772.0,283.0 860.0,372.0 858.0,380.0 830.0,400.0 790.0,412.0 749.0,414.0" fill="#eeeeee" />
<polyline points="756.0,292.0 756.0,408.0 770.0,408.0" fill="none" stroke="#fff" stroke-width="1.2" />
<polyline points="756.0,292.0 848.0,378.0 840.0,388.0" fill="none" stroke="#fff" stroke-width="1.2" />
<polyline points="781.0,315.0 786.0,405.0" fill="none" stroke="#fff" stroke-width="1" />
<polyline points="801.0,332.0 805.0,400.0 760.0,410.0" fill="none" stroke="#fff" stroke-width="1" />
<rect x="765.00" y="373.00" width="15.60" height="25.00" fill="#d9cfc5" />
<text x="778.60" y="330.00" font-size="6" fill="#6fa8d8" >P</text>
<text x="769.60" y="395.60" font-size="6" fill="#6fa8d8" >P</text>
<text x="768.00" y="351.00" font-size="4.6" fill="#6fa8d8" >P</text>
<text x="771.00" y="351.00" font-size="4" fill="#6fa8d8" >r</text>
<text x="768.00" y="368.00" font-size="4.6" fill="#6fa8d8" >P</text>
<text x="771.00" y="368.00" font-size="4" fill="#6fa8d8" >r</text>
<text x="768.00" y="375.00" font-size="4.6" fill="#6fa8d8" >P</text>
<text x="771.00" y="375.00" font-size="4" fill="#6fa8d8" >r</text>
<polygon points="682.0,296.5 713.0,296.5 713.0,352.0 701.6,352.0 701.6,410.6 686.0,410.6 686.0,352.0 682.0,352.0" fill="#d9cfc5" />
<rect x="717.00" y="284.60" width="26.00" height="73.40" fill="#d9cfc5" />
<rect x="718.00" y="397.00" width="34.00" height="11.00" fill="#d9cfc5" />
<rect x="712.60" y="283.00" width="3.60" height="139.00" fill="#f8f8f8" />
<line x1="714.40" y1="283.00" x2="714.40" y2="420.00" stroke="#ddd" stroke-width="0.4" stroke-dasharray="1.5 1"/>
<text x="693.00" y="377.60" font-size="4.4" fill="#777" text-anchor="middle" >Wilder</text>
<text x="693.00" y="383.40" font-size="4.4" fill="#777" text-anchor="middle" >GmbH</text>
<text x="693.00" y="389.20" font-size="4.4" fill="#777" text-anchor="middle" >Holzhandlung</text>
<polyline points="647.0,428.6 700.0,427.4 752.0,423.8 790.0,420.0 832.0,408.6" fill="none" stroke="#ffffff" stroke-width="8" />
<polyline points="790.0,420.6 832.0,409.0 864.0,385.6 890.0,357.0 922.0,329.0 962.0,298.0 990.0,281.0" fill="none" stroke="#ffffff" stroke-width="5.6" />
<polyline points="690.0,427.0 730.0,425.6 790.0,421.0 832.0,409.0 864.0,385.6 890.0,357.0 922.0,329.0 962.0,298.0 990.0,281.0" fill="none" stroke="#e4d4d0" stroke-width="0.3" />
<rect x="647.00" y="423.00" width="9.60" height="12.00" fill="#fff" />
<rect x="687.40" y="424.60" width="2.00" height="7.00" fill="#ccc" stroke="#999" stroke-width="0.3" />
<polyline points="853.0,420.0 866.0,440.0 880.0,462.0 888.0,476.0" fill="none" stroke="#ffffff" stroke-width="4.6" />
<circle cx="896.60" cy="468.40" r="10" fill="none" stroke="#ffffff" stroke-width="5.6" />
<text transform="translate(873.6,452) rotate(62)" font-size="4.2" fill="#444">Motorstraße</text>
<text transform="translate(768,423.4) rotate(-4)" font-size="4.2" fill="#444">Motorstraße</text>
<text transform="translate(956,302) rotate(-30)" font-size="4.2" fill="#444">Motorstraße</text>
<polyline points="808.0,422.0 809.6,452.6 840.0,451.0 862.0,445.0" fill="none" stroke="#f4f4f4" stroke-width="1.4" />
<polyline points="862.0,474.0 858.0,486.0 820.0,486.6 817.0,489.0 817.0,518.0" fill="none" stroke="#f4f4f4" stroke-width="1.4" />
<rect x="812.60" y="433.00" width="37.40" height="15.60" fill="#d9cfc5" />
<rect x="806.00" y="460.00" width="61.00" height="17.60" fill="#d9cfc5" />
<rect x="789.00" y="438.60" width="13.00" height="81.40" fill="#d9cfc5" />
<rect x="808.00" y="479.00" width="36.00" height="7.00" fill="#eeeeee" />
<rect x="808.00" y="479.00" width="20.00" height="40.00" fill="#eeeeee" />
<rect x="829.50" y="490.00" width="27.00" height="28.00" fill="#d9cfc5" />
<polygon points="872.0,494.0 877.0,490.0 879.6,486.6 884.0,486.6 886.6,490.0 891.6,494.0 895.0,500.0 895.0,510.0 888.0,517.0 875.6,517.0 868.6,510.0 868.6,500.0" fill="#d9cfc5" />
<polygon points="901.0,488.0 905.6,488.0 905.6,485.0 927.0,485.0 927.0,510.0 901.0,510.0" fill="#d9cfc5" />
<polygon points="912.0,423.0 933.0,440.6 916.0,458.6 910.0,454.0 906.0,457.0 901.6,446.0 901.6,443.0" fill="#d9cfc5" />
<polygon points="922.6,459.6 937.0,445.0 953.6,459.6 961.0,466.0 963.6,486.0 957.0,487.0 957.0,492.0 938.0,492.6 938.0,470.0 930.0,468.0" fill="#d9cfc5" />
<polygon points="860.0,404.6 877.0,391.0 897.0,409.0 880.0,427.0" fill="#d9cfc5" />
<text x="878.00" y="410.80" font-size="4.2" fill="#888" text-anchor="middle" >39</text>
<text x="916.40" y="441.60" font-size="4.2" fill="#888" text-anchor="middle" >41</text>
<text x="914.00" y="503.60" font-size="4.2" fill="#888" text-anchor="middle" >45</text>
<text x="831.00" y="434.00" font-size="4.4" fill="#777" text-anchor="middle" >CAT</text>
<text x="831.00" y="439.60" font-size="4.4" fill="#777" text-anchor="middle" >Clean</text>
<text x="831.00" y="445.20" font-size="4.4" fill="#777" text-anchor="middle" >Air Technology</text>
<text x="831.00" y="450.80" font-size="4.4" fill="#777" text-anchor="middle" >GmbH</text>
<text x="843.00" y="501.00" font-size="4.4" fill="#777" text-anchor="middle" >RoodMicrotec</text>
<text x="843.00" y="506.80" font-size="4.4" fill="#777" text-anchor="middle" >Stuttgart</text>
<text x="843.00" y="512.60" font-size="4.4" fill="#777" text-anchor="middle" >GmbH</text>
<text x="881.60" y="504.60" font-size="4.4" fill="#777" text-anchor="middle" >Rögelein</text>
<text x="881.60" y="510.40" font-size="4.4" fill="#777" text-anchor="middle" >GmbH</text>
<text x="949.60" y="465.60" font-size="4.4" fill="#777" text-anchor="middle" >Hartmann</text>
<text x="949.60" y="471.40" font-size="4.4" fill="#777" text-anchor="middle" >Elektronik</text>
<text x="949.60" y="477.20" font-size="4.4" fill="#777" text-anchor="middle" >GmbH</text>
<text x="815.60" y="507.60" font-size="6" fill="#4a90d8" font-weight="bold" >P</text>
<text x="833.00" y="413.00" font-size="4.2" fill="#4a80f0" text-anchor="middle" >Hemminger</text>
<text x="833.00" y="418.20" font-size="4.2" fill="#4a80f0" text-anchor="middle" >Straße</text>
<text x="861.00" y="409.60" font-size="4.2" fill="#4a80f0" text-anchor="middle" >Hemminger</text>
<text x="861.00" y="414.80" font-size="4.2" fill="#4a80f0" text-anchor="middle" >Straße</text>
<rect x="831.60" y="393.60" width="3.40" height="3.60" fill="#4a90e0" />
<rect x="860.00" y="390.60" width="3.40" height="3.60" fill="#4a90e0" />
<rect x="842.80" y="283.00" width="69.80" height="12.00" fill="#d9cfc5" />
<rect x="857.00" y="295.00" width="55.60" height="6.40" fill="#d9cfc5" />
<polygon points="963.0,319.0 986.0,312.0 986.0,384.0 984.0,380.0" fill="#d9cfc5" />
<polygon points="944.6,331.6 961.6,326.0 974.0,361.0 958.0,369.0" fill="#efefef" />
<polygon points="922.0,349.0 930.0,346.6 950.0,390.0 943.6,393.6" fill="#efefef" />
<polyline points="925.6,331.0 960.0,396.0 986.0,420.0" fill="none" stroke="#f6f6f6" stroke-width="1.6" />
<polyline points="936.0,346.0 965.0,336.6" fill="none" stroke="#f6f6f6" stroke-width="1.6" />
<text x="956.60" y="351.60" font-size="6.4" fill="#8fbfe0" >P</text>
<text x="933.60" y="373.60" font-size="6.4" fill="#8fbfe0" >P</text>
<text transform="translate(899,380) rotate(24)" font-size="4" fill="#7aa8c8">Feuerbach</text>
<rect x="851.60" y="533.00" width="76.00" height="13.00" fill="#ececec" />
<line x1="861.00" y1="533.00" x2="861.00" y2="546.00" stroke="#fff" stroke-width="0.8" />
<line x1="880.00" y1="533.00" x2="880.00" y2="546.00" stroke="#fff" stroke-width="0.8" />
<line x1="899.00" y1="533.00" x2="899.00" y2="546.00" stroke="#fff" stroke-width="0.8" />
<rect x="918.00" y="525.00" width="12.00" height="21.00" fill="#ececec" />
<rect x="966.00" y="507.00" width="20.00" height="39.00" fill="#ececec" />
<rect x="961.00" y="497.00" width="11.00" height="12.00" fill="#f0f0f0" />
<rect x="789.00" y="531.80" width="51.60" height="14.20" fill="#d9cfc5" />
<rect x="930.00" y="538.00" width="46.00" height="8.00" fill="#d9cfc5" />
<polyline points="932.0,519.0 922.0,524.0 918.0,532.0" fill="none" stroke="#f6f6f6" stroke-width="1.4" />
<rect x="789.00" y="525.00" width="19.60" height="12.00" fill="#f6f0ee" />
<text x="798.00" y="534.00" font-size="5.6" fill="#888" >E</text>
<rect x="934.00" y="509.80" width="41.80" height="12.40" fill="#f6f3f2" stroke="none" stroke-width="1" />
<text x="952.60" y="517.40" font-size="5" fill="#444" text-anchor="middle" >25 m</text>
<path d="M941 517 v2.4 h28 v-2.4" fill="none" stroke="#333" stroke-width="0.6" />
<rect x="928.00" y="525.00" width="47.80" height="11.60" fill="#f6f3f2" stroke="none" stroke-width="1" />
<text x="951.00" y="532.60" font-size="5" fill="#444" text-anchor="middle" >100 ft</text>
<path d="M935 531.6 v2.4 h34 v-2.4" fill="none" stroke="#333" stroke-width="0.6" />
<polyline points="728.0,420.4 760.0,420.2 800.0,418.4 832.0,407.6 852.0,395.0 868.0,380.0 888.0,356.0 920.0,328.0 960.0,296.6 988.0,282.0" fill="none" stroke="#f01010" stroke-width="1.4" stroke-linejoin="round"/>
<polyline points="830.4,405.4 850.4,392.8 866.4,377.8 886.4,353.8 918.4,325.8 958.4,294.4 986.4,279.8" fill="none" stroke="#f01010" stroke-width="1.1" stroke-linejoin="round"/>
<polyline points="728.0,420.4 742.0,422.0 775.0,421.0 800.0,418.4" fill="none" stroke="#f01010" stroke-width="0.9" />
<polyline points="800.0,418.4 746.0,425.4 749.0,434.0" fill="none" stroke="#e01010" stroke-width="1.1" />
<rect x="731.00" y="423.00" width="45.00" height="24.00" fill="none" stroke="#f04040" stroke-width="0.4" />
<path d="M739 441.6 q1 -4 6 -5 q5 -3.4 12 -3 q6 0.6 10.4 4.4 q1.6 2 0.6 4.6 h-29z" fill="#c4141c" />
<path d="M746.6 436.4 q4 -2.6 9 -2.4 q3 0.2 5.6 2.4z" fill="#3a1a1e" />
<circle cx="744.80" cy="442.20" r="2.1" fill="#222" />
<circle cx="744.80" cy="442.20" r="1" fill="#bbb" />
<circle cx="763.00" cy="442.20" r="2.1" fill="#222" />
<circle cx="763.00" cy="442.20" r="1" fill="#bbb" />
<circle cx="668.00" cy="305.00" r="13.6" fill="#ffffff" stroke="none" stroke-width="1" opacity="0.82"/>
<path d="M666.2 295.6 l1.8 -2.4 l1.8 2.4z M666.2 314.4 l1.8 2.4 l1.8 -2.4z M658.6 303.2 l-2.4 1.8 l2.4 1.8z M677.4 303.2 l2.4 1.8 l-2.4 1.8z" fill="#222" />
<rect x="663.40" y="334.60" width="9.60" height="78.00" fill="#ffffff" stroke="none" stroke-width="1" opacity="0.8"/>
<line x1="668.00" y1="344.00" x2="668.00" y2="404.00" stroke="#555" stroke-width="1.3" />
<circle cx="668.00" cy="353.40" r="2.2" fill="#fff" stroke="#222" stroke-width="0.9" />
<text x="668.00" y="340.60" font-size="5.6" fill="#777" text-anchor="middle" >+</text>
<text x="668.00" y="411.40" font-size="5.6" fill="#777" text-anchor="middle" >–</text>
</g>
<rect x="647.00" y="283.00" width="339.40" height="263.20" fill="none" stroke="#c8d4e4" stroke-width="0.6" />
<rect x="18.60" y="447.60" width="200.00" height="7.00" fill="url(#tbI)" />
<rect x="20.10" y="448.40" width="6.20" height="5.40" fill="#fff" stroke="#5a74a8" stroke-width="0.6" />
<line x1="20.10" y1="449.00" x2="26.30" y2="449.00" stroke="#5a74a8" stroke-width="0.8" />
<path d="M21.6 453.0 l1.6 -2.2 l1.2 1 l1.2 -1.6" fill="none" stroke="#c33" stroke-width="0.7" />
<text x="29.60" y="452.90" font-size="5.6" fill="#445" >[20] Trace window CNOE_A.blf</text>
<rect x="18.60" y="454.60" width="200.00" height="11.00" fill="#f4f6f9" />
<rect x="20.60" y="457.60" width="3.40" height="3.60" fill="#4a78c0" />
<rect x="25.40" y="457.60" width="3.40" height="3.60" fill="#8a6a4a" />
<rect x="30.00" y="457.60" width="3.40" height="3.60" fill="#c87a3a" />
<rect x="35.00" y="457.60" width="3.40" height="3.60" fill="#3a6ac0" />
<rect x="40.60" y="457.60" width="3.40" height="3.60" fill="#2a5ab0" />
<rect x="46.00" y="457.60" width="3.40" height="3.60" fill="#4a5a9a" />
<rect x="53.60" y="457.60" width="3.40" height="3.60" fill="#d83a2a" />
<rect x="59.00" y="457.60" width="3.40" height="3.60" fill="#aaa" />
<rect x="64.60" y="457.60" width="3.40" height="3.60" fill="#ccc" />
<rect x="70.00" y="457.60" width="3.40" height="3.60" fill="#2a4ab0" />
<rect x="76.00" y="457.60" width="3.40" height="3.60" fill="#888" />
<rect x="82.00" y="457.60" width="3.40" height="3.60" fill="#3a5ab0" />
<rect x="35.60" y="456.00" width="6.60" height="7.60" fill="none" stroke="#8ab0e0" stroke-width="0.4" />
<rect x="80.60" y="456.00" width="6.60" height="7.60" fill="none" stroke="#8ab0e0" stroke-width="0.4" />
<rect x="89.60" y="456.00" width="52.40" height="8.60" fill="#fff" stroke="#cfcfcf" stroke-width="0.5" />
<text x="91.60" y="462.40" font-size="5.4" fill="#999" >&lt;Search&gt;</text>
<path d="M137 459.4 l1.6 1.6 l1.6 -1.6" fill="none" stroke="#777" stroke-width="0.5" />
<rect x="145.60" y="458.00" width="3.40" height="3.60" fill="#d86a2a" />
<rect x="151.60" y="458.00" width="3.40" height="3.60" fill="#c87a4a" />
<rect x="159.60" y="458.00" width="3.40" height="3.60" fill="#ccc" />
<rect x="166.00" y="458.00" width="3.40" height="3.60" fill="#ccc" />
<rect x="172.60" y="458.00" width="3.40" height="3.60" fill="#6a9ac8" />
<rect x="178.60" y="458.00" width="3.40" height="3.60" fill="#6a9ac8" />
<rect x="18.60" y="465.60" width="68.00" height="11.40" fill="#f2f2f2" stroke="#e2e2e2" stroke-width="0.4" />
<text x="50.00" y="473.40" font-size="5.4" fill="#666" text-anchor="middle" >Bus Systems</text>
<path d="M80.6 473 l1.2 -1.6 l1.2 1.6z" fill="#555" />
<rect x="18.60" y="477.00" width="68.00" height="68.60" fill="#fff" />
<rect x="20.60" y="479.00" width="4.60" height="4.60" fill="#fff" stroke="#888" stroke-width="0.5" />
<path d="M21.4 481.2 l1.2 1.4 l1.8 -2.6" fill="none" stroke="#555" stroke-width="0.6" />
<text x="28.40" y="483.60" font-size="5.4" fill="#4a4af0" text-decoration="underline">CAN 1 (3/3)</text>
<rect x="86.60" y="465.60" width="2.60" height="80.00" fill="#5a5a5a" />
<rect x="90.00" y="465.60" width="7.40" height="80.00" fill="#fdd9ad" />
<text transform="translate(92,468) rotate(90)" font-size="4.6" fill="#555">00:00:00:0</text>
<rect x="97.40" y="465.60" width="121.00" height="80.00" fill="#fff" />
<text x="100.00" y="473.20" font-size="5.4" fill="#777" >Time</text>
<text x="166.00" y="473.20" font-size="5.4" fill="#777" >Channel</text>
<text x="100.00" y="483.40" font-size="5" fill="#888" >▫</text>
<rect x="104.60" y="479.60" width="2.60" height="2.60" fill="#7a9ac8" />
<text x="109.40" y="483.00" font-size="8.4" fill="#555" >60.725567</text>
<text x="165.00" y="483.00" font-size="8.4" fill="#555" >CAN 1</text>
<rect x="114.60" y="487.00" width="104.00" height="10.60" fill="#dcdcdc" />
<text x="115.60" y="494.40" font-size="8.4" fill="#555" >sigEngineSpeed</text>
<path d="M108.6 491.2 q1.2 -1.6 2.4 0 t2.4 0" fill="none" stroke="#8ab0d8" stroke-width="0.5" />
<text x="115.60" y="505.00" font-size="8.4" fill="#555" >sigEngineForce</text>
<path d="M108.6 501.8 q1.2 -1.6 2.4 0 t2.4 0" fill="none" stroke="#8ab0d8" stroke-width="0.5" />
<text x="115.60" y="515.60" font-size="8.4" fill="#555" >sigMileageEngineECU</text>
<path d="M108.6 512.4 q1.2 -1.6 2.4 0 t2.4 0" fill="none" stroke="#8ab0d8" stroke-width="0.5" />
<text x="115.60" y="526.20" font-size="8.4" fill="#555" >sigInjection</text>
<path d="M108.6 522.9999999999999 q1.2 -1.6 2.4 0 t2.4 0" fill="none" stroke="#8ab0d8" stroke-width="0.5" />
<line x1="106.00" y1="486.00" x2="106.00" y2="524.00" stroke="#ddd" stroke-width="0.4" />
<rect x="97.40" y="538.60" width="121.00" height="7.00" fill="#f0f0f0" />
<rect x="105.00" y="539.20" width="113.00" height="5.80" fill="#c6c6c6" />
<path d="M102 540.2 l-1.8 1.8 l1.8 1.8" fill="none" stroke="#444" stroke-width="0.7" />
<rect x="203" y="445" width="586" height="275.6" fill="#fff" filter="url(#sh)"/>
<rect x="203.00" y="445.00" width="586.00" height="275.60" fill="#f0f0f0" stroke="#8a8a8a" stroke-width="0.6" />
<rect x="203.40" y="445.40" width="585.20" height="9.00" fill="url(#winT)" />
<path d="M205.6 452.6 l2.6 -4.6 l1.4 2 l1.8 -3 v5.6z" fill="#e8682a" />
<path d="M205.6 452.6 l2.6 -4.6 l0.6 4.6z" fill="#3a6ac8" />
<text x="216.00" y="452.40" font-size="5.8" fill="#445" >[6] Engine Simulation</text>
<rect x="770.60" y="447.00" width="5.00" height="5.00" fill="#fff" stroke="#c8d4e4" stroke-width="0.4" />
<text x="773.10" y="451.20" font-size="4.2" fill="#445" text-anchor="middle" >_</text>
<rect x="776.40" y="447.00" width="5.00" height="5.00" fill="#fff" stroke="#c8d4e4" stroke-width="0.4" />
<text x="778.90" y="451.20" font-size="4.2" fill="#445" text-anchor="middle" >▫</text>
<rect x="782.20" y="447.00" width="5.00" height="5.00" fill="#fff" stroke="#c8d4e4" stroke-width="0.4" />
<text x="784.70" y="451.20" font-size="4.2" fill="#445" text-anchor="middle" >×</text>
<rect x="203.60" y="454.60" width="91.40" height="92.60" fill="#f0f0f0" stroke="#808080" stroke-width="1.1" />
<rect x="203.60" y="548.40" width="91.40" height="171.60" fill="#ffffff" stroke="#808080" stroke-width="1.1" />
<rect x="295.60" y="454.60" width="493.00" height="177.00" fill="#ffffff" stroke="#808080" stroke-width="1.1" />
<rect x="207.40" y="458.00" width="11.20" height="11.20" fill="#e4effb" stroke="#4a7ac8" stroke-width="0.8" rx="1"/>
<circle cx="214.00" cy="462.40" r="2.1" fill="none" stroke="#334" stroke-width="0.6" />
<line x1="210.40" y1="467.00" x2="212.60" y2="464.20" stroke="#334" stroke-width="0.8" />
<text x="209.00" y="466.40" font-size="4.2" fill="#334" >A</text>
<rect x="222.60" y="459.00" width="68.40" height="9.60" fill="#fff" stroke="#c4c4c4" stroke-width="0.5" />
<path d="M285.6 463 l1.6 1.6 l1.6 -1.6" fill="none" stroke="#777" stroke-width="0.5" />
<path d="M209 476 h4 l-1.4 -1.4 M213 476 l-1.4 1.4" fill="none" stroke="#333" stroke-width="0.7" />
<rect x="215.40" y="473.60" width="2.60" height="7.00" fill="none" stroke="#555" stroke-width="0.5" />
<line x1="215.40" y1="476.00" x2="218.00" y2="476.00" stroke="#555" stroke-width="0.4" />
<line x1="215.40" y1="478.20" x2="218.00" y2="478.20" stroke="#555" stroke-width="0.4" />
<rect x="222.60" y="472.00" width="68.40" height="9.40" fill="#e1e1e1" stroke="#c4c4c4" stroke-width="0.5" />
<text x="224.40" y="479.00" font-size="5.2" fill="#555" >Model</text>
<path d="M285.6 476 l1.6 1.6 l1.6 -1.6" fill="none" stroke="#777" stroke-width="0.5" />
<rect x="205.60" y="485.00" width="32.00" height="9.60" fill="#fafafa" stroke="#dcdcdc" stroke-width="0.4" />
<rect x="208.00" y="487.00" width="3.20" height="4.60" fill="#fff" stroke="#667" stroke-width="0.4" />
<text x="214.00" y="492.40" font-size="5.2" fill="#555" >Explorer</text>
<rect x="238.40" y="486.00" width="41.00" height="8.60" fill="#ececec" stroke="#dcdcdc" stroke-width="0.4" />
<rect x="241.00" y="487.60" width="3.60" height="4.00" fill="#fff" stroke="#778" stroke-width="0.4" />
<text x="247.00" y="492.40" font-size="5.2" fill="#555" >Search result</text>
<rect x="204.40" y="494.40" width="78.00" height="52.00" fill="#fafafa" />
<rect x="204.40" y="494.60" width="78.00" height="8.80" fill="#d2d2d2" />
<rect x="208.00" y="495.60" width="6.40" height="6.40" fill="#fff" stroke="#888" stroke-width="0.4" />
<rect x="208.80" y="496.40" width="2.00" height="2.00" fill="#d83030" />
<rect x="211.40" y="496.80" width="2.00" height="2.00" fill="#3a6ac0" />
<rect x="209.60" y="499.20" width="2.40" height="2.00" fill="#30a040" />
<text x="220.60" y="501.20" font-size="5.2" fill="#555" >sldemo_autotrans_a</text>
<rect x="223.60" y="505.60" width="5.00" height="4.60" fill="#e8b84a" stroke="#b88a2a" stroke-width="0.4" />
<rect x="226.20" y="504.60" width="3.00" height="3.00" fill="#3a5ab8" />
<text x="236.60" y="510.20" font-size="5.2" fill="#555" >Base Workspace</text>
<rect x="223.60" y="514.60" width="5.00" height="4.60" fill="#e8b84a" stroke="#b88a2a" stroke-width="0.4" />
<rect x="226.20" y="513.60" width="3.00" height="3.00" fill="#3a5ab8" />
<text x="236.60" y="519.20" font-size="5.2" fill="#555" >Model Workspace</text>
<rect x="223.60" y="522.60" width="6.00" height="6.00" fill="#fff" stroke="#c04040" stroke-width="0.5" />
<rect x="224.60" y="523.80" width="2.00" height="1.60" fill="#c04040" />
<rect x="226.80" y="525.80" width="2.00" height="1.60" fill="#c04040" />
<text x="236.60" y="528.20" font-size="5.2" fill="#555" >Engine</text>
<path d="M212.4 534.2 l1.8 1.8 l-1.8 1.8" fill="none" stroke="#666" stroke-width="0.6" />
<rect x="223.60" y="531.60" width="6.00" height="6.00" fill="#fff" stroke="#c04040" stroke-width="0.5" />
<rect x="224.60" y="532.80" width="2.00" height="1.60" fill="#c04040" />
<rect x="226.80" y="534.80" width="2.00" height="1.60" fill="#c04040" />
<text x="236.60" y="537.20" font-size="5.2" fill="#555" >Filling_Level</text>
<path d="M212.4 543.2 l1.8 1.8 l-1.8 1.8" fill="none" stroke="#666" stroke-width="0.6" />
<rect x="223.60" y="540.60" width="6.00" height="6.00" fill="#f4f4f4" stroke="#777" stroke-width="0.5" rx="1.2"/>
<circle cx="226.00" cy="543.20" r="0.9" fill="none" stroke="#777" stroke-width="0.4" />
<circle cx="227.40" cy="544.40" r="0.9" fill="none" stroke="#777" stroke-width="0.4" />
<text x="236.60" y="546.20" font-size="5.2" fill="#555" >ShiftLogic</text>
<rect x="282.60" y="494.40" width="8.60" height="52.00" fill="#f0f0f0" />
<rect x="283.40" y="502.00" width="7.00" height="18.00" fill="#c4c4c4" />
<path d="M285 499.6 l1.8 -1.8 l1.8 1.8" fill="none" stroke="#444" stroke-width="0.7" />
<path d="M285 541.6 l1.8 1.8 l1.8 -1.8" fill="none" stroke="#444" stroke-width="0.7" />
<text x="207.00" y="556.00" font-size="5.2" fill="#555" >Name/type</text>
<path d="M207.4 561.6 l1.8 1.8 l1.8 -1.8" fill="none" stroke="#444" stroke-width="0.7" />
<rect x="219.60" y="559.40" width="6.40" height="6.40" fill="#fff" stroke="#888" stroke-width="0.4" />
<rect x="220.40" y="560.20" width="2.00" height="2.00" fill="#d83030" />
<rect x="223.00" y="560.60" width="2.00" height="2.00" fill="#3a6ac0" />
<rect x="221.20" y="563.00" width="2.40" height="2.00" fill="#30a040" />
<text x="231.40" y="565.20" font-size="5.2" fill="#555" >sldemo_autotrans_a</text>
<path d="M219.0 570.8 l1.8 1.8 l-1.8 1.8" fill="none" stroke="#666" stroke-width="0.6" />
<rect x="229.00" y="569.00" width="6.40" height="5.00" fill="#f4f4f4" stroke="#888" stroke-width="0.5" />
<rect x="230.40" y="570.20" width="3.60" height="2.60" fill="none" stroke="#c08080" stroke-width="0.4" />
<text x="241.40" y="573.80" font-size="5.2" fill="#555" >Brake_In</text>
<path d="M219.0 579.4 l1.8 1.8 l-1.8 1.8" fill="none" stroke="#666" stroke-width="0.6" />
<rect x="229.00" y="577.02" width="6.00" height="6.00" fill="#fff" stroke="#c04040" stroke-width="0.5" />
<rect x="230.00" y="578.22" width="2.00" height="1.60" fill="#c04040" />
<rect x="232.20" y="580.22" width="2.00" height="1.60" fill="#c04040" />
<text x="241.40" y="582.42" font-size="5.2" fill="#555" >Engine</text>
<path d="M219.0 588.0 l1.8 1.8 l-1.8 1.8" fill="none" stroke="#666" stroke-width="0.6" />
<rect x="229.00" y="585.64" width="6.00" height="6.00" fill="#fff" stroke="#c04040" stroke-width="0.5" />
<rect x="230.00" y="586.84" width="2.00" height="1.60" fill="#c04040" />
<rect x="232.20" y="588.84" width="2.00" height="1.60" fill="#c04040" />
<text x="241.40" y="591.04" font-size="5.2" fill="#555" >Filling_Level</text>
<rect x="229.00" y="594.86" width="6.40" height="5.00" fill="#f4f4f4" stroke="#888" stroke-width="0.5" />
<rect x="230.40" y="596.06" width="3.60" height="2.60" fill="none" stroke="#c08080" stroke-width="0.4" />
<text x="241.40" y="599.66" font-size="5.2" fill="#555" >Gear_Out</text>
<path d="M219.0 605.3 l1.8 1.8 l-1.8 1.8" fill="none" stroke="#666" stroke-width="0.6" />
<rect x="229.00" y="603.48" width="6.40" height="5.00" fill="#f4f4f4" stroke="#888" stroke-width="0.5" />
<rect x="230.40" y="604.68" width="3.60" height="2.60" fill="none" stroke="#c08080" stroke-width="0.4" />
<text x="241.40" y="608.28" font-size="5.2" fill="#555" >RPM_Out</text>
<path d="M219.0 613.9 l1.8 1.8 l-1.8 1.8" fill="none" stroke="#666" stroke-width="0.6" />
<rect x="229.00" y="611.50" width="6.00" height="6.00" fill="#f4f4f4" stroke="#777" stroke-width="0.5" rx="1.2"/>
<circle cx="231.40" cy="614.10" r="0.9" fill="none" stroke="#777" stroke-width="0.4" />
<circle cx="232.80" cy="615.30" r="0.9" fill="none" stroke="#777" stroke-width="0.4" />
<text x="241.40" y="616.90" font-size="5.2" fill="#555" >ShiftLogic</text>
<path d="M219.0 622.5 l1.8 1.8 l-1.8 1.8" fill="none" stroke="#666" stroke-width="0.6" />
<rect x="229.00" y="620.72" width="6.40" height="5.00" fill="#f4f4f4" stroke="#888" stroke-width="0.5" />
<rect x="230.40" y="621.92" width="3.60" height="2.60" fill="none" stroke="#c08080" stroke-width="0.4" />
<text x="241.40" y="625.52" font-size="5.2" fill="#555" >Speed_mph_Out</text>
<rect x="229.00" y="629.34" width="6.40" height="5.00" fill="#f4f4f4" stroke="#888" stroke-width="0.5" />
<rect x="230.40" y="630.54" width="3.60" height="2.60" fill="none" stroke="#c08080" stroke-width="0.4" />
<text x="241.40" y="634.14" font-size="5.2" fill="#555" >T1</text>
<rect x="229.00" y="637.96" width="6.40" height="5.00" fill="#f4f4f4" stroke="#888" stroke-width="0.5" />
<rect x="230.40" y="639.16" width="3.60" height="2.60" fill="none" stroke="#c08080" stroke-width="0.4" />
<text x="241.40" y="642.76" font-size="5.2" fill="#555" >T1000</text>
<rect x="229.00" y="646.58" width="6.40" height="5.00" fill="#f4f4f4" stroke="#888" stroke-width="0.5" />
<rect x="230.40" y="647.78" width="3.60" height="2.60" fill="none" stroke="#c08080" stroke-width="0.4" />
<text x="241.40" y="651.38" font-size="5.2" fill="#555" >T2</text>
<rect x="229.00" y="655.20" width="6.40" height="5.00" fill="#f4f4f4" stroke="#888" stroke-width="0.5" />
<rect x="230.40" y="656.40" width="3.60" height="2.60" fill="none" stroke="#c08080" stroke-width="0.4" />
<text x="241.40" y="660.00" font-size="5.2" fill="#555" >T2000</text>
<path d="M219.0 665.6 l1.8 1.8 l-1.8 1.8" fill="none" stroke="#666" stroke-width="0.6" />
<rect x="229.00" y="663.22" width="6.00" height="6.00" fill="#fff" stroke="#c04040" stroke-width="0.5" />
<rect x="230.00" y="664.42" width="2.00" height="1.60" fill="#c04040" />
<rect x="232.20" y="666.42" width="2.00" height="1.60" fill="#c04040" />
<text x="241.40" y="668.62" font-size="5.2" fill="#555" >ThresholdCalculation</text>
<path d="M219.0 674.2 l1.8 1.8 l-1.8 1.8" fill="none" stroke="#666" stroke-width="0.6" />
<rect x="229.00" y="672.44" width="6.40" height="5.00" fill="#f4f4f4" stroke="#888" stroke-width="0.5" />
<rect x="230.40" y="673.64" width="3.60" height="2.60" fill="none" stroke="#c08080" stroke-width="0.4" />
<text x="241.40" y="677.24" font-size="5.2" fill="#555" >Throttle_In</text>
<path d="M219.0 682.9 l1.8 1.8 l-1.8 1.8" fill="none" stroke="#666" stroke-width="0.6" />
<rect x="229.00" y="680.46" width="6.00" height="6.00" fill="#fff" stroke="#c04040" stroke-width="0.5" />
<rect x="230.00" y="681.66" width="2.00" height="1.60" fill="#c04040" />
<rect x="232.20" y="683.66" width="2.00" height="1.60" fill="#c04040" />
<text x="241.40" y="685.86" font-size="5.2" fill="#555" >Transmission</text>
<path d="M219.0 691.5 l1.8 1.8 l-1.8 1.8" fill="none" stroke="#666" stroke-width="0.6" />
<rect x="229.00" y="689.08" width="6.00" height="6.00" fill="#fff" stroke="#c04040" stroke-width="0.5" />
<rect x="230.00" y="690.28" width="2.00" height="1.60" fill="#c04040" />
<rect x="232.20" y="692.28" width="2.00" height="1.60" fill="#c04040" />
<text x="241.40" y="694.48" font-size="5.2" fill="#555" >Vehicle</text>
<rect x="204.40" y="710.00" width="90.00" height="8.60" fill="#f0f0f0" />
<rect x="212.00" y="711.00" width="41.00" height="6.60" fill="#c4c4c4" />
<path d="M208.6 712.4 l-1.8 1.8 l1.8 1.8" fill="none" stroke="#444" stroke-width="0.7" />
<path d="M287 712.4 l1.8 1.8 l-1.8 1.8" fill="none" stroke="#444" stroke-width="0.7" />
<rect x="296.20" y="455.20" width="491.80" height="9.60" fill="url(#hdr)" />
<text x="297.40" y="462.40" font-size="5.2" fill="#222" font-weight="bold" >sldemo_autotrans_a</text>
<rect x="296.20" y="464.80" width="491.80" height="1.80" fill="#e8e8e8" />
<g clip-path="url(#esclip)">
<text x="493.00" y="479.00" font-size="8.3" fill="#111" text-anchor="middle" font-weight="bold" >Automatic Transmission Controller</text>
<polyline points="522.0,552.0 529.6,552.0 529.6,490.0 377.0,490.0 377.0,501.5 401.0,501.5" fill="none" stroke="#222" stroke-width="0.45" />
<path d="M401.0 501.5 l-2.5600000000000005 -1.6 v3.2z" fill="#000" />
<polyline points="363.0,617.0 377.4,617.0 377.4,518.8 401.0,518.8" fill="none" stroke="#222" stroke-width="0.45" />
<path d="M401.0 518.8 l-2.5600000000000005 -1.6 v3.2z" fill="#000" />
<polyline points="448.6,510.6 480.8,510.6 480.8,516.0 564.8,516.0 564.8,538.6 608.0,538.6" fill="none" stroke="#222" stroke-width="0.45" />
<path d="M608.0 538.6 l-2.5600000000000005 -1.6 v3.2z" fill="#000" />
<polyline points="480.8,516.0 480.8,533.4 489.6,533.4" fill="none" stroke="#222" stroke-width="0.45" />
<path d="M489.6 533.4 l-2.5600000000000005 -1.6 v3.2z" fill="#000" />
<polyline points="462.7,544.6 474.6,544.6 474.6,504.0 577.6,504.0 577.6,513.0 608.0,513.0" fill="none" stroke="#222" stroke-width="0.45" />
<path d="M608.0 513.0 l-2.5600000000000005 -1.6 v3.2z" fill="#000" />
<polyline points="474.6,544.6 489.6,544.6" fill="none" stroke="#222" stroke-width="0.45" />
<path d="M489.6 544.6 l-2.5600000000000005 -1.6 v3.2z" fill="#000" />
<polyline points="474.6,544.6 474.6,588.4 459.0,588.4" fill="none" stroke="#222" stroke-width="0.45" />
<path d="M459.0 588.4 l2.5600000000000005 -1.6 v3.2z" fill="#000" />
<polyline points="484.0,631.0 484.0,555.0 489.6,555.0" fill="none" stroke="#222" stroke-width="0.45" />
<path d="M489.6 555.0 l-2.5600000000000005 -1.6 v3.2z" fill="#000" />
<polyline points="529.6,552.0 529.6,594.0 540.0,594.0" fill="none" stroke="#222" stroke-width="0.45" />
<path d="M540.0 594.0 l-2.5600000000000005 -1.6 v3.2z" fill="#000" />
<polyline points="529.6,632.0 529.6,614.4 540.0,614.4" fill="none" stroke="#222" stroke-width="0.45" />
<path d="M540.0 614.4 l-2.5600000000000005 -1.6 v3.2z" fill="#000" />
<polyline points="589.5,594.0 646.0,594.0 646.0,632.0" fill="none" stroke="#222" stroke-width="0.45" />
<polyline points="600.4,594.0 600.4,565.8 608.0,565.8" fill="none" stroke="#222" stroke-width="0.45" />
<path d="M608.0 565.8 l-2.5600000000000005 -1.6 v3.2z" fill="#000" />
<polyline points="589.5,614.0 595.0,614.0 595.0,632.0" fill="none" stroke="#222" stroke-width="0.45" />
<polyline points="404.0,588.6 396.4,588.6 396.4,562.0 404.0,562.0" fill="none" stroke="#222" stroke-width="0.45" />
<path d="M404.0 562.0 l-2.5600000000000005 -1.6 v3.2z" fill="#000" />
<polyline points="404.0,598.6 393.0,598.6 393.0,551.0 404.0,551.0" fill="none" stroke="#222" stroke-width="0.45" />
<path d="M404.0 551.0 l-2.5600000000000005 -1.6 v3.2z" fill="#000" />
<polyline points="386.2,632.0 386.2,540.6 404.0,540.6" fill="none" stroke="#222" stroke-width="0.45" />
<path d="M404.0 540.6 l-2.5600000000000005 -1.6 v3.2z" fill="#000" />
<polyline points="462.7,559.5 465.8,559.5 465.8,573.6 429.7,573.6 429.7,583.5" fill="none" stroke="#222" stroke-width="0.45" />
<path d="M429.7 583.5 l-1.6 -2.5600000000000005 h3.2z" fill="#000" />
<polyline points="465.8,632.0 465.8,598.6 459.0,598.6" fill="none" stroke="#222" stroke-width="0.45" />
<path d="M459.0 598.6 l2.5600000000000005 -1.6 v3.2z" fill="#000" />
<polyline points="330.5,617.0 355.0,617.0" fill="none" stroke="#222" stroke-width="0.45" />
<path d="M355.0 617.0 l-2.5600000000000005 -1.6 v3.2z" fill="#000" />
<polyline points="330.5,624.6 342.0,624.6" fill="none" stroke="#222" stroke-width="0.45" />
<path d="M342.0 624.6 l-2.5600000000000005 -1.6 v3.2z" fill="#000" />
<polyline points="330.5,631.0 338.0,631.0" fill="none" stroke="#222" stroke-width="0.45" />
<polyline points="701.8,513.0 737.0,513.0" fill="none" stroke="#222" stroke-width="0.45" />
<path d="M737.0 513.0 l-2.5600000000000005 -1.6 v3.2z" fill="#000" />
<polyline points="701.8,539.0 717.0,539.0 717.0,548.0 737.0,548.0" fill="none" stroke="#222" stroke-width="0.45" />
<path d="M737.0 548.0 l-2.5600000000000005 -1.6 v3.2z" fill="#000" />
<polyline points="701.8,566.0 718.0,566.0 718.0,583.0 737.0,583.0" fill="none" stroke="#222" stroke-width="0.45" />
<path d="M737.0 583.0 l-2.5600000000000005 -1.6 v3.2z" fill="#000" />
<circle cx="480.80" cy="510.60" r="0.7" fill="#000" />
<circle cx="474.60" cy="544.60" r="0.7" fill="#000" />
<circle cx="529.60" cy="552.00" r="0.7" fill="#000" />
<circle cx="377.40" cy="617.00" r="0.7" fill="#000" />
<rect x="401.00" y="492.50" width="47.60" height="35.50" fill="#fff" stroke="#999" stroke-width="0.5" />
<polygon points="402.6,496.0 446.0,493.6 446.0,505.0 440.0,514.0 408.0,519.0 402.6,512.0" fill="#3a3a3e" />
<polygon points="404.0,497.0 444.0,494.6 444.0,499.0 404.0,502.0" fill="#5a5a60" />
<rect x="410.00" y="504.00" width="8.00" height="9.00" fill="#d8d8d8" stroke="#888" stroke-width="0.4" />
<ellipse cx="414" cy="504" rx="4" ry="1.6" fill="#f4f4f4" stroke="#999" stroke-width="0.3"/>
<rect x="422.00" y="503.00" width="8.00" height="9.00" fill="#d8d8d8" stroke="#888" stroke-width="0.4" />
<ellipse cx="426" cy="503" rx="4" ry="1.6" fill="#f4f4f4" stroke="#999" stroke-width="0.3"/>
<rect x="433.00" y="501.00" width="8.00" height="9.00" fill="#d8d8d8" stroke="#888" stroke-width="0.4" />
<ellipse cx="437" cy="501" rx="4" ry="1.6" fill="#f4f4f4" stroke="#999" stroke-width="0.3"/>
<ellipse cx="415.6" cy="520.6" rx="2" ry="3.2" fill="none" stroke="#c83030" stroke-width="0.9"/>
<ellipse cx="427" cy="522.4" rx="2" ry="3.2" fill="none" stroke="#c83030" stroke-width="0.9"/>
<ellipse cx="435.4" cy="519.6" rx="2" ry="3.2" fill="none" stroke="#c83030" stroke-width="0.9"/>
<ellipse cx="442.6" cy="512" rx="2" ry="3.2" fill="none" stroke="#c83030" stroke-width="0.9"/>
<text x="424.60" y="533.00" font-size="4" fill="#333" text-anchor="middle" >Engine</text>
<text x="451.00" y="489.00" font-size="4" fill="#333" text-anchor="middle" >ImpellerTorque</text>
<text x="450.60" y="504.00" font-size="3" fill="#22c" >T</text>
<text x="450.60" y="507.00" font-size="3" fill="#22c" >T</text>
<rect x="404.00" y="534.60" width="58.70" height="30.90" fill="#f01414" stroke="#b00" stroke-width="0.4" />
<text x="405.60" y="541.80" font-size="3.8" fill="#600" >speed</text>
<text x="405.60" y="552.40" font-size="3.8" fill="#600" >up_th</text>
<text x="405.60" y="563.20" font-size="3.8" fill="#600" >down_th</text>
<text x="461.00" y="545.80" font-size="3.8" fill="#600" text-anchor="end" >gear</text>
<text x="461.00" y="560.60" font-size="3.8" fill="#600" text-anchor="end" >CALC_TH</text>
<circle cx="431.00" cy="546.60" r="2" fill="none" stroke="#800" stroke-width="0.4" />
<circle cx="434.00" cy="548.60" r="2" fill="none" stroke="#800" stroke-width="0.4" />
<circle cx="436.60" cy="551.00" r="2" fill="none" stroke="#800" stroke-width="0.4" />
<text x="433.00" y="571.00" font-size="4" fill="#333" text-anchor="middle" >ShiftLogic</text>
<rect x="404.00" y="583.50" width="55.00" height="20.10" fill="#f01414" stroke="#b00" stroke-width="0.4" />
<text x="405.60" y="589.80" font-size="3.8" fill="#600" >down_th</text>
<text x="405.60" y="600.00" font-size="3.8" fill="#600" >up_th</text>
<text x="457.60" y="589.80" font-size="3.8" fill="#600" text-anchor="end" >gear</text>
<text x="457.60" y="600.00" font-size="3.8" fill="#600" text-anchor="end" >throttle</text>
<text x="430.00" y="588.00" font-size="3.6" fill="#600" text-anchor="middle" >run()</text>
<text x="431.60" y="609.20" font-size="4" fill="#333" text-anchor="middle" >ThresholdCalculation</text>
<rect x="299.50" y="612.00" width="31.00" height="22.00" fill="#e0e0e0" stroke="#aaa" stroke-width="0.5" />
<rect x="301.40" y="614.00" width="7.40" height="6.60" fill="#c8102a" />
<path d="M303.0 615.4 l3.4 1.9 l-3.4 1.9" fill="none" stroke="#fff" stroke-width="1.1" />
<text x="329.00" y="618.20" font-size="3.8" fill="#444" text-anchor="end" >data</text>
<text x="329.00" y="624.80" font-size="3.8" fill="#444" text-anchor="end" >rows</text>
<text x="329.00" y="631.20" font-size="3.8" fill="#444" text-anchor="end" >cols</text>
<text x="340.60" y="615.80" font-size="3.8" fill="#444" text-anchor="middle" >Throttle</text>
<rect x="355.00" y="613.60" width="8.40" height="7.60" fill="#fff" stroke="#555" stroke-width="0.4" />
<rect x="357.60" y="615.60" width="3.60" height="3.60" fill="none" stroke="#777" stroke-width="0.4" />
<rect x="342.00" y="621.80" width="8.40" height="7.60" fill="#fff" stroke="#555" stroke-width="0.4" />
<rect x="344.60" y="623.80" width="3.60" height="3.60" fill="none" stroke="#777" stroke-width="0.4" />
<rect x="489.60" y="528.00" width="31.40" height="31.00" fill="#fff" stroke="#999" stroke-width="0.5" />
<polygon points="495.0,546.0 509.0,540.0 518.0,548.0 504.0,556.0" fill="#2a2a2a" />
<polygon points="497.0,546.4 509.0,541.6 515.6,548.0 504.0,553.6" fill="#bdbdbd" />
<line x1="506.00" y1="547.60" x2="501.00" y2="534.60" stroke="#999" stroke-width="1.8" />
<ellipse cx="500.6" cy="533.6" rx="3.6" ry="2" fill="#c41a1a" transform="rotate(-25 500.6 533.6)"/>
<text x="505.00" y="564.40" font-size="4" fill="#333" text-anchor="middle" >Transmission</text>
<text x="523.00" y="531.60" font-size="3" fill="#22c" >T</text>
<text x="523.00" y="534.80" font-size="3" fill="#22c" >T</text>
<text x="523.00" y="546.00" font-size="3" fill="#22c" >T</text>
<text x="523.00" y="549.20" font-size="3" fill="#22c" >T</text>
<text x="543.00" y="575.00" font-size="4" fill="#333" text-anchor="middle" >OutputTorque</text>
<text x="563.80" y="582.40" font-size="4" fill="#333" text-anchor="middle" >Vehicle</text>
<rect x="540.00" y="584.60" width="49.50" height="38.80" fill="#fff" stroke="#999" stroke-width="0.5" />
<path d="M542.6 612 q-1 -8 6 -13 q10 -9 26 -11 q9 -1 11.4 4 q1.6 6 -3 12 q-7 8 -18 13 q-14 6 -20 2 q-2.6 -2 -2.4 -7z" fill="url(#carG)" stroke="#777" stroke-width="0.3" />
<path d="M556 598 q8 -6.6 19 -8 q6 0 5 5 q-8 1 -14 5 q-5 3 -7 1z" fill="#3a1518" />
<path d="M563 596.6 q5 -3.6 11 -4.6 q2 1.4 0 3.6 q-6 0.6 -9 3z" fill="#b01a22" />
<ellipse cx="553" cy="617.4" rx="3.6" ry="4.4" fill="#222" transform="rotate(-30 553 617.4)"/>
<ellipse cx="582.6" cy="604" rx="2.8" ry="3.8" fill="#222" transform="rotate(-30 582.6 604)"/>
<text x="591.60" y="589.60" font-size="3" fill="#22c" >T</text>
<text x="591.60" y="592.80" font-size="3" fill="#22c" >T</text>
<text x="591.60" y="611.00" font-size="3" fill="#22c" >T</text>
<text x="591.60" y="614.20" font-size="3" fill="#22c" >T</text>
<rect x="608.00" y="498.50" width="93.80" height="80.00" fill="#cc0000" stroke="#e22" stroke-width="0.5" />
<text x="609.60" y="514.20" font-size="3.8" fill="#5a0000" >Gear_In</text>
<text x="609.60" y="540.20" font-size="3.8" fill="#5a0000" >RPM_In</text>
<text x="609.60" y="567.20" font-size="3.8" fill="#5a0000" >VehicleSpeed_In</text>
<text x="700.40" y="514.20" font-size="3.8" fill="#5a0000" text-anchor="end" >Gear_Out</text>
<text x="700.40" y="540.20" font-size="3.8" fill="#5a0000" text-anchor="end" >RPM_Out</text>
<text x="700.40" y="567.20" font-size="3.8" fill="#5a0000" text-anchor="end" >VehicleSpeed_Out</text>
<text x="654.00" y="584.40" font-size="4" fill="#333" text-anchor="middle" >Filling _Level</text>
<path d="M608 498.5 h3 v0.8 h-2.2 v2.2 h-0.8z" fill="#f44" />
<path d="M698.6 498.5 h3 v0.8 h-2.2 v2.2 h-0.8z" fill="#f44" />
<path d="M608 575.6 h3 v0.8 h-2.2 v2.2 h-0.8z" fill="#f44" />
<polygon points="588.0,526.0 604.0,513.0 588.0,521.6" fill="#b01020" />
<rect x="583.00" y="521.60" width="5.20" height="6.40" fill="#b01020" />
<text x="585.60" y="527.00" font-size="4.6" fill="#fff" text-anchor="middle" font-weight="bold" >2</text>
<rect x="737.00" y="501.40" width="31.00" height="21.60" fill="#e6e6e6" stroke="#a8a8a8" stroke-width="0.5" />
<rect x="739.00" y="503.40" width="7.00" height="6.60" fill="#c8102a" />
<path d="M740.6 504.8 l3.4 1.9 l-3.4 1.9" fill="none" stroke="#fff" stroke-width="1.1" />
<text x="755.00" y="515.40" font-size="3.8" fill="#444" text-anchor="middle" >CANape</text>
<text x="752.60" y="529.00" font-size="4" fill="#333" text-anchor="middle" >Gear _Out</text>
<rect x="737.00" y="537.00" width="31.00" height="21.60" fill="#e6e6e6" stroke="#a8a8a8" stroke-width="0.5" />
<rect x="739.00" y="539.00" width="7.00" height="6.60" fill="#c8102a" />
<path d="M740.6 540.4 l3.4 1.9 l-3.4 1.9" fill="none" stroke="#fff" stroke-width="1.1" />
<text x="755.00" y="551.00" font-size="3.8" fill="#444" text-anchor="middle" >CANape</text>
<text x="752.60" y="564.60" font-size="4" fill="#333" text-anchor="middle" >RPM_Out</text>
<rect x="737.00" y="572.00" width="31.00" height="21.60" fill="#e6e6e6" stroke="#a8a8a8" stroke-width="0.5" />
<rect x="739.00" y="574.00" width="7.00" height="6.60" fill="#c8102a" />
<path d="M740.6 575.4 l3.4 1.9 l-3.4 1.9" fill="none" stroke="#fff" stroke-width="1.1" />
<text x="755.00" y="586.00" font-size="3.8" fill="#444" text-anchor="middle" >CANape</text>
<text x="752.60" y="599.60" font-size="4" fill="#333" text-anchor="middle" >Speed _mph _Out</text>
<text x="724.00" y="536.80" font-size="4" fill="#333" text-anchor="middle" >EngineRPM</text>
<text x="727.60" y="570.00" font-size="4" fill="#333" text-anchor="middle" >VehicleSpeed</text>
<polygon points="703.6,540.6 706.0,554.0 712.0,554.0" fill="#b01020" />
<rect x="706.00" y="554.00" width="41.00" height="7.40" fill="#b01020" />
<text x="726.50" y="559.80" font-size="4.7" fill="#fff" text-anchor="middle" font-weight="bold" >2820.341720267</text>
<polygon points="703.4,569.0 706.0,606.4 711.0,606.4" fill="#b01020" />
<rect x="706.00" y="606.40" width="36.00" height="7.40" fill="#b01020" />
<text x="724.00" y="612.20" font-size="4.7" fill="#fff" text-anchor="middle" font-weight="bold" >35.717498135</text>
</g>
<rect x="297" y="631.6" width="585.4" height="155.0" fill="#fff" filter="url(#sh)"/>
<rect x="297.00" y="631.60" width="585.40" height="155.00" fill="#f0f0f0" stroke="#8a8a8a" stroke-width="0.6" />
<rect x="297.40" y="632.00" width="584.60" height="11.40" fill="url(#winT)" />
<path d="M299.6 641.6 l3.2 -6 l1.8 2.6 l2.2 -3.8 v7.2z" fill="#e8682a" />
<path d="M299.6 641.6 l3.2 -6 l0.8 6z" fill="#3a6ac8" />
<text x="316.00" y="640.60" font-size="7.2" fill="#445" >[8] Gear Simulation</text>
<rect x="857.60" y="634.00" width="6.40" height="6.40" fill="#fff" stroke="#c8d4e4" stroke-width="0.4" />
<text x="860.80" y="639.40" font-size="5.4" fill="#445" text-anchor="middle" >_</text>
<rect x="866.00" y="634.00" width="6.40" height="6.40" fill="#fff" stroke="#c8d4e4" stroke-width="0.4" />
<text x="869.20" y="639.40" font-size="5.4" fill="#445" text-anchor="middle" >▫</text>
<rect x="874.40" y="634.00" width="6.40" height="6.40" fill="#fff" stroke="#c8d4e4" stroke-width="0.4" />
<text x="877.60" y="639.40" font-size="5.4" fill="#445" text-anchor="middle" >×</text>
<rect x="298.00" y="644.00" width="122.00" height="86.60" fill="#f0f0f0" stroke="#808080" stroke-width="1.2" />
<rect x="298.00" y="732.00" width="122.00" height="54.00" fill="#ffffff" stroke="#808080" stroke-width="1.2" />
<rect x="421.60" y="644.00" width="460.00" height="142.00" fill="#ffffff" stroke="#808080" stroke-width="1.2" />
<rect x="304.40" y="649.60" width="13.60" height="13.40" fill="#e4effb" stroke="#4a7ac8" stroke-width="0.9" rx="1.2"/>
<circle cx="312.60" cy="655.00" r="2.6" fill="none" stroke="#334" stroke-width="0.7" />
<line x1="308.00" y1="661.00" x2="310.80" y2="657.40" stroke="#334" stroke-width="1" />
<text x="306.00" y="659.60" font-size="5" fill="#334" >A</text>
<rect x="323.00" y="651.00" width="92.00" height="12.00" fill="#fff" stroke="#c4c4c4" stroke-width="0.6" />
<path d="M408 656 l2 2 l2 -2" fill="none" stroke="#777" stroke-width="0.6" />
<path d="M305.6 672.6 h5.6 l-1.8 -1.8 M311.2 672.6 l-1.8 1.8" fill="none" stroke="#333" stroke-width="0.8" />
<rect x="314.00" y="669.60" width="3.40" height="8.60" fill="none" stroke="#555" stroke-width="0.5" />
<line x1="314.00" y1="672.60" x2="317.40" y2="672.60" stroke="#555" stroke-width="0.4" />
<line x1="314.00" y1="675.40" x2="317.40" y2="675.40" stroke="#555" stroke-width="0.4" />
<rect x="323.00" y="667.40" width="92.00" height="11.00" fill="#e1e1e1" stroke="#c4c4c4" stroke-width="0.6" />
<text x="325.40" y="675.60" font-size="6.4" fill="#555" >Model</text>
<path d="M408 672 l2 2 l2 -2" fill="none" stroke="#777" stroke-width="0.6" />
<rect x="302.40" y="685.00" width="41.00" height="10.40" fill="#fafafa" stroke="#dcdcdc" stroke-width="0.4" />
<rect x="305.60" y="687.20" width="3.60" height="5.40" fill="#fff" stroke="#667" stroke-width="0.4" />
<text x="314.60" y="693.00" font-size="6.4" fill="#555" >Explorer</text>
<rect x="344.60" y="686.00" width="51.60" height="9.40" fill="#ececec" stroke="#dcdcdc" stroke-width="0.4" />
<rect x="347.60" y="688.00" width="4.20" height="4.60" fill="#fff" stroke="#778" stroke-width="0.4" />
<text x="355.60" y="693.00" font-size="6.4" fill="#555" >Search result</text>
<rect x="299.00" y="695.60" width="107.00" height="23.60" fill="#fafafa" />
<path d="M307.4 701.0 l1.8 1.8 l1.8 -1.8" fill="none" stroke="#444" stroke-width="0.7" />
<g transform="translate(323.0 697.4) scale(1.45) translate(-323.0 -697.4)">
<rect x="323.00" y="697.40" width="6.00" height="6.00" fill="#f4f4f4" stroke="#777" stroke-width="0.5" rx="1.2"/>
<circle cx="325.40" cy="700.00" r="0.9" fill="none" stroke="#777" stroke-width="0.4" />
<circle cx="326.80" cy="701.20" r="0.9" fill="none" stroke="#777" stroke-width="0.4" />
</g>
<text x="341.00" y="704.80" font-size="6.4" fill="#555" >ShiftLogic</text>
<rect x="299.00" y="708.60" width="107.00" height="10.80" fill="#d2d2d2" />
<g transform="translate(342.0 709.4) scale(1.45) translate(-342.0 -709.4)">
<rect x="342.00" y="709.40" width="6.00" height="6.00" fill="#f4f4f4" stroke="#777" stroke-width="0.5" rx="1.2"/>
<circle cx="344.40" cy="712.00" r="0.9" fill="none" stroke="#777" stroke-width="0.4" />
<circle cx="345.80" cy="713.20" r="0.9" fill="none" stroke="#777" stroke-width="0.4" />
</g>
<text x="360.40" y="716.80" font-size="6.4" fill="#555" >gear_state</text>
<rect x="406.00" y="695.60" width="13.00" height="23.60" fill="#f0f0f0" />
<path d="M408.6 703.6 l2 -2 l2 2" fill="none" stroke="#444" stroke-width="0.8" />
<path d="M408.6 712 l2 2 l2 -2" fill="none" stroke="#444" stroke-width="0.8" />
<rect x="299.00" y="719.40" width="107.00" height="9.60" fill="#f0f0f0" />
<rect x="312.00" y="720.60" width="78.00" height="7.20" fill="#c4c4c4" />
<path d="M306.4 722 l-2 2 l2 2" fill="none" stroke="#444" stroke-width="0.8" />
<path d="M398.6 722 l2 2 l-2 2" fill="none" stroke="#444" stroke-width="0.8" />
<text x="303.60" y="740.60" font-size="6.4" fill="#555" >Name/type</text>
<path d="M304.4 749.6 l1.8 1.8 l1.8 -1.8" fill="none" stroke="#444" stroke-width="0.7" />
<g transform="translate(318.6 745.6) scale(1.45) translate(-318.6 -745.6)">
<rect x="318.60" y="745.60" width="6.00" height="6.00" fill="#f4f4f4" stroke="#777" stroke-width="0.5" rx="1.2"/>
<circle cx="321.00" cy="748.20" r="0.9" fill="none" stroke="#777" stroke-width="0.4" />
<circle cx="322.40" cy="749.40" r="0.9" fill="none" stroke="#777" stroke-width="0.4" />
</g>
<text x="335.00" y="753.00" font-size="6.4" fill="#555" >gear_state</text>
<circle cx="337.00" cy="762.00" r="3" fill="#f4f4f4" stroke="#888" stroke-width="0.5" />
<text x="348.00" y="764.20" font-size="6.4" fill="#555" >first</text>
<circle cx="337.00" cy="773.00" r="3" fill="#f4f4f4" stroke="#888" stroke-width="0.5" />
<clipPath id="gsl"><rect x="299" y="733" width="108" height="41.6"/></clipPath><g clip-path="url(#gsl)">
<text x="348.00" y="775.40" font-size="6.4" fill="#555" >second</text>
</g>
<rect x="406.00" y="733.00" width="13.00" height="41.60" fill="#f0f0f0" />
<rect x="407.00" y="742.60" width="8.60" height="9.60" fill="#c4c4c4" />
<path d="M408.6 738.6 l2 -2 l2 2" fill="none" stroke="#444" stroke-width="0.8" />
<path d="M408.6 767 l2 2 l2 -2" fill="none" stroke="#444" stroke-width="0.8" />
<rect x="299.00" y="774.60" width="120.00" height="9.60" fill="#f0f0f0" />
<rect x="310.00" y="775.80" width="50.00" height="7.20" fill="#c4c4c4" />
<path d="M306.4 777.4 l-2 2 l2 2" fill="none" stroke="#444" stroke-width="0.8" />
<path d="M398.6 777.4 l2 2 l-2 2" fill="none" stroke="#444" stroke-width="0.8" />
<rect x="422.40" y="644.80" width="458.60" height="12.40" fill="url(#hdr)" />
<text x="423.60" y="654.40" font-size="6.2" fill="#222" font-weight="bold" >sldemo_autotrans_a/ShiftLogic/gear_state</text>
<rect x="422.40" y="657.20" width="458.60" height="2.00" fill="#e6e6e6" />
<line x1="422.40" y1="660.60" x2="881.00" y2="660.60" stroke="#999" stroke-width="0.6" />
<g clip-path="url(#gsclip)">
<rect x="427.40" y="666.40" width="452.00" height="81.20" fill="#fdf2dc" />
<rect x="429.6" y="668" width="520" height="77.6" rx="15" fill="none" stroke="#999" stroke-width="0.8" stroke-dasharray="7 3"/>
<text x="441.00" y="686.40" font-size="9.2" fill="#666" letter-spacing="0.25">gear _state</text>
<circle cx="438.40" cy="698.00" r="2" fill="#3a3ab0" />
<line x1="440.00" y1="698.00" x2="460.00" y2="698.00" stroke="#888" stroke-width="0.6" />
<path d="M458.6 695.8 l6.4 2.2 l-6.4 2.2z" fill="#fff" stroke="#888" stroke-width="0.5" />
<rect x="467.00" y="691.70" width="97.50" height="40.70" fill="#fdf2dc" stroke="#8a8a8a" stroke-width="0.6" rx="4.6"/>
<text x="470.60" y="700.70" font-size="8.3" fill="#444" letter-spacing="0.42" word-spacing="1">first</text>
<text x="470.60" y="711.00" font-size="8.3" fill="#444" letter-spacing="0.42" word-spacing="1">%VState{ 'Gear', 1 }</text>
<text x="470.60" y="721.30" font-size="8.3" fill="#444" letter-spacing="0.42" word-spacing="1">entry: gear = 1;</text>
<rect x="622.70" y="690.00" width="98.30" height="45.00" fill="#fdf2dc" stroke="#8a8a8a" stroke-width="0.6" rx="4.6"/>
<rect x="622.70" y="690.00" width="98.30" height="45.00" fill="none" stroke="#1a5cf0" stroke-width="1.7" />
<text x="626.30" y="699.00" font-size="8.3" fill="#444" letter-spacing="0.42" word-spacing="1">second</text>
<text x="626.30" y="709.30" font-size="8.3" fill="#444" letter-spacing="0.42" word-spacing="1">%VState{ 'Gear', 2 }</text>
<text x="626.30" y="719.60" font-size="8.3" fill="#444" letter-spacing="0.42" word-spacing="1">entry: gear = 2;</text>
<rect x="777.40" y="690.00" width="97.00" height="42.40" fill="#fdf2dc" stroke="#8a8a8a" stroke-width="0.6" rx="4.6"/>
<text x="781.00" y="699.00" font-size="8.3" fill="#444" letter-spacing="0.42" word-spacing="1">third</text>
<text x="781.00" y="709.30" font-size="8.3" fill="#444" letter-spacing="0.42" word-spacing="1">%VState{ 'Gear', 3 }</text>
<text x="781.00" y="719.60" font-size="8.3" fill="#444" letter-spacing="0.42" word-spacing="1">entry: gear = 3;</text>
<line x1="564.50" y1="703.00" x2="617.70" y2="703.00" stroke="#888" stroke-width="0.6" />
<path d="M615.7 700.6 l6.6 2.4 l-6.6 2.4z" fill="#fff" stroke="#888" stroke-width="0.5" />
<line x1="569.50" y1="717.00" x2="622.70" y2="717.00" stroke="#888" stroke-width="0.6" />
<path d="M571.5 714.6 l-6.6 2.4 l6.6 2.4z" fill="#fff" stroke="#888" stroke-width="0.5" />
<text x="593.00" y="690.20" font-size="9.4" fill="#6a6a98" text-anchor="middle" >UP</text>
<text x="589.00" y="733.00" font-size="9.4" fill="#6a6a98" text-anchor="middle" >DOWN</text>
<text x="612.7" y="720.2" font-size="8" fill="#6a6a98" font-style="italic" text-anchor="middle">2</text>
<rect x="609.30" y="715.00" width="7.00" height="4.00" fill="#fdf2dc" stroke="none" stroke-width="1" />
<text x="612.7" y="720.2" font-size="8" fill="#6a6a98" font-style="italic" text-anchor="middle">2</text>
<line x1="721.00" y1="703.00" x2="772.40" y2="703.00" stroke="#888" stroke-width="0.6" />
<path d="M770.4 700.6 l6.6 2.4 l-6.6 2.4z" fill="#fff" stroke="#888" stroke-width="0.5" />
<line x1="726.00" y1="717.00" x2="777.40" y2="717.00" stroke="#888" stroke-width="0.6" />
<path d="M728.0 714.6 l-6.6 2.4 l6.6 2.4z" fill="#fff" stroke="#888" stroke-width="0.5" />
<text x="740.00" y="692.00" font-size="9.4" fill="#6a6a98" text-anchor="middle" >UP</text>
<text x="746.00" y="738.00" font-size="9.4" fill="#6a6a98" text-anchor="middle" >DOWN</text>
<text x="767.4" y="720.2" font-size="8" fill="#6a6a98" font-style="italic" text-anchor="middle">2</text>
<rect x="764.00" y="715.00" width="7.00" height="4.00" fill="#fdf2dc" stroke="none" stroke-width="1" />
<text x="767.4" y="720.2" font-size="8" fill="#6a6a98" font-style="italic" text-anchor="middle">2</text>
<rect x="724.80" y="701.00" width="5.60" height="4.00" fill="#fdf2dc" stroke="none" stroke-width="1" />
<text x="727.4" y="706.4" font-size="8" fill="#6a6a98" font-style="italic" text-anchor="middle">1</text>
<line x1="874.40" y1="703.00" x2="882.00" y2="703.00" stroke="#888" stroke-width="0.6" />
<line x1="874.40" y1="717.00" x2="882.00" y2="717.00" stroke="#888" stroke-width="0.6" />
</g>
<rect x="422.40" y="774.60" width="458.60" height="9.60" fill="#f0f0f0" />
<rect x="432.00" y="775.80" width="313.00" height="7.20" fill="#c4c4c4" />
<path d="M428.6 777.4 l-2 2 l2 2" fill="none" stroke="#444" stroke-width="0.8" />
<path d="M872 777.4 l2 2 l-2 2" fill="none" stroke="#444" stroke-width="0.8" />
</svg></body></html>
